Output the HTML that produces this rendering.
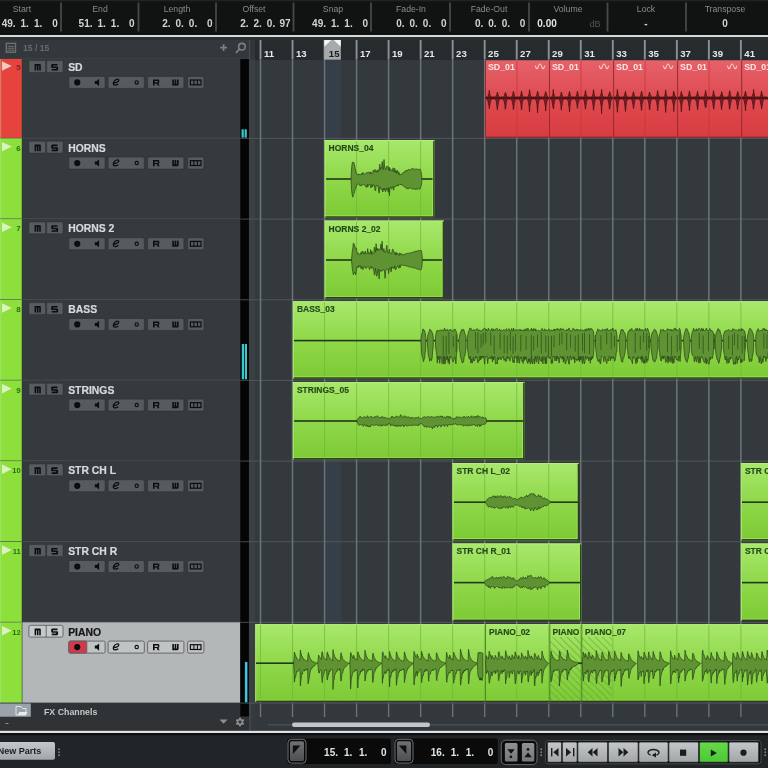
<!DOCTYPE html><html><head><meta charset="utf-8"><style>html,body{margin:0;padding:0;background:#141516;overflow:hidden;width:768px;height:768px}svg{display:block;will-change:transform;filter:blur(0.4px)}</style></head><body>
<svg width="768" height="768" viewBox="0 0 768 768" font-family="'Liberation Sans', sans-serif">
<defs>
<linearGradient id="gclip" x1="0" y1="0" x2="0" y2="1"><stop offset="0" stop-color="#a8e86c"/><stop offset="0.5" stop-color="#90d84a"/><stop offset="1" stop-color="#7cca34"/></linearGradient>
<linearGradient id="rclip" x1="0" y1="0" x2="0" y2="1"><stop offset="0" stop-color="#e6626a"/><stop offset="0.5" stop-color="#de4a50"/><stop offset="1" stop-color="#d83c40"/></linearGradient>
<linearGradient id="gbtnd" x1="0" y1="0" x2="0" y2="1"><stop offset="0" stop-color="#6e7274"/><stop offset="1" stop-color="#4c5052"/></linearGradient>
<linearGradient id="gbtng" x1="0" y1="0" x2="0" y2="1"><stop offset="0" stop-color="#8e9294"/><stop offset="1" stop-color="#74787a"/></linearGradient>
<linearGradient id="ggreen" x1="0" y1="0" x2="0" y2="1"><stop offset="0" stop-color="#66d84a"/><stop offset="1" stop-color="#4cc834"/></linearGradient>
<linearGradient id="gbtn" x1="0" y1="0" x2="0" y2="1"><stop offset="0" stop-color="#c4c8ca"/><stop offset="1" stop-color="#a2a6a8"/></linearGradient>
<pattern id="hatch" width="5" height="5" patternUnits="userSpaceOnUse" patternTransform="rotate(-45)"><rect width="5" height="5" fill="none"/><line x1="0" y1="0" x2="0" y2="5" stroke="#5e9c34" stroke-width="1.1"/></pattern>
</defs>
<rect x="0" y="0" width="768" height="35" fill="#111312"/>
<rect x="0" y="0" width="768" height="1.3" fill="#1f2325"/>
<text x="22.0" y="11.6" font-size="8.7" fill="#878b8d" text-anchor="middle">Start</text>
<text x="100.0" y="11.6" font-size="8.7" fill="#878b8d" text-anchor="middle">End</text>
<text x="177.0" y="11.6" font-size="8.7" fill="#878b8d" text-anchor="middle">Length</text>
<text x="254.0" y="11.6" font-size="8.7" fill="#878b8d" text-anchor="middle">Offset</text>
<text x="333.0" y="11.6" font-size="8.7" fill="#878b8d" text-anchor="middle">Snap</text>
<text x="411.0" y="11.6" font-size="8.7" fill="#878b8d" text-anchor="middle">Fade-In</text>
<text x="489.0" y="11.6" font-size="8.7" fill="#878b8d" text-anchor="middle">Fade-Out</text>
<text x="568.0" y="11.6" font-size="8.7" fill="#878b8d" text-anchor="middle">Volume</text>
<text x="646.0" y="11.6" font-size="8.7" fill="#878b8d" text-anchor="middle">Lock</text>
<text x="725.0" y="11.6" font-size="8.7" fill="#878b8d" text-anchor="middle">Transpose</text>
<rect x="60.1" y="2.5" width="1.8" height="29" fill="#464947"/>
<rect x="137.6" y="2.5" width="1.8" height="29" fill="#464947"/>
<rect x="215.1" y="2.5" width="1.8" height="29" fill="#464947"/>
<rect x="292.6" y="2.5" width="1.8" height="29" fill="#464947"/>
<rect x="370.1" y="2.5" width="1.8" height="29" fill="#464947"/>
<rect x="449.1" y="2.5" width="1.8" height="29" fill="#464947"/>
<rect x="528.1" y="2.5" width="1.8" height="29" fill="#464947"/>
<rect x="606.6" y="2.5" width="1.8" height="29" fill="#464947"/>
<rect x="685.1" y="2.5" width="1.8" height="29" fill="#464947"/>
<text x="15.6" y="26.9" font-size="10" font-weight="bold" fill="#d0d4d4" text-anchor="end">49.</text>
<text x="28.9" y="26.9" font-size="10" font-weight="bold" fill="#d0d4d4" text-anchor="end">1.</text>
<text x="42.3" y="26.9" font-size="10" font-weight="bold" fill="#d0d4d4" text-anchor="end">1.</text>
<text x="57.7" y="26.9" font-size="10" font-weight="bold" fill="#d0d4d4" text-anchor="end">0</text>
<text x="92.5" y="26.9" font-size="10" font-weight="bold" fill="#d0d4d4" text-anchor="end">51.</text>
<text x="105.8" y="26.9" font-size="10" font-weight="bold" fill="#d0d4d4" text-anchor="end">1.</text>
<text x="119.2" y="26.9" font-size="10" font-weight="bold" fill="#d0d4d4" text-anchor="end">1.</text>
<text x="134.6" y="26.9" font-size="10" font-weight="bold" fill="#d0d4d4" text-anchor="end">0</text>
<text x="170.5" y="26.9" font-size="10" font-weight="bold" fill="#d0d4d4" text-anchor="end">2.</text>
<text x="183.8" y="26.9" font-size="10" font-weight="bold" fill="#d0d4d4" text-anchor="end">0.</text>
<text x="197.2" y="26.9" font-size="10" font-weight="bold" fill="#d0d4d4" text-anchor="end">0.</text>
<text x="212.6" y="26.9" font-size="10" font-weight="bold" fill="#d0d4d4" text-anchor="end">0</text>
<text x="248.5" y="26.9" font-size="10" font-weight="bold" fill="#d0d4d4" text-anchor="end">2.</text>
<text x="261.8" y="26.9" font-size="10" font-weight="bold" fill="#d0d4d4" text-anchor="end">2.</text>
<text x="275.2" y="26.9" font-size="10" font-weight="bold" fill="#d0d4d4" text-anchor="end">0.</text>
<text x="290.6" y="26.9" font-size="10" font-weight="bold" fill="#d0d4d4" text-anchor="end">97</text>
<text x="326.0" y="26.9" font-size="10" font-weight="bold" fill="#d0d4d4" text-anchor="end">49.</text>
<text x="339.3" y="26.9" font-size="10" font-weight="bold" fill="#d0d4d4" text-anchor="end">1.</text>
<text x="352.7" y="26.9" font-size="10" font-weight="bold" fill="#d0d4d4" text-anchor="end">1.</text>
<text x="368.1" y="26.9" font-size="10" font-weight="bold" fill="#d0d4d4" text-anchor="end">0</text>
<text x="404.5" y="26.9" font-size="10" font-weight="bold" fill="#d0d4d4" text-anchor="end">0.</text>
<text x="417.8" y="26.9" font-size="10" font-weight="bold" fill="#d0d4d4" text-anchor="end">0.</text>
<text x="431.2" y="26.9" font-size="10" font-weight="bold" fill="#d0d4d4" text-anchor="end">0.</text>
<text x="446.6" y="26.9" font-size="10" font-weight="bold" fill="#d0d4d4" text-anchor="end">0</text>
<text x="483.3" y="26.9" font-size="10" font-weight="bold" fill="#d0d4d4" text-anchor="end">0.</text>
<text x="496.6" y="26.9" font-size="10" font-weight="bold" fill="#d0d4d4" text-anchor="end">0.</text>
<text x="510.0" y="26.9" font-size="10" font-weight="bold" fill="#d0d4d4" text-anchor="end">0.</text>
<text x="525.4" y="26.9" font-size="10" font-weight="bold" fill="#d0d4d4" text-anchor="end">0</text>
<text x="537.3" y="26.9" font-size="10" font-weight="bold" fill="#e0e4e4">0.00</text>
<text x="600.5" y="26.9" font-size="9" fill="#505456" text-anchor="end">dB</text>
<text x="646" y="26.9" font-size="10" font-weight="bold" fill="#d0d4d4" text-anchor="middle">-</text>
<text x="725" y="26.9" font-size="10" font-weight="bold" fill="#d0d4d4" text-anchor="middle">0</text>
<rect x="0" y="35" width="768" height="2" fill="#d6dada"/>
<rect x="0" y="37" width="255" height="693" fill="#343a3d"/>
<rect x="0" y="37" width="249" height="22" fill="#32383b"/>
<rect x="0" y="58.6" width="249" height="1" fill="#464c4f"/>
<rect x="249" y="40" width="1" height="19" fill="#464c4f"/>
<rect x="6.3" y="43.4" width="9.2" height="8.8" fill="none" stroke="#6a6f71" stroke-width="1.4"/>
<rect x="7.6" y="45.9" width="6.6" height="1" fill="#6a6f71"/>
<rect x="7.6" y="47.8" width="6.6" height="1" fill="#6a6f71"/>
<rect x="7.6" y="49.7" width="6.6" height="1" fill="#6a6f71"/>
<text x="23" y="51.2" font-size="8.6" font-weight="bold" fill="#676c6e">15 / 15</text>
<path d="M220.2 47.7h6.8M223.6 44.3v6.8" stroke="#7c8082" stroke-width="1.7"/>
<circle cx="241.9" cy="46.7" r="3.3" fill="none" stroke="#7c8082" stroke-width="1.6"/><path d="M239.5 49.2 L236.4 52.3" stroke="#7c8082" stroke-width="1.8" stroke-linecap="round"/>
<rect x="22" y="59.0" width="218.3" height="79.4" fill="#343a3d"/>
<rect x="0" y="59.0" width="22" height="79.4" fill="#e6433f"/>
<rect x="0" y="59.0" width="1.2" height="79.4" fill="#b8e8a0" opacity="0.35"/>
<rect x="21.6" y="59.0" width="1" height="79.4" fill="#2a3a20" opacity="0.6"/>
<path d="M2 61.2 L2 70.7 L11.7 65.9 Z" fill="#f4f8ee" opacity="0.75"/>
<text x="20.8" y="70.0" font-size="8" font-weight="bold" fill="#8a2220" text-anchor="end">5</text>
<rect x="28.9" y="60.6" width="16.7" height="11.8" rx="1" fill="#575c5f" stroke="#2a2f32" stroke-width="0.5"/>
<rect x="46.7" y="60.6" width="16.3" height="11.8" rx="1" fill="#575c5f" stroke="#2a2f32" stroke-width="0.5"/>
<path d="M34.60 63.93 h5.2 q1 0 1 1 v5.6 h-1.6 v-5 h-0.75 v5 h-1.5 v-5 h-0.75 v5 h-1.6z" fill="#0c0d0e"/>
<path d="M52.20 63.93 h5.3 v1.6 h-4.5 v0.95 h3.9 q1.2 0 1.2 1.2 v1.65 q0 1.2 -1.2 1.2 h-5.2 v-1.6 h4.6 v-0.95 h-3.9 q-1.2 0 -1.2 -1.2 v-1.65 q0 -1.2 1.2 -1.2z" fill="#0c0d0e"/>
<text x="68.2" y="70.8" font-size="10.4" font-weight="bold" fill="#d6dadb" stroke="#d6dadb" stroke-width="0.2">SD</text>
<rect x="68.8" y="76.4" width="36.3" height="12.0" rx="1.5" fill="#565b5e" stroke="#2a2f32" stroke-width="0.6"/>
<rect x="108.1" y="76.4" width="36.2" height="12.0" rx="1.5" fill="#565b5e" stroke="#2a2f32" stroke-width="0.6"/>
<rect x="147.6" y="76.4" width="36.3" height="12.0" rx="1.5" fill="#565b5e" stroke="#2a2f32" stroke-width="0.6"/>
<rect x="187.6" y="76.4" width="16.3" height="12.0" rx="1.5" fill="#565b5e" stroke="#2a2f32" stroke-width="0.6"/>
<circle cx="77.25" cy="82.4" r="3.1" fill="#0c0d0e"/>
<path d="M94.8 80.93 h1.8 l2.5 -2.1 v7.2 l-2.5 -2.1 h-1.8z" fill="#0c0d0e"/>
<path d="M113.6 83.03 c1.6 -0.3 4.6 -0.9 5.1 -2.3 c0.4 -1.2 -0.8 -1.8 -2 -1.4 c-1.9 0.6 -3.6 3 -3.4 4.6 c0.2 1.6 2.6 1.7 4.6 0.4" fill="none" stroke="#0c0d0e" stroke-width="1.25" stroke-linecap="round"/>
<circle cx="136.7" cy="82.4" r="1.7" fill="none" stroke="#0c0d0e" stroke-width="1.1"/>
<path d="M153.00 79.38 h5 q1.3 0 1.3 1.3 v1.3 q0 1 -0.9 1.2 l1.1 2.3 h-1.8 l-1 -2.1 h-2.1 v2.1 h-1.6z M154.60 80.88 v1.4 h3.3 v-1.4z" fill="#0c0d0e" fill-rule="evenodd"/>
<path d="M172.30 79.38 h1.6 v4.5 h0.75 v-4.5 h1.6 v4.5 h0.75 v-4.5 h1.6 v4.8 q0 1.3 -1.3 1.3 h-5 z" fill="#0c0d0e"/>
<rect x="190.4" y="80.0" width="10.6" height="4.8" fill="none" stroke="#0c0d0e" stroke-width="1.2"/>
<path d="M193.9 80.0 v4.8 M197.4 80.0 v4.8" stroke="#0c0d0e" stroke-width="1"/>
<rect x="0" y="137.8" width="768" height="1.2" fill="#50565a"/>
<rect x="22" y="138.4" width="218.3" height="80.7" fill="#343a3d"/>
<rect x="0" y="138.4" width="22" height="80.7" fill="#8de03c"/>
<rect x="0" y="138.4" width="1.2" height="80.7" fill="#b8e8a0" opacity="0.35"/>
<rect x="21.6" y="138.4" width="1" height="80.7" fill="#2a3a20" opacity="0.6"/>
<path d="M2 141.9 L2 151.4 L11.7 146.6 Z" fill="#f4f8ee" opacity="0.75"/>
<text x="20.8" y="150.7" font-size="8" font-weight="bold" fill="#2f6a14" text-anchor="end">6</text>
<rect x="28.9" y="141.3" width="16.7" height="11.8" rx="1" fill="#575c5f" stroke="#2a2f32" stroke-width="0.5"/>
<rect x="46.7" y="141.3" width="16.3" height="11.8" rx="1" fill="#575c5f" stroke="#2a2f32" stroke-width="0.5"/>
<path d="M34.60 144.60 h5.2 q1 0 1 1 v5.6 h-1.6 v-5 h-0.75 v5 h-1.5 v-5 h-0.75 v5 h-1.6z" fill="#0c0d0e"/>
<path d="M52.20 144.60 h5.3 v1.6 h-4.5 v0.95 h3.9 q1.2 0 1.2 1.2 v1.65 q0 1.2 -1.2 1.2 h-5.2 v-1.6 h4.6 v-0.95 h-3.9 q-1.2 0 -1.2 -1.2 v-1.65 q0 -1.2 1.2 -1.2z" fill="#0c0d0e"/>
<text x="68.2" y="151.5" font-size="10.4" font-weight="bold" fill="#d6dadb" stroke="#d6dadb" stroke-width="0.2">HORNS</text>
<rect x="68.8" y="157.1" width="36.3" height="12.0" rx="1.5" fill="#565b5e" stroke="#2a2f32" stroke-width="0.6"/>
<rect x="108.1" y="157.1" width="36.2" height="12.0" rx="1.5" fill="#565b5e" stroke="#2a2f32" stroke-width="0.6"/>
<rect x="147.6" y="157.1" width="36.3" height="12.0" rx="1.5" fill="#565b5e" stroke="#2a2f32" stroke-width="0.6"/>
<rect x="187.6" y="157.1" width="16.3" height="12.0" rx="1.5" fill="#565b5e" stroke="#2a2f32" stroke-width="0.6"/>
<circle cx="77.25" cy="163.1" r="3.1" fill="#0c0d0e"/>
<path d="M94.8 161.60 h1.8 l2.5 -2.1 v7.2 l-2.5 -2.1 h-1.8z" fill="#0c0d0e"/>
<path d="M113.6 163.70 c1.6 -0.3 4.6 -0.9 5.1 -2.3 c0.4 -1.2 -0.8 -1.8 -2 -1.4 c-1.9 0.6 -3.6 3 -3.4 4.6 c0.2 1.6 2.6 1.7 4.6 0.4" fill="none" stroke="#0c0d0e" stroke-width="1.25" stroke-linecap="round"/>
<circle cx="136.7" cy="163.1" r="1.7" fill="none" stroke="#0c0d0e" stroke-width="1.1"/>
<path d="M153.00 160.05 h5 q1.3 0 1.3 1.3 v1.3 q0 1 -0.9 1.2 l1.1 2.3 h-1.8 l-1 -2.1 h-2.1 v2.1 h-1.6z M154.60 161.55 v1.4 h3.3 v-1.4z" fill="#0c0d0e" fill-rule="evenodd"/>
<path d="M172.30 160.05 h1.6 v4.5 h0.75 v-4.5 h1.6 v4.5 h0.75 v-4.5 h1.6 v4.8 q0 1.3 -1.3 1.3 h-5 z" fill="#0c0d0e"/>
<rect x="190.4" y="160.7" width="10.6" height="4.8" fill="none" stroke="#0c0d0e" stroke-width="1.2"/>
<path d="M193.9 160.7 v4.8 M197.4 160.7 v4.8" stroke="#0c0d0e" stroke-width="1"/>
<rect x="0" y="218.5" width="768" height="1.2" fill="#50565a"/>
<rect x="22" y="219.1" width="218.3" height="80.7" fill="#343a3d"/>
<rect x="0" y="219.1" width="22" height="80.7" fill="#8de03c"/>
<rect x="0" y="219.1" width="1.2" height="80.7" fill="#b8e8a0" opacity="0.35"/>
<rect x="21.6" y="219.1" width="1" height="80.7" fill="#2a3a20" opacity="0.6"/>
<path d="M2 222.6 L2 232.1 L11.7 227.3 Z" fill="#f4f8ee" opacity="0.75"/>
<text x="20.8" y="231.4" font-size="8" font-weight="bold" fill="#2f6a14" text-anchor="end">7</text>
<rect x="28.9" y="222.0" width="16.7" height="11.8" rx="1" fill="#575c5f" stroke="#2a2f32" stroke-width="0.5"/>
<rect x="46.7" y="222.0" width="16.3" height="11.8" rx="1" fill="#575c5f" stroke="#2a2f32" stroke-width="0.5"/>
<path d="M34.60 225.27 h5.2 q1 0 1 1 v5.6 h-1.6 v-5 h-0.75 v5 h-1.5 v-5 h-0.75 v5 h-1.6z" fill="#0c0d0e"/>
<path d="M52.20 225.27 h5.3 v1.6 h-4.5 v0.95 h3.9 q1.2 0 1.2 1.2 v1.65 q0 1.2 -1.2 1.2 h-5.2 v-1.6 h4.6 v-0.95 h-3.9 q-1.2 0 -1.2 -1.2 v-1.65 q0 -1.2 1.2 -1.2z" fill="#0c0d0e"/>
<text x="68.2" y="232.2" font-size="10.4" font-weight="bold" fill="#d6dadb" stroke="#d6dadb" stroke-width="0.2">HORNS 2</text>
<rect x="68.8" y="237.8" width="36.3" height="12.0" rx="1.5" fill="#565b5e" stroke="#2a2f32" stroke-width="0.6"/>
<rect x="108.1" y="237.8" width="36.2" height="12.0" rx="1.5" fill="#565b5e" stroke="#2a2f32" stroke-width="0.6"/>
<rect x="147.6" y="237.8" width="36.3" height="12.0" rx="1.5" fill="#565b5e" stroke="#2a2f32" stroke-width="0.6"/>
<rect x="187.6" y="237.8" width="16.3" height="12.0" rx="1.5" fill="#565b5e" stroke="#2a2f32" stroke-width="0.6"/>
<circle cx="77.25" cy="243.8" r="3.1" fill="#0c0d0e"/>
<path d="M94.8 242.27 h1.8 l2.5 -2.1 v7.2 l-2.5 -2.1 h-1.8z" fill="#0c0d0e"/>
<path d="M113.6 244.37 c1.6 -0.3 4.6 -0.9 5.1 -2.3 c0.4 -1.2 -0.8 -1.8 -2 -1.4 c-1.9 0.6 -3.6 3 -3.4 4.6 c0.2 1.6 2.6 1.7 4.6 0.4" fill="none" stroke="#0c0d0e" stroke-width="1.25" stroke-linecap="round"/>
<circle cx="136.7" cy="243.8" r="1.7" fill="none" stroke="#0c0d0e" stroke-width="1.1"/>
<path d="M153.00 240.72 h5 q1.3 0 1.3 1.3 v1.3 q0 1 -0.9 1.2 l1.1 2.3 h-1.8 l-1 -2.1 h-2.1 v2.1 h-1.6z M154.60 242.22 v1.4 h3.3 v-1.4z" fill="#0c0d0e" fill-rule="evenodd"/>
<path d="M172.30 240.72 h1.6 v4.5 h0.75 v-4.5 h1.6 v4.5 h0.75 v-4.5 h1.6 v4.8 q0 1.3 -1.3 1.3 h-5 z" fill="#0c0d0e"/>
<rect x="190.4" y="241.4" width="10.6" height="4.8" fill="none" stroke="#0c0d0e" stroke-width="1.2"/>
<path d="M193.9 241.4 v4.8 M197.4 241.4 v4.8" stroke="#0c0d0e" stroke-width="1"/>
<rect x="0" y="299.1" width="768" height="1.2" fill="#50565a"/>
<rect x="22" y="299.7" width="218.3" height="80.7" fill="#343a3d"/>
<rect x="0" y="299.7" width="22" height="80.7" fill="#8de03c"/>
<rect x="0" y="299.7" width="1.2" height="80.7" fill="#b8e8a0" opacity="0.35"/>
<rect x="21.6" y="299.7" width="1" height="80.7" fill="#2a3a20" opacity="0.6"/>
<path d="M2 303.2 L2 312.7 L11.7 307.9 Z" fill="#f4f8ee" opacity="0.75"/>
<text x="20.8" y="312.0" font-size="8" font-weight="bold" fill="#2f6a14" text-anchor="end">8</text>
<rect x="28.9" y="302.6" width="16.7" height="11.8" rx="1" fill="#575c5f" stroke="#2a2f32" stroke-width="0.5"/>
<rect x="46.7" y="302.6" width="16.3" height="11.8" rx="1" fill="#575c5f" stroke="#2a2f32" stroke-width="0.5"/>
<path d="M34.60 305.94 h5.2 q1 0 1 1 v5.6 h-1.6 v-5 h-0.75 v5 h-1.5 v-5 h-0.75 v5 h-1.6z" fill="#0c0d0e"/>
<path d="M52.20 305.94 h5.3 v1.6 h-4.5 v0.95 h3.9 q1.2 0 1.2 1.2 v1.65 q0 1.2 -1.2 1.2 h-5.2 v-1.6 h4.6 v-0.95 h-3.9 q-1.2 0 -1.2 -1.2 v-1.65 q0 -1.2 1.2 -1.2z" fill="#0c0d0e"/>
<text x="68.2" y="312.8" font-size="10.4" font-weight="bold" fill="#d6dadb" stroke="#d6dadb" stroke-width="0.2">BASS</text>
<rect x="68.8" y="318.4" width="36.3" height="12.0" rx="1.5" fill="#565b5e" stroke="#2a2f32" stroke-width="0.6"/>
<rect x="108.1" y="318.4" width="36.2" height="12.0" rx="1.5" fill="#565b5e" stroke="#2a2f32" stroke-width="0.6"/>
<rect x="147.6" y="318.4" width="36.3" height="12.0" rx="1.5" fill="#565b5e" stroke="#2a2f32" stroke-width="0.6"/>
<rect x="187.6" y="318.4" width="16.3" height="12.0" rx="1.5" fill="#565b5e" stroke="#2a2f32" stroke-width="0.6"/>
<circle cx="77.25" cy="324.4" r="3.1" fill="#0c0d0e"/>
<path d="M94.8 322.94 h1.8 l2.5 -2.1 v7.2 l-2.5 -2.1 h-1.8z" fill="#0c0d0e"/>
<path d="M113.6 325.04 c1.6 -0.3 4.6 -0.9 5.1 -2.3 c0.4 -1.2 -0.8 -1.8 -2 -1.4 c-1.9 0.6 -3.6 3 -3.4 4.6 c0.2 1.6 2.6 1.7 4.6 0.4" fill="none" stroke="#0c0d0e" stroke-width="1.25" stroke-linecap="round"/>
<circle cx="136.7" cy="324.4" r="1.7" fill="none" stroke="#0c0d0e" stroke-width="1.1"/>
<path d="M153.00 321.39 h5 q1.3 0 1.3 1.3 v1.3 q0 1 -0.9 1.2 l1.1 2.3 h-1.8 l-1 -2.1 h-2.1 v2.1 h-1.6z M154.60 322.89 v1.4 h3.3 v-1.4z" fill="#0c0d0e" fill-rule="evenodd"/>
<path d="M172.30 321.39 h1.6 v4.5 h0.75 v-4.5 h1.6 v4.5 h0.75 v-4.5 h1.6 v4.8 q0 1.3 -1.3 1.3 h-5 z" fill="#0c0d0e"/>
<rect x="190.4" y="322.0" width="10.6" height="4.8" fill="none" stroke="#0c0d0e" stroke-width="1.2"/>
<path d="M193.9 322.0 v4.8 M197.4 322.0 v4.8" stroke="#0c0d0e" stroke-width="1"/>
<rect x="0" y="379.8" width="768" height="1.2" fill="#50565a"/>
<rect x="22" y="380.4" width="218.3" height="80.7" fill="#343a3d"/>
<rect x="0" y="380.4" width="22" height="80.7" fill="#8de03c"/>
<rect x="0" y="380.4" width="1.2" height="80.7" fill="#b8e8a0" opacity="0.35"/>
<rect x="21.6" y="380.4" width="1" height="80.7" fill="#2a3a20" opacity="0.6"/>
<path d="M2 383.9 L2 393.4 L11.7 388.6 Z" fill="#f4f8ee" opacity="0.75"/>
<text x="20.8" y="392.7" font-size="8" font-weight="bold" fill="#2f6a14" text-anchor="end">9</text>
<rect x="28.9" y="383.3" width="16.7" height="11.8" rx="1" fill="#575c5f" stroke="#2a2f32" stroke-width="0.5"/>
<rect x="46.7" y="383.3" width="16.3" height="11.8" rx="1" fill="#575c5f" stroke="#2a2f32" stroke-width="0.5"/>
<path d="M34.60 386.61 h5.2 q1 0 1 1 v5.6 h-1.6 v-5 h-0.75 v5 h-1.5 v-5 h-0.75 v5 h-1.6z" fill="#0c0d0e"/>
<path d="M52.20 386.61 h5.3 v1.6 h-4.5 v0.95 h3.9 q1.2 0 1.2 1.2 v1.65 q0 1.2 -1.2 1.2 h-5.2 v-1.6 h4.6 v-0.95 h-3.9 q-1.2 0 -1.2 -1.2 v-1.65 q0 -1.2 1.2 -1.2z" fill="#0c0d0e"/>
<text x="68.2" y="393.5" font-size="10.4" font-weight="bold" fill="#d6dadb" stroke="#d6dadb" stroke-width="0.2">STRINGS</text>
<rect x="68.8" y="399.1" width="36.3" height="12.0" rx="1.5" fill="#565b5e" stroke="#2a2f32" stroke-width="0.6"/>
<rect x="108.1" y="399.1" width="36.2" height="12.0" rx="1.5" fill="#565b5e" stroke="#2a2f32" stroke-width="0.6"/>
<rect x="147.6" y="399.1" width="36.3" height="12.0" rx="1.5" fill="#565b5e" stroke="#2a2f32" stroke-width="0.6"/>
<rect x="187.6" y="399.1" width="16.3" height="12.0" rx="1.5" fill="#565b5e" stroke="#2a2f32" stroke-width="0.6"/>
<circle cx="77.25" cy="405.1" r="3.1" fill="#0c0d0e"/>
<path d="M94.8 403.61 h1.8 l2.5 -2.1 v7.2 l-2.5 -2.1 h-1.8z" fill="#0c0d0e"/>
<path d="M113.6 405.71 c1.6 -0.3 4.6 -0.9 5.1 -2.3 c0.4 -1.2 -0.8 -1.8 -2 -1.4 c-1.9 0.6 -3.6 3 -3.4 4.6 c0.2 1.6 2.6 1.7 4.6 0.4" fill="none" stroke="#0c0d0e" stroke-width="1.25" stroke-linecap="round"/>
<circle cx="136.7" cy="405.1" r="1.7" fill="none" stroke="#0c0d0e" stroke-width="1.1"/>
<path d="M153.00 402.06 h5 q1.3 0 1.3 1.3 v1.3 q0 1 -0.9 1.2 l1.1 2.3 h-1.8 l-1 -2.1 h-2.1 v2.1 h-1.6z M154.60 403.56 v1.4 h3.3 v-1.4z" fill="#0c0d0e" fill-rule="evenodd"/>
<path d="M172.30 402.06 h1.6 v4.5 h0.75 v-4.5 h1.6 v4.5 h0.75 v-4.5 h1.6 v4.8 q0 1.3 -1.3 1.3 h-5 z" fill="#0c0d0e"/>
<rect x="190.4" y="402.7" width="10.6" height="4.8" fill="none" stroke="#0c0d0e" stroke-width="1.2"/>
<path d="M193.9 402.7 v4.8 M197.4 402.7 v4.8" stroke="#0c0d0e" stroke-width="1"/>
<rect x="0" y="460.5" width="768" height="1.2" fill="#50565a"/>
<rect x="22" y="461.1" width="218.3" height="80.7" fill="#343a3d"/>
<rect x="0" y="461.1" width="22" height="80.7" fill="#8de03c"/>
<rect x="0" y="461.1" width="1.2" height="80.7" fill="#b8e8a0" opacity="0.35"/>
<rect x="21.6" y="461.1" width="1" height="80.7" fill="#2a3a20" opacity="0.6"/>
<path d="M2 464.6 L2 474.1 L11.7 469.3 Z" fill="#f4f8ee" opacity="0.75"/>
<text x="20.8" y="473.4" font-size="7.6" font-weight="bold" fill="#2f6a14" text-anchor="end">10</text>
<rect x="28.9" y="464.0" width="16.7" height="11.8" rx="1" fill="#575c5f" stroke="#2a2f32" stroke-width="0.5"/>
<rect x="46.7" y="464.0" width="16.3" height="11.8" rx="1" fill="#575c5f" stroke="#2a2f32" stroke-width="0.5"/>
<path d="M34.60 467.28 h5.2 q1 0 1 1 v5.6 h-1.6 v-5 h-0.75 v5 h-1.5 v-5 h-0.75 v5 h-1.6z" fill="#0c0d0e"/>
<path d="M52.20 467.28 h5.3 v1.6 h-4.5 v0.95 h3.9 q1.2 0 1.2 1.2 v1.65 q0 1.2 -1.2 1.2 h-5.2 v-1.6 h4.6 v-0.95 h-3.9 q-1.2 0 -1.2 -1.2 v-1.65 q0 -1.2 1.2 -1.2z" fill="#0c0d0e"/>
<text x="68.2" y="474.2" font-size="10.4" font-weight="bold" fill="#d6dadb" stroke="#d6dadb" stroke-width="0.2">STR CH L</text>
<rect x="68.8" y="479.8" width="36.3" height="12.0" rx="1.5" fill="#565b5e" stroke="#2a2f32" stroke-width="0.6"/>
<rect x="108.1" y="479.8" width="36.2" height="12.0" rx="1.5" fill="#565b5e" stroke="#2a2f32" stroke-width="0.6"/>
<rect x="147.6" y="479.8" width="36.3" height="12.0" rx="1.5" fill="#565b5e" stroke="#2a2f32" stroke-width="0.6"/>
<rect x="187.6" y="479.8" width="16.3" height="12.0" rx="1.5" fill="#565b5e" stroke="#2a2f32" stroke-width="0.6"/>
<circle cx="77.25" cy="485.8" r="3.1" fill="#0c0d0e"/>
<path d="M94.8 484.28 h1.8 l2.5 -2.1 v7.2 l-2.5 -2.1 h-1.8z" fill="#0c0d0e"/>
<path d="M113.6 486.38 c1.6 -0.3 4.6 -0.9 5.1 -2.3 c0.4 -1.2 -0.8 -1.8 -2 -1.4 c-1.9 0.6 -3.6 3 -3.4 4.6 c0.2 1.6 2.6 1.7 4.6 0.4" fill="none" stroke="#0c0d0e" stroke-width="1.25" stroke-linecap="round"/>
<circle cx="136.7" cy="485.8" r="1.7" fill="none" stroke="#0c0d0e" stroke-width="1.1"/>
<path d="M153.00 482.73 h5 q1.3 0 1.3 1.3 v1.3 q0 1 -0.9 1.2 l1.1 2.3 h-1.8 l-1 -2.1 h-2.1 v2.1 h-1.6z M154.60 484.23 v1.4 h3.3 v-1.4z" fill="#0c0d0e" fill-rule="evenodd"/>
<path d="M172.30 482.73 h1.6 v4.5 h0.75 v-4.5 h1.6 v4.5 h0.75 v-4.5 h1.6 v4.8 q0 1.3 -1.3 1.3 h-5 z" fill="#0c0d0e"/>
<rect x="190.4" y="483.4" width="10.6" height="4.8" fill="none" stroke="#0c0d0e" stroke-width="1.2"/>
<path d="M193.9 483.4 v4.8 M197.4 483.4 v4.8" stroke="#0c0d0e" stroke-width="1"/>
<rect x="0" y="541.1" width="768" height="1.2" fill="#50565a"/>
<rect x="22" y="541.8" width="218.3" height="80.7" fill="#343a3d"/>
<rect x="0" y="541.8" width="22" height="80.7" fill="#8de03c"/>
<rect x="0" y="541.8" width="1.2" height="80.7" fill="#b8e8a0" opacity="0.35"/>
<rect x="21.6" y="541.8" width="1" height="80.7" fill="#2a3a20" opacity="0.6"/>
<path d="M2 545.2 L2 554.8 L11.7 550.0 Z" fill="#f4f8ee" opacity="0.75"/>
<text x="20.8" y="554.0" font-size="7.6" font-weight="bold" fill="#2f6a14" text-anchor="end">11</text>
<rect x="28.9" y="544.6" width="16.7" height="11.8" rx="1" fill="#575c5f" stroke="#2a2f32" stroke-width="0.5"/>
<rect x="46.7" y="544.6" width="16.3" height="11.8" rx="1" fill="#575c5f" stroke="#2a2f32" stroke-width="0.5"/>
<path d="M34.60 547.95 h5.2 q1 0 1 1 v5.6 h-1.6 v-5 h-0.75 v5 h-1.5 v-5 h-0.75 v5 h-1.6z" fill="#0c0d0e"/>
<path d="M52.20 547.95 h5.3 v1.6 h-4.5 v0.95 h3.9 q1.2 0 1.2 1.2 v1.65 q0 1.2 -1.2 1.2 h-5.2 v-1.6 h4.6 v-0.95 h-3.9 q-1.2 0 -1.2 -1.2 v-1.65 q0 -1.2 1.2 -1.2z" fill="#0c0d0e"/>
<text x="68.2" y="554.9" font-size="10.4" font-weight="bold" fill="#d6dadb" stroke="#d6dadb" stroke-width="0.2">STR CH R</text>
<rect x="68.8" y="560.5" width="36.3" height="12.0" rx="1.5" fill="#565b5e" stroke="#2a2f32" stroke-width="0.6"/>
<rect x="108.1" y="560.5" width="36.2" height="12.0" rx="1.5" fill="#565b5e" stroke="#2a2f32" stroke-width="0.6"/>
<rect x="147.6" y="560.5" width="36.3" height="12.0" rx="1.5" fill="#565b5e" stroke="#2a2f32" stroke-width="0.6"/>
<rect x="187.6" y="560.5" width="16.3" height="12.0" rx="1.5" fill="#565b5e" stroke="#2a2f32" stroke-width="0.6"/>
<circle cx="77.25" cy="566.5" r="3.1" fill="#0c0d0e"/>
<path d="M94.8 564.95 h1.8 l2.5 -2.1 v7.2 l-2.5 -2.1 h-1.8z" fill="#0c0d0e"/>
<path d="M113.6 567.05 c1.6 -0.3 4.6 -0.9 5.1 -2.3 c0.4 -1.2 -0.8 -1.8 -2 -1.4 c-1.9 0.6 -3.6 3 -3.4 4.6 c0.2 1.6 2.6 1.7 4.6 0.4" fill="none" stroke="#0c0d0e" stroke-width="1.25" stroke-linecap="round"/>
<circle cx="136.7" cy="566.5" r="1.7" fill="none" stroke="#0c0d0e" stroke-width="1.1"/>
<path d="M153.00 563.40 h5 q1.3 0 1.3 1.3 v1.3 q0 1 -0.9 1.2 l1.1 2.3 h-1.8 l-1 -2.1 h-2.1 v2.1 h-1.6z M154.60 564.90 v1.4 h3.3 v-1.4z" fill="#0c0d0e" fill-rule="evenodd"/>
<path d="M172.30 563.40 h1.6 v4.5 h0.75 v-4.5 h1.6 v4.5 h0.75 v-4.5 h1.6 v4.8 q0 1.3 -1.3 1.3 h-5 z" fill="#0c0d0e"/>
<rect x="190.4" y="564.1" width="10.6" height="4.8" fill="none" stroke="#0c0d0e" stroke-width="1.2"/>
<path d="M193.9 564.1 v4.8 M197.4 564.1 v4.8" stroke="#0c0d0e" stroke-width="1"/>
<rect x="0" y="621.8" width="768" height="1.2" fill="#50565a"/>
<rect x="22" y="622.4" width="218.3" height="80.7" fill="#b3b7b8"/>
<rect x="0" y="622.4" width="22" height="80.7" fill="#8de03c"/>
<rect x="0" y="622.4" width="1.2" height="80.7" fill="#b8e8a0" opacity="0.35"/>
<rect x="21.6" y="622.4" width="1" height="80.7" fill="#2a3a20" opacity="0.6"/>
<path d="M2 625.9 L2 635.4 L11.7 630.6 Z" fill="#f4f8ee" opacity="0.75"/>
<text x="20.8" y="634.7" font-size="7.6" font-weight="bold" fill="#2f6a14" text-anchor="end">12</text>
<rect x="28.9" y="625.3" width="34.1" height="11.8" rx="1.5" fill="#c6cacb" stroke="#5c6062" stroke-width="0.9"/>
<rect x="45.7" y="625.3" width="0.9" height="11.8" fill="#5c6062"/>
<path d="M34.60 628.62 h5.2 q1 0 1 1 v5.6 h-1.6 v-5 h-0.75 v5 h-1.5 v-5 h-0.75 v5 h-1.6z" fill="#0c0d0e"/>
<path d="M52.20 628.62 h5.3 v1.6 h-4.5 v0.95 h3.9 q1.2 0 1.2 1.2 v1.65 q0 1.2 -1.2 1.2 h-5.2 v-1.6 h4.6 v-0.95 h-3.9 q-1.2 0 -1.2 -1.2 v-1.65 q0 -1.2 1.2 -1.2z" fill="#0c0d0e"/>
<text x="68.2" y="635.5" font-size="10.4" font-weight="bold" fill="#151718" stroke="#151718" stroke-width="0.2">PIANO</text>
<rect x="68.8" y="641.1" width="36.3" height="12.0" rx="1.5" fill="#c0c4c5" stroke="#5c6062" stroke-width="0.9"/>
<rect x="108.1" y="641.1" width="36.2" height="12.0" rx="1.5" fill="#c0c4c5" stroke="#5c6062" stroke-width="0.9"/>
<rect x="147.6" y="641.1" width="36.3" height="12.0" rx="1.5" fill="#c0c4c5" stroke="#5c6062" stroke-width="0.9"/>
<rect x="187.6" y="641.1" width="16.3" height="12.0" rx="1.5" fill="#c0c4c5" stroke="#5c6062" stroke-width="0.9"/>
<rect x="68.8" y="641.1" width="18" height="12.0" rx="1.5" fill="#d23a4c" stroke="#5c6062" stroke-width="0.9"/>
<circle cx="77.25" cy="647.1" r="3.1" fill="#0c0d0e"/>
<path d="M94.8 645.62 h1.8 l2.5 -2.1 v7.2 l-2.5 -2.1 h-1.8z" fill="#0c0d0e"/>
<path d="M113.6 647.72 c1.6 -0.3 4.6 -0.9 5.1 -2.3 c0.4 -1.2 -0.8 -1.8 -2 -1.4 c-1.9 0.6 -3.6 3 -3.4 4.6 c0.2 1.6 2.6 1.7 4.6 0.4" fill="none" stroke="#0c0d0e" stroke-width="1.25" stroke-linecap="round"/>
<circle cx="136.7" cy="647.1" r="1.7" fill="none" stroke="#0c0d0e" stroke-width="1.1"/>
<path d="M153.00 644.07 h5 q1.3 0 1.3 1.3 v1.3 q0 1 -0.9 1.2 l1.1 2.3 h-1.8 l-1 -2.1 h-2.1 v2.1 h-1.6z M154.60 645.57 v1.4 h3.3 v-1.4z" fill="#0c0d0e" fill-rule="evenodd"/>
<path d="M172.30 644.07 h1.6 v4.5 h0.75 v-4.5 h1.6 v4.5 h0.75 v-4.5 h1.6 v4.8 q0 1.3 -1.3 1.3 h-5 z" fill="#0c0d0e"/>
<rect x="190.4" y="644.7" width="10.6" height="4.8" fill="none" stroke="#0c0d0e" stroke-width="1.2"/>
<path d="M193.9 644.7 v4.8 M197.4 644.7 v4.8" stroke="#0c0d0e" stroke-width="1"/>
<rect x="0" y="702.5" width="768" height="1.2" fill="#50565a"/>
<rect x="0" y="703" width="249" height="27" fill="#2f3336"/>
<rect x="0" y="703.5" width="30.8" height="13.2" fill="#9aa3aa"/>
<path d="M16 706.5 h5 l1.5 2 h3.5 v6.5 h-10z" fill="none" stroke="#e8ecee" stroke-width="0.9"/><path d="M17.5 715 l2 -3 h8 l-2 3z" fill="#e8ecee"/>
<text x="44" y="715.3" font-size="8.8" font-weight="bold" fill="#c4c8c8">FX Channels</text>
<rect x="5.5" y="723" width="3" height="1" fill="#8a8e90"/>
<path d="M219.4 719.4 h8.2 l-4.1 4.3z" fill="#8a8e90"/>
<g transform="translate(240 722)" fill="#888c8e"><rect x="-1" y="-4.4" width="2" height="2.2" transform="rotate(0)"/><rect x="-1" y="-4.4" width="2" height="2.2" transform="rotate(60)"/><rect x="-1" y="-4.4" width="2" height="2.2" transform="rotate(120)"/><rect x="-1" y="-4.4" width="2" height="2.2" transform="rotate(180)"/><rect x="-1" y="-4.4" width="2" height="2.2" transform="rotate(240)"/><rect x="-1" y="-4.4" width="2" height="2.2" transform="rotate(300)"/><circle r="3.2"/><circle r="1.4" fill="#2f3336"/></g>
<rect x="240.3" y="59" width="8.6" height="657.5" fill="#050505"/>
<rect x="241.6" y="129.3" width="2.2" height="8.4" fill="#3ac8d0"/><rect x="244.6" y="129.3" width="2.2" height="8.4" fill="#3ac8d0"/>
<rect x="241.8" y="344" width="2.2" height="35.3" fill="#3ac8d0"/><rect x="244.8" y="344" width="2.2" height="35.3" fill="#3ac8d0"/>
<rect x="244.9" y="662" width="2.5" height="40.5" fill="#40c6dc"/>
<rect x="240.3" y="137.8" width="8.6" height="1.2" fill="#3a4044"/>
<rect x="240.3" y="218.5" width="8.6" height="1.2" fill="#3a4044"/>
<rect x="240.3" y="299.1" width="8.6" height="1.2" fill="#3a4044"/>
<rect x="240.3" y="379.8" width="8.6" height="1.2" fill="#3a4044"/>
<rect x="240.3" y="460.5" width="8.6" height="1.2" fill="#3a4044"/>
<rect x="240.3" y="541.1" width="8.6" height="1.2" fill="#3a4044"/>
<rect x="240.3" y="621.8" width="8.6" height="1.2" fill="#3a4044"/>
<rect x="240.3" y="702.5" width="8.6" height="1.2" fill="#3a4044"/>
<rect x="249" y="37" width="6" height="666" fill="#393f42"/>
<rect x="249.5" y="40" width="5.5" height="19.5" fill="#30363a"/>
<rect x="249" y="40" width="1" height="19.5" fill="#4a5052"/>
<rect x="249.5" y="703" width="1" height="27" fill="#4c5154"/>
<rect x="0" y="37" width="768" height="3" fill="#2c3234"/>
<rect x="255" y="40" width="513" height="19.5" fill="#262b2d"/>
<rect x="255" y="59.5" width="513" height="643.5" fill="#33393c"/>
<rect x="255" y="703" width="513" height="27" fill="#32383b"/>
<rect x="324.5" y="59.5" width="16.5" height="644" fill="#3a4858" opacity="0.45"/>
<rect x="249" y="137.8" width="519" height="1.2" fill="#4c5256"/>
<rect x="249" y="218.5" width="519" height="1.2" fill="#4c5256"/>
<rect x="249" y="299.1" width="519" height="1.2" fill="#4c5256"/>
<rect x="249" y="379.8" width="519" height="1.2" fill="#4c5256"/>
<rect x="249" y="460.5" width="519" height="1.2" fill="#4c5256"/>
<rect x="249" y="541.1" width="519" height="1.2" fill="#4c5256"/>
<rect x="249" y="621.8" width="519" height="1.2" fill="#4c5256"/>
<rect x="249" y="702.5" width="519" height="1.2" fill="#4c5256"/>
<rect x="259.55" y="40" width="1.9" height="19.5" fill="#8a9094"/>
<rect x="259.75" y="59.5" width="1.5" height="643.5" fill="#6c7478"/>
<rect x="259.80" y="704" width="1.4" height="13" fill="#6a7276"/>
<text x="263.9" y="56.9" font-size="9.6" font-weight="bold" fill="#e4e8e8">11</text>
<rect x="291.58" y="40" width="1.9" height="19.5" fill="#8a9094"/>
<rect x="291.78" y="59.5" width="1.5" height="643.5" fill="#6c7478"/>
<rect x="291.83" y="704" width="1.4" height="13" fill="#6a7276"/>
<text x="295.9" y="56.9" font-size="9.6" font-weight="bold" fill="#e4e8e8">13</text>
<rect x="323.60" y="40" width="1.9" height="19.5" fill="#8a9094"/>
<rect x="323.80" y="59.5" width="1.5" height="643.5" fill="#6c7478"/>
<rect x="323.85" y="704" width="1.4" height="13" fill="#6a7276"/>
<text x="328.0" y="56.9" font-size="9.6" font-weight="bold" fill="#e4e8e8">15</text>
<rect x="355.63" y="40" width="1.9" height="19.5" fill="#8a9094"/>
<rect x="355.83" y="59.5" width="1.5" height="643.5" fill="#6c7478"/>
<rect x="355.88" y="704" width="1.4" height="13" fill="#6a7276"/>
<text x="360.0" y="56.9" font-size="9.6" font-weight="bold" fill="#e4e8e8">17</text>
<rect x="387.65" y="40" width="1.9" height="19.5" fill="#8a9094"/>
<rect x="387.85" y="59.5" width="1.5" height="643.5" fill="#6c7478"/>
<rect x="387.90" y="704" width="1.4" height="13" fill="#6a7276"/>
<text x="392.0" y="56.9" font-size="9.6" font-weight="bold" fill="#e4e8e8">19</text>
<rect x="419.68" y="40" width="1.9" height="19.5" fill="#8a9094"/>
<rect x="419.88" y="59.5" width="1.5" height="643.5" fill="#6c7478"/>
<rect x="419.93" y="704" width="1.4" height="13" fill="#6a7276"/>
<text x="424.0" y="56.9" font-size="9.6" font-weight="bold" fill="#e4e8e8">21</text>
<rect x="451.71" y="40" width="1.9" height="19.5" fill="#8a9094"/>
<rect x="451.91" y="59.5" width="1.5" height="643.5" fill="#6c7478"/>
<rect x="451.96" y="704" width="1.4" height="13" fill="#6a7276"/>
<text x="456.1" y="56.9" font-size="9.6" font-weight="bold" fill="#e4e8e8">23</text>
<rect x="483.73" y="40" width="1.9" height="19.5" fill="#8a9094"/>
<rect x="483.93" y="59.5" width="1.5" height="643.5" fill="#6c7478"/>
<rect x="483.98" y="704" width="1.4" height="13" fill="#6a7276"/>
<text x="488.1" y="56.9" font-size="9.6" font-weight="bold" fill="#e4e8e8">25</text>
<rect x="515.76" y="40" width="1.9" height="19.5" fill="#8a9094"/>
<rect x="515.96" y="59.5" width="1.5" height="643.5" fill="#6c7478"/>
<rect x="516.01" y="704" width="1.4" height="13" fill="#6a7276"/>
<text x="520.1" y="56.9" font-size="9.6" font-weight="bold" fill="#e4e8e8">27</text>
<rect x="547.78" y="40" width="1.9" height="19.5" fill="#8a9094"/>
<rect x="547.98" y="59.5" width="1.5" height="643.5" fill="#6c7478"/>
<rect x="548.03" y="704" width="1.4" height="13" fill="#6a7276"/>
<text x="552.1" y="56.9" font-size="9.6" font-weight="bold" fill="#e4e8e8">29</text>
<rect x="579.81" y="40" width="1.9" height="19.5" fill="#8a9094"/>
<rect x="580.01" y="59.5" width="1.5" height="643.5" fill="#6c7478"/>
<rect x="580.06" y="704" width="1.4" height="13" fill="#6a7276"/>
<text x="584.2" y="56.9" font-size="9.6" font-weight="bold" fill="#e4e8e8">31</text>
<rect x="611.84" y="40" width="1.9" height="19.5" fill="#8a9094"/>
<rect x="612.04" y="59.5" width="1.5" height="643.5" fill="#6c7478"/>
<rect x="612.09" y="704" width="1.4" height="13" fill="#6a7276"/>
<text x="616.2" y="56.9" font-size="9.6" font-weight="bold" fill="#e4e8e8">33</text>
<rect x="643.86" y="40" width="1.9" height="19.5" fill="#8a9094"/>
<rect x="644.06" y="59.5" width="1.5" height="643.5" fill="#6c7478"/>
<rect x="644.11" y="704" width="1.4" height="13" fill="#6a7276"/>
<text x="648.2" y="56.9" font-size="9.6" font-weight="bold" fill="#e4e8e8">35</text>
<rect x="675.89" y="40" width="1.9" height="19.5" fill="#8a9094"/>
<rect x="676.09" y="59.5" width="1.5" height="643.5" fill="#6c7478"/>
<rect x="676.14" y="704" width="1.4" height="13" fill="#6a7276"/>
<text x="680.2" y="56.9" font-size="9.6" font-weight="bold" fill="#e4e8e8">37</text>
<rect x="707.91" y="40" width="1.9" height="19.5" fill="#8a9094"/>
<rect x="708.11" y="59.5" width="1.5" height="643.5" fill="#6c7478"/>
<rect x="708.16" y="704" width="1.4" height="13" fill="#6a7276"/>
<text x="712.3" y="56.9" font-size="9.6" font-weight="bold" fill="#e4e8e8">39</text>
<rect x="739.94" y="40" width="1.9" height="19.5" fill="#8a9094"/>
<rect x="740.14" y="59.5" width="1.5" height="643.5" fill="#6c7478"/>
<rect x="740.19" y="704" width="1.4" height="13" fill="#6a7276"/>
<text x="744.3" y="56.9" font-size="9.6" font-weight="bold" fill="#e4e8e8">41</text>
<rect x="324.3" y="40" width="16.5" height="19.7" fill="#a6aaac"/>
<path d="M324.3 40 h7 l-7 6.8z M340.8 40 h-7 l7 6.8z" fill="#f4f6f6"/>
<text x="328.8" y="56.9" font-size="9.6" font-weight="bold" fill="#1a1c1e">15</text>
<rect x="268" y="724.3" width="500" height="1" fill="#55595c"/>
<rect x="292" y="722.5" width="138" height="4.5" rx="2.2" fill="#c2c6c8"/>
<rect x="485.0" y="60.3" width="64.0" height="77" fill="url(#rclip)"/>
<rect x="516.5" y="60.3" width="1" height="77" fill="#c83438" opacity="0.7"/>
<rect x="485.0" y="60.3" width="1" height="77" fill="#9a2a2e"/>
<text x="488.0" y="70.3" font-size="8.8" font-weight="bold" fill="#fbe6e6">SD_01</text>
<path d="M535.2 65.7 Q536.4 69.6 537.6 68.4 Q539.0 63.6 540.0 64 Q541.0 64 542.4 68.4 Q543.6 69.6 544.8 65.7" fill="none" stroke="#f8caca" stroke-width="1.1"/>
<path d="M486.0 97.0 L486.3 96.8 L486.6 97.0 L486.9 97.1 L487.2 96.9 L487.5 97.1 L487.8 96.8 L488.1 95.9 L488.4 94.7 L488.7 93.9 L489.0 93.4 L489.3 90.4 L489.6 93.3 L489.9 94.9 L490.2 95.3 L490.5 96.0 L490.8 96.6 L491.1 97.0 L491.4 96.8 L491.7 96.9 L492.0 97.1 L492.3 97.1 L492.6 96.9 L492.9 96.9 L493.2 96.8 L493.5 97.2 L493.8 96.8 L494.1 96.8 L494.4 97.2 L494.7 96.9 L495.0 97.2 L495.3 96.8 L495.6 97.1 L495.9 96.7 L496.2 95.7 L496.5 95.0 L496.8 94.4 L497.1 93.2 L497.4 92.0 L497.7 93.5 L498.0 93.7 L498.3 95.6 L498.6 96.3 L498.9 96.5 L499.2 97.2 L499.5 97.1 L499.8 96.9 L500.1 97.1 L500.4 97.2 L500.7 97.1 L501.0 97.1 L501.3 96.8 L501.6 97.0 L501.9 97.1 L502.2 96.8 L502.5 97.1 L502.8 96.9 L503.1 97.1 L503.4 96.8 L503.7 96.9 L504.0 96.7 L504.3 96.0 L504.6 95.2 L504.9 93.5 L505.2 92.8 L505.5 92.4 L505.8 93.1 L506.1 94.4 L506.4 95.1 L506.7 96.6 L507.0 96.8 L507.3 97.1 L507.6 97.0 L507.9 97.1 L508.2 96.8 L508.5 96.9 L508.8 97.1 L509.1 97.2 L509.4 96.9 L509.7 97.2 L510.0 97.0 L510.3 97.1 L510.6 97.2 L510.9 96.9 L511.2 96.9 L511.5 96.9 L511.8 96.9 L512.1 96.1 L512.4 95.7 L512.7 94.3 L513.0 93.2 L513.3 91.4 L513.6 92.7 L513.9 92.6 L514.2 94.4 L514.5 95.4 L514.8 96.4 L515.1 97.0 L515.4 97.2 L515.7 97.0 L516.0 96.9 L516.3 97.0 L516.6 97.1 L516.9 97.1 L517.2 97.1 L517.5 96.8 L517.8 97.0 L518.1 97.1 L518.4 97.1 L518.7 96.9 L519.0 96.8 L519.3 97.0 L519.6 97.1 L519.9 96.6 L520.2 96.1 L520.5 95.8 L520.8 94.6 L521.1 93.7 L521.4 91.0 L521.7 92.4 L522.0 92.9 L522.3 95.4 L522.6 95.5 L522.9 96.3 L523.2 97.0 L523.5 97.2 L523.8 97.0 L524.1 96.9 L524.4 97.1 L524.7 96.9 L525.0 96.9 L525.3 96.9 L525.6 96.9 L525.9 97.0 L526.2 97.2 L526.5 96.9 L526.8 97.1 L527.1 96.9 L527.4 97.0 L527.7 97.0 L528.0 96.4 L528.3 95.8 L528.6 95.8 L528.9 94.2 L529.2 93.2 L529.5 89.8 L529.8 91.3 L530.1 93.7 L530.4 94.8 L530.7 95.8 L531.0 96.7 L531.3 96.7 L531.6 97.0 L531.9 97.1 L532.2 96.9 L532.5 97.2 L532.8 97.0 L533.1 97.0 L533.4 96.9 L533.7 96.9 L534.0 97.1 L534.3 97.1 L534.6 97.0 L534.9 96.9 L535.2 96.8 L535.5 96.8 L535.8 97.1 L536.1 96.7 L536.4 95.9 L536.7 94.9 L537.0 94.4 L537.3 91.9 L537.6 91.4 L537.9 91.6 L538.2 94.0 L538.5 95.2 L538.8 95.9 L539.1 96.3 L539.4 97.0 L539.7 97.0 L540.0 96.9 L540.3 97.0 L540.6 96.8 L540.9 97.1 L541.2 97.1 L541.5 96.9 L541.8 97.0 L542.1 97.1 L542.4 96.8 L542.7 96.9 L543.0 97.1 L543.3 96.9 L543.6 97.1 L543.9 97.1 L544.2 96.7 L544.5 96.1 L544.8 95.0 L545.1 94.1 L545.4 92.3 L545.7 91.7 L546.0 92.6 L546.3 93.8 L546.6 95.0 L546.9 95.9 L547.2 96.4 L547.5 97.1 L547.8 97.1 L548.1 96.8 L548.4 97.1 L548.4 99.1 L548.1 98.9 L547.8 99.4 L547.5 99.9 L547.2 100.2 L546.9 101.6 L546.6 102.0 L546.3 104.6 L546.0 106.9 L545.7 110.9 L545.4 106.5 L545.1 104.8 L544.8 102.9 L544.5 101.2 L544.2 100.6 L543.9 100.0 L543.6 99.4 L543.3 98.9 L543.0 98.9 L542.7 98.8 L542.4 98.9 L542.1 99.0 L541.8 98.9 L541.5 99.2 L541.2 99.0 L540.9 99.0 L540.6 99.2 L540.3 99.0 L540.0 98.8 L539.7 99.3 L539.4 100.0 L539.1 100.5 L538.8 100.8 L538.5 102.8 L538.2 103.9 L537.9 107.4 L537.6 112.8 L537.3 108.8 L537.0 104.4 L536.7 102.9 L536.4 101.5 L536.1 100.7 L535.8 99.8 L535.5 99.1 L535.2 99.0 L534.9 99.1 L534.6 99.1 L534.3 98.9 L534.0 99.1 L533.7 98.9 L533.4 98.8 L533.1 98.8 L532.8 99.1 L532.5 99.0 L532.2 98.9 L531.9 99.2 L531.6 99.5 L531.3 100.2 L531.0 101.0 L530.7 101.9 L530.4 103.7 L530.1 104.2 L529.8 107.7 L529.5 111.8 L529.2 107.1 L528.9 105.3 L528.6 102.4 L528.3 101.5 L528.0 99.9 L527.7 99.9 L527.4 99.3 L527.1 99.0 L526.8 98.9 L526.5 98.9 L526.2 99.0 L525.9 98.9 L525.6 98.9 L525.3 99.2 L525.0 99.1 L524.7 99.0 L524.4 98.8 L524.1 98.9 L523.8 98.8 L523.5 99.2 L523.2 100.2 L522.9 100.8 L522.6 101.1 L522.3 102.3 L522.0 105.3 L521.7 109.8 L521.4 109.6 L521.1 106.0 L520.8 103.4 L520.5 101.7 L520.2 101.6 L519.9 100.5 L519.6 99.6 L519.3 99.0 L519.0 99.0 L518.7 99.2 L518.4 99.0 L518.1 99.1 L517.8 99.2 L517.5 99.1 L517.2 98.9 L516.9 99.1 L516.6 98.8 L516.3 99.2 L516.0 99.0 L515.7 99.0 L515.4 99.5 L515.1 100.3 L514.8 101.3 L514.5 102.2 L514.2 103.4 L513.9 107.1 L513.6 109.6 L513.3 109.5 L513.0 105.5 L512.7 103.8 L512.4 102.5 L512.1 101.3 L511.8 100.2 L511.5 99.7 L511.2 99.2 L510.9 99.2 L510.6 99.0 L510.3 99.2 L510.0 99.1 L509.7 99.1 L509.4 99.2 L509.1 99.2 L508.8 98.8 L508.5 99.0 L508.2 99.1 L507.9 99.2 L507.6 99.0 L507.3 99.5 L507.0 99.8 L506.7 100.8 L506.4 101.8 L506.1 103.4 L505.8 107.5 L505.5 108.4 L505.2 109.3 L504.9 104.8 L504.6 104.0 L504.3 102.1 L504.0 101.3 L503.7 99.7 L503.4 99.5 L503.1 99.2 L502.8 99.2 L502.5 98.9 L502.2 99.1 L501.9 98.9 L501.6 99.1 L501.3 99.0 L501.0 99.0 L500.7 99.0 L500.4 99.0 L500.1 98.8 L499.8 98.9 L499.5 99.1 L499.2 100.0 L498.9 100.5 L498.6 101.1 L498.3 103.2 L498.0 105.1 L497.7 106.0 L497.4 109.9 L497.1 108.4 L496.8 105.7 L496.5 102.9 L496.2 101.2 L495.9 100.1 L495.6 99.7 L495.3 99.5 L495.0 98.9 L494.7 98.9 L494.4 99.1 L494.1 99.0 L493.8 99.0 L493.5 98.9 L493.2 99.1 L492.9 99.0 L492.6 99.0 L492.3 98.8 L492.0 98.9 L491.7 99.1 L491.4 99.5 L491.1 99.6 L490.8 100.6 L490.5 101.6 L490.2 103.4 L489.9 104.6 L489.6 106.4 L489.3 108.7 L489.0 105.5 L488.7 105.0 L488.4 103.7 L488.1 100.8 L487.8 100.8 L487.5 99.6 L487.2 99.4 L486.9 99.0 L486.6 99.0 L486.3 99.0 L486.0 99.0Z" fill="#7a2024" stroke="#4a1214" stroke-width="0.8"/>
<rect x="486.0" y="97.2" width="62.5" height="1.6" fill="#4a1214"/>
<rect x="549.0" y="60.3" width="64.0" height="77" fill="url(#rclip)"/>
<rect x="580.5" y="60.3" width="1" height="77" fill="#c83438" opacity="0.7"/>
<rect x="549.0" y="60.3" width="1" height="77" fill="#9a2a2e"/>
<text x="552.0" y="70.3" font-size="8.8" font-weight="bold" fill="#fbe6e6">SD_01</text>
<path d="M599.2 65.7 Q600.4 69.6 601.6 68.4 Q603.0 63.6 604.0 64 Q605.0 64 606.4 68.4 Q607.6 69.6 608.8 65.7" fill="none" stroke="#f8caca" stroke-width="1.1"/>
<path d="M550.0 97.0 L550.3 96.9 L550.6 97.2 L550.9 97.1 L551.2 96.9 L551.5 97.0 L551.8 96.8 L552.1 96.3 L552.4 95.7 L552.7 94.8 L553.0 93.0 L553.3 89.5 L553.6 93.6 L553.9 94.1 L554.2 94.7 L554.5 96.3 L554.8 96.8 L555.1 96.9 L555.4 96.9 L555.7 97.1 L556.0 97.0 L556.3 97.0 L556.6 97.0 L556.9 96.9 L557.2 96.8 L557.5 97.1 L557.8 96.9 L558.1 97.2 L558.4 97.1 L558.7 96.9 L559.0 97.2 L559.3 97.0 L559.6 97.0 L559.9 96.6 L560.2 96.2 L560.5 95.5 L560.8 94.7 L561.1 92.7 L561.4 92.2 L561.7 93.5 L562.0 94.4 L562.3 95.4 L562.6 96.4 L562.9 96.7 L563.2 96.9 L563.5 97.2 L563.8 96.9 L564.1 97.1 L564.4 97.2 L564.7 96.8 L565.0 97.0 L565.3 97.1 L565.6 96.9 L565.9 97.1 L566.2 97.0 L566.5 97.1 L566.8 96.8 L567.1 97.1 L567.4 97.1 L567.7 96.9 L568.0 96.3 L568.3 96.0 L568.6 94.7 L568.9 94.3 L569.2 92.2 L569.5 91.5 L569.8 93.1 L570.1 94.0 L570.4 95.3 L570.7 96.2 L571.0 96.6 L571.3 97.1 L571.6 96.9 L571.9 97.2 L572.2 96.8 L572.5 96.8 L572.8 97.0 L573.1 97.0 L573.4 97.1 L573.7 96.8 L574.0 97.0 L574.3 97.2 L574.6 96.9 L574.9 97.1 L575.2 97.1 L575.5 97.1 L575.8 96.9 L576.1 96.2 L576.4 95.3 L576.7 95.4 L577.0 93.6 L577.3 91.2 L577.6 92.3 L577.9 92.6 L578.2 94.9 L578.5 95.9 L578.8 96.5 L579.1 96.8 L579.4 97.1 L579.7 97.0 L580.0 97.1 L580.3 96.9 L580.6 97.1 L580.9 96.9 L581.2 96.9 L581.5 96.8 L581.8 96.9 L582.1 96.9 L582.4 97.0 L582.7 97.1 L583.0 97.1 L583.3 97.1 L583.6 96.9 L583.9 96.5 L584.2 96.3 L584.5 95.1 L584.8 95.1 L585.1 92.5 L585.4 90.5 L585.7 91.7 L586.0 93.9 L586.3 95.1 L586.6 95.5 L586.9 96.6 L587.2 96.7 L587.5 97.2 L587.8 96.9 L588.1 97.1 L588.4 97.1 L588.7 96.9 L589.0 97.1 L589.3 97.2 L589.6 97.2 L589.9 97.1 L590.2 97.1 L590.5 97.1 L590.8 96.9 L591.1 97.2 L591.4 97.0 L591.7 97.0 L592.0 96.5 L592.3 96.0 L592.6 95.3 L592.9 94.5 L593.2 92.5 L593.5 89.7 L593.8 91.5 L594.1 93.2 L594.4 95.2 L594.7 95.8 L595.0 96.3 L595.3 97.1 L595.6 97.2 L595.9 97.2 L596.2 97.2 L596.5 97.0 L596.8 96.8 L597.1 96.8 L597.4 97.1 L597.7 97.0 L598.0 96.9 L598.3 97.0 L598.6 97.1 L598.9 97.0 L599.2 96.8 L599.5 96.8 L599.8 97.1 L600.1 96.5 L600.4 96.4 L600.7 95.3 L601.0 93.6 L601.3 93.0 L601.6 89.4 L601.9 92.7 L602.2 94.0 L602.5 95.4 L602.8 96.1 L603.1 96.8 L603.4 96.8 L603.7 97.1 L604.0 97.2 L604.3 96.9 L604.6 97.0 L604.9 97.0 L605.2 97.1 L605.5 96.8 L605.8 97.0 L606.1 97.1 L606.4 97.1 L606.7 97.1 L607.0 96.8 L607.3 97.1 L607.6 97.0 L607.9 96.9 L608.2 96.4 L608.5 96.1 L608.8 94.5 L609.1 94.5 L609.4 92.8 L609.7 91.7 L610.0 92.6 L610.3 94.2 L610.6 94.9 L610.9 95.8 L611.2 96.7 L611.5 96.9 L611.8 97.1 L612.1 96.9 L612.4 96.9 L612.4 99.0 L612.1 99.0 L611.8 99.2 L611.5 99.8 L611.2 100.2 L610.9 101.1 L610.6 102.4 L610.3 104.3 L610.0 107.3 L609.7 108.8 L609.4 109.2 L609.1 104.9 L608.8 103.4 L608.5 102.1 L608.2 100.2 L607.9 99.5 L607.6 99.3 L607.3 99.1 L607.0 98.9 L606.7 98.9 L606.4 98.9 L606.1 99.0 L605.8 99.0 L605.5 98.9 L605.2 98.9 L604.9 99.0 L604.6 99.0 L604.3 98.9 L604.0 99.1 L603.7 99.2 L603.4 99.9 L603.1 100.5 L602.8 101.6 L602.5 102.3 L602.2 104.8 L601.9 106.2 L601.6 113.5 L601.3 106.9 L601.0 105.4 L600.7 103.2 L600.4 101.1 L600.1 100.6 L599.8 100.1 L599.5 99.2 L599.2 99.1 L598.9 99.2 L598.6 98.8 L598.3 98.9 L598.0 99.0 L597.7 98.9 L597.4 99.2 L597.1 98.8 L596.8 99.1 L596.5 99.2 L596.2 99.1 L595.9 98.9 L595.6 99.1 L595.3 99.6 L595.0 100.2 L594.7 102.0 L594.4 102.9 L594.1 105.6 L593.8 108.6 L593.5 110.3 L593.2 106.0 L592.9 104.4 L592.6 102.3 L592.3 101.2 L592.0 100.3 L591.7 99.8 L591.4 99.2 L591.1 99.1 L590.8 99.0 L590.5 98.9 L590.2 98.9 L589.9 99.1 L589.6 98.9 L589.3 98.9 L589.0 99.2 L588.7 99.1 L588.4 98.9 L588.1 99.1 L587.8 99.1 L587.5 99.6 L587.2 100.0 L586.9 100.5 L586.6 101.3 L586.3 103.1 L586.0 105.1 L585.7 107.4 L585.4 109.2 L585.1 106.7 L584.8 104.3 L584.5 102.0 L584.2 101.5 L583.9 100.3 L583.6 99.4 L583.3 98.9 L583.0 99.0 L582.7 98.9 L582.4 98.9 L582.1 98.9 L581.8 98.9 L581.5 99.0 L581.2 99.1 L580.9 99.0 L580.6 99.0 L580.3 99.1 L580.0 99.0 L579.7 99.2 L579.4 99.5 L579.1 100.2 L578.8 101.4 L578.5 101.9 L578.2 103.2 L577.9 104.3 L577.6 108.2 L577.3 108.3 L577.0 104.9 L576.7 103.6 L576.4 101.8 L576.1 101.1 L575.8 100.2 L575.5 99.2 L575.2 99.1 L574.9 99.0 L574.6 99.0 L574.3 99.0 L574.0 99.0 L573.7 99.1 L573.4 98.9 L573.1 98.8 L572.8 99.1 L572.5 99.2 L572.2 99.1 L571.9 99.1 L571.6 99.2 L571.3 99.5 L571.0 100.3 L570.7 101.6 L570.4 102.1 L570.1 105.1 L569.8 106.8 L569.5 111.9 L569.2 107.3 L568.9 106.6 L568.6 103.8 L568.3 101.5 L568.0 100.4 L567.7 100.1 L567.4 99.7 L567.1 99.2 L566.8 98.9 L566.5 99.2 L566.2 99.1 L565.9 99.0 L565.6 99.1 L565.3 99.1 L565.0 98.8 L564.7 99.2 L564.4 99.0 L564.1 98.8 L563.8 98.9 L563.5 99.1 L563.2 99.9 L562.9 100.0 L562.6 101.8 L562.3 103.3 L562.0 105.5 L561.7 106.0 L561.4 110.1 L561.1 108.4 L560.8 104.4 L560.5 103.5 L560.2 101.7 L559.9 100.9 L559.6 99.8 L559.3 99.3 L559.0 99.1 L558.7 99.0 L558.4 99.0 L558.1 98.9 L557.8 99.1 L557.5 98.9 L557.2 99.1 L556.9 99.2 L556.6 98.8 L556.3 99.0 L556.0 99.0 L555.7 99.1 L555.4 99.0 L555.1 99.5 L554.8 100.3 L554.5 101.3 L554.2 103.6 L553.9 103.6 L553.6 108.9 L553.3 108.5 L553.0 107.0 L552.7 105.2 L552.4 103.4 L552.1 102.0 L551.8 100.4 L551.5 99.9 L551.2 99.3 L550.9 99.1 L550.6 98.9 L550.3 98.9 L550.0 99.1Z" fill="#7a2024" stroke="#4a1214" stroke-width="0.8"/>
<rect x="550.0" y="97.2" width="62.5" height="1.6" fill="#4a1214"/>
<rect x="613.1" y="60.3" width="64.0" height="77" fill="url(#rclip)"/>
<rect x="644.6" y="60.3" width="1" height="77" fill="#c83438" opacity="0.7"/>
<rect x="613.1" y="60.3" width="1" height="77" fill="#9a2a2e"/>
<text x="616.1" y="70.3" font-size="8.8" font-weight="bold" fill="#fbe6e6">SD_01</text>
<path d="M663.3 65.7 Q664.5 69.6 665.7 68.4 Q667.1 63.6 668.1 64 Q669.1 64 670.5 68.4 Q671.7 69.6 672.9 65.7" fill="none" stroke="#f8caca" stroke-width="1.1"/>
<path d="M614.1 97.1 L614.4 96.9 L614.7 97.1 L615.0 97.1 L615.3 96.9 L615.6 97.0 L615.9 96.7 L616.2 95.8 L616.5 95.8 L616.8 94.7 L617.1 92.0 L617.4 89.5 L617.7 91.7 L618.0 94.5 L618.3 95.3 L618.6 96.0 L618.9 96.7 L619.2 97.1 L619.5 96.9 L619.8 96.8 L620.1 97.0 L620.4 97.1 L620.7 97.0 L621.0 97.1 L621.3 97.1 L621.6 97.0 L621.9 97.1 L622.2 97.1 L622.5 97.1 L622.8 97.2 L623.1 96.8 L623.4 96.9 L623.7 97.1 L624.0 96.3 L624.3 95.8 L624.6 95.2 L624.9 93.3 L625.2 93.0 L625.5 91.3 L625.8 93.7 L626.1 94.2 L626.4 95.7 L626.7 96.1 L627.0 96.7 L627.3 97.1 L627.6 97.1 L627.9 97.2 L628.2 97.2 L628.5 97.0 L628.8 97.2 L629.1 97.1 L629.4 97.2 L629.7 97.2 L630.0 97.1 L630.3 97.2 L630.6 97.1 L630.9 97.2 L631.2 97.0 L631.5 97.0 L631.8 96.8 L632.1 96.7 L632.4 95.4 L632.7 95.2 L633.0 93.1 L633.3 91.8 L633.6 92.0 L633.9 93.8 L634.2 95.2 L634.5 95.9 L634.8 96.2 L635.1 96.6 L635.4 97.0 L635.7 97.1 L636.0 97.0 L636.3 96.9 L636.6 96.9 L636.9 97.1 L637.2 97.2 L637.5 97.1 L637.8 96.8 L638.1 97.2 L638.4 97.1 L638.7 97.1 L639.0 97.0 L639.3 97.2 L639.6 96.9 L639.9 96.8 L640.2 96.4 L640.5 95.9 L640.8 94.5 L641.1 93.4 L641.4 91.8 L641.7 91.3 L642.0 92.7 L642.3 95.2 L642.6 95.4 L642.9 96.5 L643.2 96.9 L643.5 97.2 L643.8 96.9 L644.1 96.9 L644.4 96.8 L644.7 97.0 L645.0 96.9 L645.3 97.1 L645.6 97.2 L645.9 96.8 L646.2 97.1 L646.5 97.0 L646.8 97.2 L647.1 97.1 L647.4 97.1 L647.7 96.9 L648.0 96.5 L648.3 96.2 L648.6 95.6 L648.9 94.5 L649.2 93.4 L649.5 92.1 L649.8 93.1 L650.1 94.2 L650.4 94.8 L650.7 95.5 L651.0 96.4 L651.3 97.0 L651.6 96.9 L651.9 96.8 L652.2 96.9 L652.5 96.9 L652.8 97.2 L653.1 96.8 L653.4 97.0 L653.7 97.1 L654.0 97.2 L654.3 96.9 L654.6 97.1 L654.9 96.9 L655.2 96.8 L655.5 97.2 L655.8 96.8 L656.1 96.5 L656.4 96.0 L656.7 95.3 L657.0 94.9 L657.3 92.7 L657.6 90.5 L657.9 92.3 L658.2 93.3 L658.5 94.7 L658.8 95.8 L659.1 96.2 L659.4 96.7 L659.7 96.9 L660.0 96.9 L660.3 97.2 L660.6 97.0 L660.9 96.9 L661.2 97.0 L661.5 97.0 L661.8 97.2 L662.1 97.1 L662.4 97.1 L662.7 97.1 L663.0 97.1 L663.3 96.8 L663.6 97.2 L663.9 97.2 L664.2 96.7 L664.5 96.4 L664.8 95.7 L665.1 94.0 L665.4 92.3 L665.7 89.9 L666.0 91.9 L666.3 94.8 L666.6 95.2 L666.9 95.8 L667.2 96.5 L667.5 97.0 L667.8 97.1 L668.1 97.0 L668.4 97.1 L668.7 97.2 L669.0 97.1 L669.3 96.8 L669.6 96.9 L669.9 97.1 L670.2 97.0 L670.5 96.9 L670.8 97.0 L671.1 97.1 L671.4 97.1 L671.7 96.8 L672.0 97.1 L672.3 96.3 L672.6 96.0 L672.9 95.7 L673.2 94.3 L673.5 91.4 L673.8 91.3 L674.1 92.4 L674.4 94.0 L674.7 95.3 L675.0 95.9 L675.3 96.5 L675.6 97.0 L675.9 97.0 L676.2 97.2 L676.5 97.1 L676.5 99.0 L676.2 99.1 L675.9 99.1 L675.6 99.9 L675.3 100.3 L675.0 101.4 L674.7 103.3 L674.4 104.5 L674.1 105.4 L673.8 111.5 L673.5 106.0 L673.2 104.1 L672.9 103.1 L672.6 101.1 L672.3 100.5 L672.0 100.1 L671.7 99.1 L671.4 98.8 L671.1 98.9 L670.8 99.1 L670.5 99.0 L670.2 98.8 L669.9 98.8 L669.6 98.9 L669.3 98.9 L669.0 99.1 L668.7 99.1 L668.4 99.1 L668.1 99.2 L667.8 99.3 L667.5 99.6 L667.2 100.4 L666.9 101.0 L666.6 102.8 L666.3 105.0 L666.0 106.0 L665.7 112.5 L665.4 108.1 L665.1 105.7 L664.8 102.3 L664.5 101.7 L664.2 100.1 L663.9 99.7 L663.6 99.1 L663.3 98.8 L663.0 98.9 L662.7 99.2 L662.4 99.2 L662.1 98.9 L661.8 98.9 L661.5 99.1 L661.2 99.0 L660.9 99.2 L660.6 99.1 L660.3 99.0 L660.0 99.0 L659.7 99.6 L659.4 99.7 L659.1 100.5 L658.8 101.5 L658.5 103.1 L658.2 104.7 L657.9 108.9 L657.6 110.8 L657.3 105.2 L657.0 104.9 L656.7 102.1 L656.4 101.5 L656.1 100.5 L655.8 99.9 L655.5 99.4 L655.2 99.1 L654.9 99.0 L654.6 98.8 L654.3 98.9 L654.0 99.0 L653.7 99.0 L653.4 99.0 L653.1 98.9 L652.8 99.0 L652.5 98.9 L652.2 98.9 L651.9 98.8 L651.6 99.4 L651.3 100.2 L651.0 101.1 L650.7 101.8 L650.4 102.9 L650.1 104.3 L649.8 109.7 L649.5 110.0 L649.2 106.3 L648.9 103.2 L648.6 103.0 L648.3 100.8 L648.0 100.4 L647.7 99.5 L647.4 99.3 L647.1 99.2 L646.8 98.9 L646.5 98.8 L646.2 99.1 L645.9 99.0 L645.6 98.9 L645.3 99.1 L645.0 99.1 L644.7 99.0 L644.4 99.1 L644.1 99.1 L643.8 98.9 L643.5 99.2 L643.2 99.7 L642.9 101.4 L642.6 102.1 L642.3 103.7 L642.0 104.7 L641.7 110.5 L641.4 109.3 L641.1 107.2 L640.8 104.6 L640.5 102.4 L640.2 101.3 L639.9 100.0 L639.6 99.3 L639.3 99.0 L639.0 98.9 L638.7 99.2 L638.4 99.1 L638.1 99.0 L637.8 99.2 L637.5 99.0 L637.2 98.9 L636.9 99.0 L636.6 98.9 L636.3 98.8 L636.0 98.9 L635.7 99.0 L635.4 99.6 L635.1 99.9 L634.8 100.5 L634.5 102.7 L634.2 103.7 L633.9 105.8 L633.6 108.6 L633.3 107.8 L633.0 104.7 L632.7 103.7 L632.4 102.2 L632.1 100.7 L631.8 99.8 L631.5 99.4 L631.2 99.2 L630.9 98.9 L630.6 99.1 L630.3 99.0 L630.0 99.0 L629.7 98.9 L629.4 99.2 L629.1 98.8 L628.8 99.0 L628.5 99.0 L628.2 99.1 L627.9 98.9 L627.6 99.3 L627.3 99.5 L627.0 100.5 L626.7 101.4 L626.4 102.7 L626.1 104.9 L625.8 108.5 L625.5 111.4 L625.2 109.2 L624.9 105.9 L624.6 103.8 L624.3 101.1 L624.0 100.9 L623.7 99.6 L623.4 99.6 L623.1 99.0 L622.8 99.1 L622.5 98.9 L622.2 98.9 L621.9 99.0 L621.6 99.0 L621.3 99.0 L621.0 99.0 L620.7 98.9 L620.4 99.1 L620.1 99.1 L619.8 99.1 L619.5 99.4 L619.2 99.5 L618.9 100.4 L618.6 101.3 L618.3 103.3 L618.0 105.6 L617.7 108.4 L617.4 112.3 L617.1 108.5 L616.8 105.7 L616.5 102.4 L616.2 101.6 L615.9 100.4 L615.6 99.6 L615.3 99.1 L615.0 98.9 L614.7 98.9 L614.4 99.1 L614.1 99.1Z" fill="#7a2024" stroke="#4a1214" stroke-width="0.8"/>
<rect x="614.1" y="97.2" width="62.5" height="1.6" fill="#4a1214"/>
<rect x="677.1" y="60.3" width="64.0" height="77" fill="url(#rclip)"/>
<rect x="708.6" y="60.3" width="1" height="77" fill="#c83438" opacity="0.7"/>
<rect x="677.1" y="60.3" width="1" height="77" fill="#9a2a2e"/>
<text x="680.1" y="70.3" font-size="8.8" font-weight="bold" fill="#fbe6e6">SD_01</text>
<path d="M727.4 65.7 Q728.5 69.6 729.8 68.4 Q731.1 63.6 732.1 64 Q733.1 64 734.5 68.4 Q735.8 69.6 736.9 65.7" fill="none" stroke="#f8caca" stroke-width="1.1"/>
<path d="M678.1 97.2 L678.4 96.9 L678.7 97.1 L679.0 96.9 L679.3 97.1 L679.6 97.0 L679.9 96.8 L680.2 95.7 L680.5 95.5 L680.8 93.9 L681.1 92.5 L681.4 91.5 L681.7 93.4 L682.0 94.8 L682.3 94.7 L682.6 95.6 L682.9 96.5 L683.2 96.9 L683.5 97.0 L683.8 97.1 L684.1 96.9 L684.4 97.1 L684.7 97.1 L685.0 97.0 L685.3 96.9 L685.6 97.1 L685.9 96.9 L686.2 97.0 L686.5 97.0 L686.8 97.0 L687.1 97.0 L687.4 97.0 L687.7 96.9 L688.0 96.3 L688.3 96.3 L688.6 94.8 L688.9 94.7 L689.2 91.3 L689.5 91.3 L689.8 92.0 L690.1 94.6 L690.4 95.3 L690.7 96.3 L691.0 96.9 L691.3 96.8 L691.6 97.1 L691.9 97.1 L692.2 97.2 L692.5 97.1 L692.8 96.9 L693.1 97.1 L693.4 96.8 L693.7 96.9 L694.0 97.0 L694.3 96.8 L694.6 97.0 L694.9 97.1 L695.2 96.8 L695.5 96.9 L695.8 96.7 L696.1 96.6 L696.4 95.8 L696.7 95.2 L697.0 94.2 L697.3 92.9 L697.6 91.4 L697.9 93.4 L698.2 94.9 L698.5 95.6 L698.8 96.4 L699.1 96.6 L699.4 96.9 L699.7 96.9 L700.0 97.1 L700.3 96.9 L700.6 97.2 L700.9 97.1 L701.2 96.8 L701.5 97.2 L701.8 96.8 L702.1 97.2 L702.4 97.0 L702.7 96.9 L703.0 96.8 L703.3 96.9 L703.6 97.1 L703.9 96.8 L704.2 96.4 L704.5 95.7 L704.8 95.0 L705.1 93.9 L705.4 91.3 L705.7 90.4 L706.0 92.6 L706.3 94.2 L706.6 95.8 L706.9 96.4 L707.2 97.0 L707.5 96.8 L707.8 96.9 L708.1 97.0 L708.4 97.0 L708.7 97.2 L709.0 97.0 L709.3 97.0 L709.6 96.8 L709.9 97.1 L710.2 96.9 L710.5 97.0 L710.8 97.2 L711.1 97.1 L711.4 96.9 L711.7 97.2 L712.0 96.7 L712.3 96.1 L712.6 95.4 L712.9 94.7 L713.2 92.7 L713.5 90.7 L713.8 92.3 L714.1 93.9 L714.4 94.9 L714.7 95.9 L715.0 96.2 L715.3 97.0 L715.6 97.1 L715.9 97.1 L716.2 97.0 L716.5 97.0 L716.8 97.0 L717.1 97.1 L717.4 97.1 L717.7 97.2 L718.0 97.2 L718.3 97.0 L718.6 97.1 L718.9 97.0 L719.2 97.1 L719.5 96.9 L719.8 97.1 L720.1 96.4 L720.4 96.5 L720.7 95.0 L721.0 94.8 L721.3 93.7 L721.6 91.7 L721.9 92.1 L722.2 93.5 L722.5 94.8 L722.8 96.3 L723.1 96.3 L723.4 96.9 L723.7 97.0 L724.0 97.0 L724.3 97.1 L724.6 96.9 L724.9 97.2 L725.2 97.2 L725.5 97.1 L725.8 97.2 L726.1 97.0 L726.4 97.2 L726.7 96.8 L727.0 96.8 L727.3 97.1 L727.6 96.8 L727.9 96.9 L728.2 96.6 L728.5 96.4 L728.8 95.5 L729.1 94.1 L729.4 91.7 L729.7 90.7 L730.0 91.6 L730.3 94.4 L730.6 95.2 L730.9 95.9 L731.2 96.8 L731.5 97.0 L731.8 97.1 L732.1 97.1 L732.4 96.8 L732.7 97.1 L733.0 97.1 L733.3 97.1 L733.6 97.2 L733.9 96.9 L734.2 96.8 L734.5 97.1 L734.8 97.1 L735.1 96.9 L735.4 96.9 L735.7 97.0 L736.0 96.9 L736.3 96.8 L736.6 95.9 L736.9 94.9 L737.2 93.2 L737.5 92.3 L737.8 91.5 L738.1 92.6 L738.4 93.7 L738.7 95.5 L739.0 96.3 L739.3 96.5 L739.6 97.1 L739.9 96.8 L740.2 97.0 L740.5 97.0 L740.5 99.0 L740.2 99.2 L739.9 99.2 L739.6 99.5 L739.3 99.9 L739.0 101.3 L738.7 102.1 L738.4 103.9 L738.1 105.1 L737.8 108.4 L737.5 109.5 L737.2 106.3 L736.9 104.0 L736.6 101.9 L736.3 101.0 L736.0 99.7 L735.7 99.6 L735.4 99.0 L735.1 98.8 L734.8 99.1 L734.5 99.2 L734.2 99.0 L733.9 98.9 L733.6 99.1 L733.3 98.9 L733.0 98.9 L732.7 99.1 L732.4 98.8 L732.1 98.9 L731.8 99.1 L731.5 99.9 L731.2 100.9 L730.9 102.0 L730.6 103.6 L730.3 105.5 L730.0 107.0 L729.7 109.3 L729.4 108.9 L729.1 105.4 L728.8 102.0 L728.5 101.3 L728.2 100.0 L727.9 99.4 L727.6 99.4 L727.3 99.0 L727.0 98.9 L726.7 98.9 L726.4 99.1 L726.1 99.0 L725.8 99.0 L725.5 99.2 L725.2 99.0 L724.9 99.1 L724.6 99.1 L724.3 99.1 L724.0 99.0 L723.7 99.5 L723.4 99.6 L723.1 100.3 L722.8 102.1 L722.5 103.6 L722.2 104.9 L721.9 106.3 L721.6 109.7 L721.3 108.0 L721.0 105.1 L720.7 101.9 L720.4 101.0 L720.1 100.3 L719.8 99.9 L719.5 99.2 L719.2 98.9 L718.9 99.0 L718.6 99.0 L718.3 99.2 L718.0 98.9 L717.7 99.0 L717.4 99.1 L717.1 99.2 L716.8 99.1 L716.5 99.1 L716.2 98.9 L715.9 99.2 L715.6 99.6 L715.3 100.1 L715.0 100.5 L714.7 101.8 L714.4 103.9 L714.1 105.8 L713.8 109.2 L713.5 108.2 L713.2 106.8 L712.9 103.3 L712.6 102.7 L712.3 101.3 L712.0 99.8 L711.7 99.8 L711.4 99.0 L711.1 98.9 L710.8 98.9 L710.5 99.0 L710.2 99.0 L709.9 98.8 L709.6 99.0 L709.3 99.1 L709.0 99.1 L708.7 99.0 L708.4 99.2 L708.1 99.1 L707.8 99.3 L707.5 99.7 L707.2 99.8 L706.9 101.4 L706.6 102.0 L706.3 104.5 L706.0 107.2 L705.7 107.8 L705.4 106.8 L705.1 106.5 L704.8 104.7 L704.5 102.1 L704.2 101.2 L703.9 99.7 L703.6 99.4 L703.3 99.0 L703.0 98.8 L702.7 99.1 L702.4 99.2 L702.1 99.1 L701.8 99.0 L701.5 99.1 L701.2 99.1 L700.9 99.0 L700.6 99.0 L700.3 99.0 L700.0 99.2 L699.7 99.2 L699.4 99.4 L699.1 99.9 L698.8 100.6 L698.5 101.6 L698.2 103.7 L697.9 107.3 L697.6 109.8 L697.3 107.4 L697.0 106.0 L696.7 102.5 L696.4 101.6 L696.1 101.2 L695.8 100.1 L695.5 99.3 L695.2 99.0 L694.9 99.0 L694.6 99.1 L694.3 99.1 L694.0 99.0 L693.7 98.9 L693.4 98.9 L693.1 99.0 L692.8 98.9 L692.5 98.9 L692.2 98.9 L691.9 98.9 L691.6 99.4 L691.3 99.7 L691.0 100.1 L690.7 101.1 L690.4 102.5 L690.1 103.5 L689.8 106.0 L689.5 110.6 L689.2 107.5 L688.9 105.6 L688.6 103.2 L688.3 101.1 L688.0 101.1 L687.7 99.7 L687.4 99.1 L687.1 99.0 L686.8 99.0 L686.5 99.1 L686.2 98.8 L685.9 98.8 L685.6 98.8 L685.3 98.8 L685.0 98.8 L684.7 99.1 L684.4 99.0 L684.1 99.0 L683.8 98.8 L683.5 99.3 L683.2 99.5 L682.9 100.8 L682.6 101.3 L682.3 102.6 L682.0 103.9 L681.7 106.7 L681.4 111.8 L681.1 107.9 L680.8 103.7 L680.5 103.4 L680.2 101.2 L679.9 100.2 L679.6 100.0 L679.3 99.4 L679.0 99.1 L678.7 98.9 L678.4 99.2 L678.1 99.1Z" fill="#7a2024" stroke="#4a1214" stroke-width="0.8"/>
<rect x="678.1" y="97.2" width="62.5" height="1.6" fill="#4a1214"/>
<rect x="741.2" y="60.3" width="26.8" height="77" fill="url(#rclip)"/>
<rect x="772.7" y="60.3" width="1" height="77" fill="#c83438" opacity="0.7"/>
<rect x="741.2" y="60.3" width="1" height="77" fill="#9a2a2e"/>
<text x="744.2" y="70.3" font-size="8.8" font-weight="bold" fill="#fbe6e6">SD_01</text>
<path d="M791.4 65.7 Q792.6 69.6 793.8 68.4 Q795.2 63.6 796.2 64 Q797.2 64 798.6 68.4 Q799.8 69.6 801.0 65.7" fill="none" stroke="#f8caca" stroke-width="1.1"/>
<path d="M742.2 96.8 L742.5 96.9 L742.8 96.8 L743.1 96.8 L743.4 96.9 L743.7 97.1 L744.0 96.5 L744.3 96.2 L744.6 94.8 L744.9 93.7 L745.2 91.7 L745.5 91.3 L745.8 92.8 L746.1 94.0 L746.4 95.2 L746.7 95.9 L747.0 96.4 L747.3 97.0 L747.6 97.2 L747.9 97.1 L748.2 96.9 L748.5 97.1 L748.8 96.8 L749.1 97.2 L749.4 97.0 L749.7 97.0 L750.0 97.0 L750.3 96.8 L750.6 97.1 L750.9 96.9 L751.2 96.8 L751.5 97.0 L751.8 96.8 L752.1 96.5 L752.4 95.9 L752.7 94.7 L753.0 93.5 L753.3 93.4 L753.6 89.6 L753.9 92.9 L754.2 93.7 L754.5 95.8 L754.8 96.1 L755.1 96.5 L755.4 96.9 L755.7 97.2 L756.0 97.1 L756.3 97.0 L756.6 97.0 L756.9 97.0 L757.2 96.9 L757.5 96.8 L757.8 97.2 L758.1 97.1 L758.4 97.0 L758.7 97.1 L759.0 97.1 L759.3 96.9 L759.6 97.1 L759.9 96.8 L760.2 96.7 L760.5 95.5 L760.8 95.4 L761.1 93.6 L761.4 91.0 L761.7 92.4 L762.0 92.7 L762.3 94.6 L762.6 95.6 L762.9 96.6 L763.2 96.9 L763.5 96.9 L763.8 97.0 L764.1 96.9 L764.4 97.1 L764.7 97.0 L765.0 97.0 L765.3 97.1 L765.6 96.9 L765.9 96.9 L766.2 96.9 L766.5 97.1 L766.8 97.1 L767.1 97.2 L767.4 96.9 L767.4 99.2 L767.1 99.2 L766.8 99.2 L766.5 98.9 L766.2 99.0 L765.9 99.2 L765.6 98.9 L765.3 99.1 L765.0 99.0 L764.7 98.8 L764.4 99.0 L764.1 98.9 L763.8 99.2 L763.5 99.7 L763.2 100.3 L762.9 101.4 L762.6 102.8 L762.3 104.9 L762.0 106.5 L761.7 108.9 L761.4 106.9 L761.1 105.0 L760.8 104.1 L760.5 102.2 L760.2 100.4 L759.9 99.8 L759.6 99.5 L759.3 98.9 L759.0 99.2 L758.7 99.2 L758.4 98.9 L758.1 99.0 L757.8 99.1 L757.5 99.2 L757.2 99.1 L756.9 98.9 L756.6 99.1 L756.3 98.9 L756.0 99.1 L755.7 99.0 L755.4 99.5 L755.1 100.4 L754.8 101.2 L754.5 103.1 L754.2 103.2 L753.9 106.7 L753.6 108.6 L753.3 109.4 L753.0 104.5 L752.7 103.9 L752.4 101.4 L752.1 100.2 L751.8 100.1 L751.5 99.1 L751.2 98.9 L750.9 98.9 L750.6 98.9 L750.3 98.9 L750.0 98.9 L749.7 99.0 L749.4 99.1 L749.1 98.8 L748.8 98.8 L748.5 99.0 L748.2 99.1 L747.9 99.2 L747.6 99.1 L747.3 100.1 L747.0 100.9 L746.7 101.3 L746.4 103.6 L746.1 104.3 L745.8 105.7 L745.5 110.8 L745.2 107.4 L744.9 103.9 L744.6 103.5 L744.3 101.1 L744.0 100.2 L743.7 99.6 L743.4 99.5 L743.1 99.1 L742.8 98.8 L742.5 98.9 L742.2 98.8Z" fill="#7a2024" stroke="#4a1214" stroke-width="0.8"/>
<rect x="742.2" y="97.2" width="25.3" height="1.6" fill="#4a1214"/>
<rect x="485" y="136.5" width="283" height="1" fill="#a02a2e"/>
<rect x="324.6" y="140.0" width="109.9" height="77.7" fill="url(#gclip)"/>
<rect x="356.08" y="140.0" width="1" height="77.7" fill="#6cb838" opacity="0.7"/>
<rect x="388.10" y="140.0" width="1" height="77.7" fill="#6cb838" opacity="0.7"/>
<rect x="420.13" y="140.0" width="1" height="77.7" fill="#6cb838" opacity="0.7"/>
<rect x="324.6" y="215.4" width="108.6" height="1" fill="#a6e264" opacity="0.9"/>
<rect x="432.2" y="140.0" width="1" height="76.4" fill="#a6e264" opacity="0.9"/>
<rect x="324.6" y="216.3" width="109.9" height="1.4" fill="#2a4418"/>
<rect x="433.2" y="140.0" width="1.3" height="77.7" fill="#2a4418"/>
<rect x="324.6" y="140.0" width="109.9" height="1" fill="#b6f07e" opacity="0.8"/>
<rect x="324.6" y="140.0" width="1" height="77.7" fill="#b0ec78" opacity="0.8"/>
<text x="328.6" y="151.0" font-size="8.5" font-weight="bold" fill="#26481a" stroke="#26481a" stroke-width="0.15">HORNS_04</text>
<rect x="326.0" y="178.2" width="106.5" height="1.6" fill="#22381a"/>
<path d="M351.0 179.0 L351.6 167.8 L352.2 162.9 L352.8 161.9 L353.4 162.7 L354.0 162.5 L354.6 165.4 L355.2 168.6 L355.8 171.0 L356.4 173.6 L357.0 174.1 L357.6 174.3 L358.2 175.2 L358.8 174.1 L359.4 174.3 L360.0 174.1 L360.6 174.6 L361.2 174.4 L361.8 173.0 L362.4 174.4 L363.0 172.4 L363.6 173.7 L364.2 173.9 L364.8 174.2 L365.4 173.7 L366.0 173.3 L366.6 172.5 L367.2 173.3 L367.8 172.3 L368.4 172.0 L369.0 172.9 L369.6 172.3 L370.2 174.0 L370.8 171.7 L371.4 173.9 L372.0 173.3 L372.6 173.4 L373.2 170.3 L373.8 172.0 L374.4 171.1 L375.0 169.3 L375.6 171.9 L376.2 172.3 L376.8 170.5 L377.4 172.0 L378.0 169.6 L378.6 171.6 L379.2 170.9 L379.8 164.0 L380.4 169.6 L381.0 167.5 L381.6 168.2 L382.2 161.5 L382.8 168.9 L383.4 169.7 L384.0 159.5 L384.6 167.1 L385.2 168.3 L385.8 169.7 L386.4 166.5 L387.0 166.8 L387.6 166.4 L388.2 166.3 L388.8 170.6 L389.4 167.3 L390.0 170.7 L390.6 168.8 L391.2 170.7 L391.8 170.9 L392.4 171.3 L393.0 167.8 L393.6 170.2 L394.2 171.9 L394.8 168.3 L395.4 172.7 L396.0 170.5 L396.6 173.2 L397.2 170.3 L397.8 170.7 L398.4 174.2 L399.0 172.2 L399.6 174.9 L400.2 174.6 L400.8 174.3 L401.4 174.9 L402.0 173.6 L402.6 173.0 L403.2 173.0 L403.8 171.8 L404.4 172.0 L405.0 171.7 L405.6 170.5 L406.2 171.4 L406.8 170.1 L407.4 170.7 L408.0 169.5 L408.6 169.7 L409.2 169.6 L409.8 169.8 L410.4 169.7 L411.0 169.3 L411.6 168.8 L412.2 168.5 L412.8 168.4 L413.4 168.5 L414.0 169.5 L414.6 169.4 L415.2 168.9 L415.8 169.2 L416.4 169.0 L417.0 169.3 L417.6 169.3 L418.2 169.4 L418.8 169.4 L419.4 169.6 L420.0 168.9 L420.6 170.6 L421.2 172.2 L421.8 176.7 L421.8 181.4 L421.2 186.0 L420.6 186.9 L420.0 188.9 L419.4 188.9 L418.8 189.1 L418.2 188.5 L417.6 189.2 L417.0 189.4 L416.4 188.8 L415.8 189.8 L415.2 188.9 L414.6 188.7 L414.0 189.2 L413.4 188.8 L412.8 189.5 L412.2 188.9 L411.6 188.3 L411.0 188.3 L410.4 188.2 L409.8 188.2 L409.2 188.3 L408.6 188.8 L408.0 187.7 L407.4 188.8 L406.8 188.8 L406.2 188.5 L405.6 187.1 L405.0 187.1 L404.4 186.9 L403.8 186.5 L403.2 186.0 L402.6 185.4 L402.0 185.1 L401.4 184.1 L400.8 185.0 L400.2 183.9 L399.6 184.0 L399.0 184.7 L398.4 186.1 L397.8 184.6 L397.2 185.8 L396.6 185.7 L396.0 185.7 L395.4 187.0 L394.8 186.5 L394.2 186.6 L393.6 190.3 L393.0 186.5 L392.4 187.4 L391.8 189.1 L391.2 187.3 L390.6 187.4 L390.0 188.3 L389.4 195.7 L388.8 187.4 L388.2 192.2 L387.6 188.5 L387.0 189.5 L386.4 188.1 L385.8 191.5 L385.2 191.3 L384.6 188.4 L384.0 190.2 L383.4 188.3 L382.8 192.0 L382.2 189.0 L381.6 189.9 L381.0 189.2 L380.4 188.2 L379.8 186.9 L379.2 193.2 L378.6 191.0 L378.0 185.5 L377.4 186.1 L376.8 185.3 L376.2 185.2 L375.6 190.9 L375.0 190.3 L374.4 185.3 L373.8 184.9 L373.2 184.8 L372.6 187.0 L372.0 184.6 L371.4 186.7 L370.8 188.0 L370.2 184.3 L369.6 185.1 L369.0 184.4 L368.4 185.1 L367.8 187.2 L367.2 184.4 L366.6 187.3 L366.0 186.8 L365.4 186.6 L364.8 185.1 L364.2 184.7 L363.6 184.6 L363.0 184.8 L362.4 184.5 L361.8 184.4 L361.2 186.2 L360.6 185.4 L360.0 185.7 L359.4 185.3 L358.8 184.1 L358.2 183.7 L357.6 184.4 L357.0 184.3 L356.4 185.8 L355.8 188.5 L355.2 189.1 L354.6 191.5 L354.0 193.5 L353.4 195.3 L352.8 197.2 L352.2 194.8 L351.6 190.3 L351.0 179.0Z" fill="#5e9232" stroke="#26421a" stroke-width="0.7" stroke-linejoin="round"/>
<rect x="324.6" y="220.5" width="119.4" height="77.8" fill="url(#gclip)"/>
<rect x="356.08" y="220.5" width="1" height="77.8" fill="#6cb838" opacity="0.7"/>
<rect x="388.10" y="220.5" width="1" height="77.8" fill="#6cb838" opacity="0.7"/>
<rect x="420.13" y="220.5" width="1" height="77.8" fill="#6cb838" opacity="0.7"/>
<rect x="324.6" y="296.0" width="118.1" height="1" fill="#a6e264" opacity="0.9"/>
<rect x="441.7" y="220.5" width="1" height="76.5" fill="#a6e264" opacity="0.9"/>
<rect x="324.6" y="296.9" width="119.4" height="1.4" fill="#2a4418"/>
<rect x="442.7" y="220.5" width="1.3" height="77.8" fill="#2a4418"/>
<rect x="324.6" y="220.5" width="119.4" height="1" fill="#b6f07e" opacity="0.8"/>
<rect x="324.6" y="220.5" width="1" height="77.8" fill="#b0ec78" opacity="0.8"/>
<text x="328.6" y="231.5" font-size="8.5" font-weight="bold" fill="#26481a" stroke="#26481a" stroke-width="0.15">HORNS 2_02</text>
<rect x="326.0" y="259.2" width="116.0" height="1.6" fill="#22381a"/>
<path d="M351.5 260.0 L352.1 252.7 L352.7 249.0 L353.3 243.3 L353.9 243.5 L354.5 245.0 L355.1 246.7 L355.7 248.9 L356.3 248.3 L356.9 251.3 L357.5 254.1 L358.1 253.3 L358.7 253.2 L359.3 254.7 L359.9 254.8 L360.5 254.6 L361.1 251.9 L361.7 253.9 L362.3 251.3 L362.9 251.2 L363.5 253.4 L364.1 252.7 L364.7 254.1 L365.3 251.0 L365.9 254.2 L366.5 254.0 L367.1 253.4 L367.7 248.6 L368.3 253.6 L368.9 252.4 L369.5 253.9 L370.1 254.0 L370.7 249.6 L371.3 254.3 L371.9 251.2 L372.5 253.9 L373.1 253.6 L373.7 253.3 L374.3 247.1 L374.9 248.9 L375.5 252.2 L376.1 243.7 L376.7 250.5 L377.3 248.2 L377.9 250.3 L378.5 249.0 L379.1 249.1 L379.7 249.0 L380.3 249.7 L380.9 244.1 L381.5 249.9 L382.1 241.2 L382.7 250.9 L383.3 251.5 L383.9 248.5 L384.5 252.1 L385.1 252.0 L385.7 252.3 L386.3 248.3 L386.9 245.2 L387.5 252.6 L388.1 253.0 L388.7 252.9 L389.3 249.0 L389.9 253.4 L390.5 253.4 L391.1 253.6 L391.7 253.9 L392.3 249.5 L392.9 249.1 L393.5 250.6 L394.1 252.0 L394.7 254.1 L395.3 255.0 L395.9 251.9 L396.5 255.0 L397.1 253.1 L397.7 253.2 L398.3 254.4 L398.9 255.6 L399.5 253.0 L400.1 253.1 L400.7 254.7 L401.3 253.9 L401.9 253.7 L402.5 255.3 L403.1 254.8 L403.7 254.5 L404.3 254.8 L404.9 253.9 L405.5 253.8 L406.1 253.8 L406.7 253.5 L407.3 253.3 L407.9 253.5 L408.5 252.9 L409.1 253.3 L409.7 253.3 L410.3 252.9 L410.9 252.3 L411.5 252.8 L412.1 252.2 L412.7 252.5 L413.3 251.8 L413.9 252.0 L414.5 251.6 L415.1 251.9 L415.7 250.9 L416.3 251.6 L416.9 250.8 L417.5 251.2 L418.1 250.7 L418.7 250.3 L419.3 250.7 L419.9 250.5 L420.5 250.4 L421.1 250.3 L421.7 252.0 L422.3 258.0 L422.3 262.1 L421.7 267.9 L421.1 269.7 L420.5 270.1 L419.9 269.9 L419.3 269.8 L418.7 269.1 L418.1 268.9 L417.5 269.3 L416.9 268.7 L416.3 268.7 L415.7 268.2 L415.1 268.2 L414.5 268.0 L413.9 267.9 L413.3 267.6 L412.7 268.1 L412.1 267.5 L411.5 267.2 L410.9 267.3 L410.3 267.0 L409.7 266.7 L409.1 266.7 L408.5 266.9 L407.9 266.3 L407.3 266.0 L406.7 266.1 L406.1 266.2 L405.5 265.5 L404.9 265.4 L404.3 265.2 L403.7 265.8 L403.1 265.1 L402.5 264.8 L401.9 265.5 L401.3 264.9 L400.7 265.0 L400.1 267.8 L399.5 265.1 L398.9 268.3 L398.3 266.9 L397.7 266.3 L397.1 267.0 L396.5 267.3 L395.9 269.8 L395.3 269.5 L394.7 265.9 L394.1 268.8 L393.5 268.3 L392.9 267.1 L392.3 268.2 L391.7 266.9 L391.1 271.9 L390.5 267.4 L389.9 267.7 L389.3 268.9 L388.7 273.7 L388.1 268.9 L387.5 269.1 L386.9 269.7 L386.3 269.5 L385.7 270.6 L385.1 278.4 L384.5 270.8 L383.9 269.4 L383.3 269.7 L382.7 269.8 L382.1 271.3 L381.5 270.3 L380.9 271.4 L380.3 270.3 L379.7 269.9 L379.1 279.0 L378.5 269.4 L377.9 269.2 L377.3 274.4 L376.7 276.3 L376.1 272.8 L375.5 268.3 L374.9 275.1 L374.3 274.6 L373.7 270.3 L373.1 268.0 L372.5 267.1 L371.9 268.6 L371.3 266.6 L370.7 266.5 L370.1 268.1 L369.5 269.8 L368.9 266.8 L368.3 266.7 L367.7 266.7 L367.1 267.0 L366.5 267.9 L365.9 268.6 L365.3 266.7 L364.7 267.0 L364.1 267.4 L363.5 267.2 L362.9 269.8 L362.3 267.5 L361.7 266.3 L361.1 268.9 L360.5 265.7 L359.9 265.6 L359.3 266.7 L358.7 265.4 L358.1 268.0 L357.5 267.1 L356.9 266.6 L356.3 271.1 L355.7 274.8 L355.1 272.4 L354.5 273.0 L353.9 273.1 L353.3 274.8 L352.7 271.0 L352.1 267.1 L351.5 260.0Z" fill="#5e9232" stroke="#26421a" stroke-width="0.7" stroke-linejoin="round"/>
<rect x="292.9" y="301.2" width="479.1" height="77.5" fill="url(#gclip)"/>
<rect x="324.05" y="301.2" width="1" height="77.5" fill="#6cb838" opacity="0.7"/>
<rect x="356.08" y="301.2" width="1" height="77.5" fill="#6cb838" opacity="0.7"/>
<rect x="388.10" y="301.2" width="1" height="77.5" fill="#6cb838" opacity="0.7"/>
<rect x="420.13" y="301.2" width="1" height="77.5" fill="#6cb838" opacity="0.7"/>
<rect x="452.16" y="301.2" width="1" height="77.5" fill="#6cb838" opacity="0.7"/>
<rect x="484.18" y="301.2" width="1" height="77.5" fill="#6cb838" opacity="0.7"/>
<rect x="516.21" y="301.2" width="1" height="77.5" fill="#6cb838" opacity="0.7"/>
<rect x="548.23" y="301.2" width="1" height="77.5" fill="#6cb838" opacity="0.7"/>
<rect x="580.26" y="301.2" width="1" height="77.5" fill="#6cb838" opacity="0.7"/>
<rect x="612.29" y="301.2" width="1" height="77.5" fill="#6cb838" opacity="0.7"/>
<rect x="644.31" y="301.2" width="1" height="77.5" fill="#6cb838" opacity="0.7"/>
<rect x="676.34" y="301.2" width="1" height="77.5" fill="#6cb838" opacity="0.7"/>
<rect x="708.36" y="301.2" width="1" height="77.5" fill="#6cb838" opacity="0.7"/>
<rect x="740.39" y="301.2" width="1" height="77.5" fill="#6cb838" opacity="0.7"/>
<rect x="292.9" y="376.4" width="477.8" height="1" fill="#a6e264" opacity="0.9"/>
<rect x="769.7" y="301.2" width="1" height="76.2" fill="#a6e264" opacity="0.9"/>
<rect x="292.9" y="377.3" width="479.1" height="1.4" fill="#2a4418"/>
<rect x="770.7" y="301.2" width="1.3" height="77.5" fill="#2a4418"/>
<rect x="292.9" y="301.2" width="479.1" height="1" fill="#b6f07e" opacity="0.8"/>
<rect x="292.9" y="301.2" width="1" height="77.5" fill="#b0ec78" opacity="0.8"/>
<text x="296.9" y="312.2" font-size="8.5" font-weight="bold" fill="#26481a" stroke="#26481a" stroke-width="0.15">BASS_03</text>
<rect x="294.0" y="339.8" width="127.0" height="1.6" fill="#22381a"/>
<path d="M421.0 340.6 L421.6 335.0 L422.2 332.8 L422.8 329.0 L423.4 329.2 L424.0 331.0 L424.6 330.5 L425.2 332.9 L425.8 337.6 L425.8 345.9 L425.2 352.6 L424.6 357.9 L424.0 359.9 L423.4 361.7 L422.8 357.8 L422.2 356.9 L421.6 352.9 L421.0 340.6Z" fill="#5e9232" stroke="#26421a" stroke-width="0.7" stroke-linejoin="round"/>
<path d="M427.3 340.6 L427.9 335.0 L428.5 332.8 L429.1 331.9 L429.7 329.3 L430.3 329.6 L430.9 330.3 L431.5 331.0 L432.1 332.6 L432.7 333.6 L433.3 337.9 L433.3 345.8 L432.7 351.0 L432.1 358.0 L431.5 360.6 L430.9 359.2 L430.3 358.9 L429.7 361.4 L429.1 357.4 L428.5 356.2 L427.9 351.2 L427.3 340.6Z" fill="#5e9232" stroke="#26421a" stroke-width="0.7" stroke-linejoin="round"/>
<path d="M435.5 337.2 L436.1 333.1 L436.7 331.1 L437.3 330.0 L437.9 330.8 L438.5 330.9 L439.1 330.9 L439.7 330.2 L440.3 330.4 L440.9 329.7 L441.5 330.0 L442.1 329.9 L442.7 330.9 L443.3 329.9 L443.9 330.7 L444.5 328.0 L445.1 329.5 L445.7 330.8 L446.3 330.9 L446.9 329.6 L447.5 329.2 L448.1 330.6 L448.7 329.9 L449.3 330.5 L449.9 330.0 L450.5 329.1 L451.1 330.4 L451.7 330.4 L452.3 330.9 L452.9 330.9 L453.5 330.9 L454.1 329.0 L454.7 329.5 L455.3 329.3 L455.9 330.8 L456.5 332.5 L457.1 334.3 L457.1 349.8 L456.5 354.4 L455.9 363.9 L455.3 358.3 L454.7 357.0 L454.1 358.9 L453.5 361.8 L452.9 361.8 L452.3 360.2 L451.7 357.5 L451.1 356.8 L450.5 357.6 L449.9 356.0 L449.3 364.2 L448.7 358.5 L448.1 362.7 L447.5 356.2 L446.9 359.8 L446.3 357.9 L445.7 360.0 L445.1 363.8 L444.5 356.4 L443.9 364.3 L443.3 356.5 L442.7 359.5 L442.1 363.8 L441.5 356.6 L440.9 356.2 L440.3 358.1 L439.7 363.4 L439.1 356.2 L438.5 359.3 L437.9 356.0 L437.3 363.1 L436.7 354.6 L436.1 350.3 L435.5 346.8Z" fill="#5e9232" stroke="#26421a" stroke-width="0.7" stroke-linejoin="round"/>
<path d="M443.2 335.7 v20.1" stroke="#2a4c16" stroke-width="0.8" opacity="0.9"/>
<path d="M446.2 336.3 v21.7" stroke="#2a4c16" stroke-width="0.8" opacity="0.9"/>
<path d="M448.9 331.9 v21.8" stroke="#2a4c16" stroke-width="0.8" opacity="0.9"/>
<path d="M453.3 336.5 v10.7" stroke="#2a4c16" stroke-width="0.8" opacity="0.9"/>
<path d="M456.2 334.7 v17.3" stroke="#2a4c16" stroke-width="0.8" opacity="0.9"/>
<path d="M458.8 340.6 L459.4 336.2 L460.0 334.1 L460.6 331.6 L461.2 331.6 L461.8 329.2 L462.4 329.7 L463.0 330.4 L463.6 329.2 L464.2 330.9 L464.8 333.2 L465.4 334.7 L466.0 337.2 L466.0 348.0 L465.4 352.8 L464.8 356.0 L464.2 356.5 L463.6 361.9 L463.0 362.0 L462.4 363.1 L461.8 361.7 L461.2 358.8 L460.6 357.6 L460.0 352.3 L459.4 349.6 L458.8 340.6Z" fill="#5e9232" stroke="#26421a" stroke-width="0.7" stroke-linejoin="round"/>
<path d="M467.3 337.2 L467.9 334.6 L468.5 331.2 L469.1 330.9 L469.7 328.3 L470.3 328.3 L470.9 328.0 L471.5 330.1 L472.1 330.1 L472.7 330.9 L473.3 330.1 L473.9 329.4 L474.5 330.9 L475.1 330.3 L475.7 329.7 L476.3 329.9 L476.9 328.7 L477.5 328.9 L478.1 329.8 L478.7 330.9 L479.3 329.8 L479.9 330.5 L480.5 330.8 L481.1 330.8 L481.7 330.6 L482.3 330.1 L482.9 329.2 L483.5 329.1 L484.1 328.3 L484.7 328.1 L485.3 328.9 L485.9 330.6 L486.5 329.2 L487.1 330.8 L487.7 330.9 L488.3 328.1 L488.9 329.3 L489.5 330.1 L490.1 329.8 L490.7 330.7 L491.3 330.8 L491.9 328.3 L492.5 330.9 L493.1 330.9 L493.7 328.8 L494.3 330.8 L494.9 330.7 L495.5 329.1 L496.1 329.1 L496.7 328.4 L497.3 328.5 L497.9 330.9 L498.5 330.8 L499.1 330.2 L499.7 328.9 L500.3 330.8 L500.9 330.3 L501.5 330.0 L502.1 330.8 L502.7 330.6 L503.3 330.1 L503.9 329.5 L504.5 330.9 L505.1 330.6 L505.7 329.9 L506.3 328.6 L506.9 330.8 L507.5 330.6 L508.1 330.0 L508.7 328.7 L509.3 328.9 L509.9 330.9 L510.5 330.7 L511.1 330.9 L511.7 328.4 L512.3 330.9 L512.9 330.9 L513.5 328.0 L514.1 330.5 L514.7 330.2 L515.3 329.5 L515.9 330.7 L516.5 330.5 L517.1 329.8 L517.7 330.0 L518.3 329.6 L518.9 330.3 L519.5 329.6 L520.1 329.3 L520.7 330.9 L521.3 329.6 L521.9 330.6 L522.5 330.6 L523.1 330.1 L523.7 330.9 L524.3 329.2 L524.9 330.9 L525.5 330.8 L526.1 328.5 L526.7 330.8 L527.3 330.4 L527.9 328.0 L528.5 329.4 L529.1 330.9 L529.7 330.5 L530.3 329.8 L530.9 330.0 L531.5 328.2 L532.1 330.6 L532.7 329.2 L533.3 330.8 L533.9 328.4 L534.5 329.6 L535.1 330.9 L535.7 328.8 L536.3 330.8 L536.9 330.7 L537.5 330.7 L538.1 330.5 L538.7 330.3 L539.3 330.9 L539.9 330.9 L540.5 330.8 L541.1 330.1 L541.7 328.8 L542.3 328.4 L542.9 330.5 L543.5 330.5 L544.1 330.3 L544.7 328.8 L545.3 330.9 L545.9 330.1 L546.5 329.8 L547.1 330.6 L547.7 330.8 L548.3 330.1 L548.9 328.8 L549.5 330.9 L550.1 330.9 L550.7 330.8 L551.3 329.7 L551.9 330.5 L552.5 330.6 L553.1 330.0 L553.7 329.3 L554.3 330.9 L554.9 328.9 L555.5 330.6 L556.1 329.5 L556.7 329.5 L557.3 328.3 L557.9 330.0 L558.5 328.8 L559.1 329.6 L559.7 330.6 L560.3 328.6 L560.9 328.2 L561.5 330.3 L562.1 329.1 L562.7 329.3 L563.3 328.7 L563.9 329.6 L564.5 330.7 L565.1 330.9 L565.7 330.5 L566.3 330.8 L566.9 329.1 L567.5 330.4 L568.1 330.4 L568.7 328.3 L569.3 328.2 L569.9 330.9 L570.5 330.7 L571.1 330.9 L571.7 330.8 L572.3 330.5 L572.9 328.2 L573.5 328.7 L574.1 329.6 L574.7 329.3 L575.3 330.8 L575.9 329.7 L576.5 329.3 L577.1 330.7 L577.7 329.2 L578.3 329.9 L578.9 330.3 L579.5 330.5 L580.1 329.4 L580.7 330.3 L581.3 330.1 L581.9 329.7 L582.5 330.1 L583.1 330.0 L583.7 330.7 L584.3 330.9 L584.9 329.5 L585.5 330.9 L586.1 328.7 L586.7 330.4 L587.3 329.2 L587.9 329.2 L588.5 328.1 L589.1 330.6 L589.7 328.7 L590.3 329.5 L590.9 328.2 L591.5 329.1 L592.1 329.0 L592.7 330.4 L593.3 330.8 L593.9 335.0 L593.9 349.9 L593.3 355.8 L592.7 358.5 L592.1 356.2 L591.5 360.0 L590.9 357.1 L590.3 363.2 L589.7 357.6 L589.1 358.8 L588.5 360.9 L587.9 356.5 L587.3 357.9 L586.7 359.1 L586.1 359.1 L585.5 356.0 L584.9 361.6 L584.3 363.9 L583.7 360.9 L583.1 356.0 L582.5 363.6 L581.9 360.9 L581.3 356.5 L580.7 359.8 L580.1 356.2 L579.5 361.7 L578.9 356.2 L578.3 360.2 L577.7 358.6 L577.1 360.7 L576.5 360.3 L575.9 358.7 L575.3 358.7 L574.7 363.0 L574.1 356.5 L573.5 359.2 L572.9 356.7 L572.3 357.2 L571.7 360.0 L571.1 359.7 L570.5 356.0 L569.9 356.0 L569.3 364.1 L568.7 364.0 L568.1 358.0 L567.5 356.0 L566.9 360.3 L566.3 360.4 L565.7 363.8 L565.1 363.8 L564.5 358.5 L563.9 356.9 L563.3 362.2 L562.7 356.3 L562.1 359.2 L561.5 357.3 L560.9 357.5 L560.3 356.1 L559.7 359.1 L559.1 363.1 L558.5 357.8 L557.9 359.0 L557.3 356.1 L556.7 361.0 L556.1 356.2 L555.5 359.5 L554.9 361.0 L554.3 356.0 L553.7 356.8 L553.1 356.0 L552.5 363.3 L551.9 360.3 L551.3 363.6 L550.7 356.6 L550.1 357.4 L549.5 358.6 L548.9 356.8 L548.3 357.5 L547.7 356.1 L547.1 356.0 L546.5 363.7 L545.9 357.1 L545.3 363.9 L544.7 360.2 L544.1 356.6 L543.5 357.3 L542.9 363.9 L542.3 356.5 L541.7 361.9 L541.1 359.7 L540.5 360.6 L539.9 359.6 L539.3 356.6 L538.7 363.9 L538.1 361.8 L537.5 356.1 L536.9 356.4 L536.3 362.3 L535.7 359.7 L535.1 356.1 L534.5 364.0 L533.9 359.3 L533.3 359.2 L532.7 364.0 L532.1 363.0 L531.5 356.2 L530.9 363.4 L530.3 363.9 L529.7 358.6 L529.1 362.1 L528.5 358.9 L527.9 363.6 L527.3 362.5 L526.7 360.7 L526.1 356.8 L525.5 359.3 L524.9 356.4 L524.3 360.6 L523.7 356.7 L523.1 363.5 L522.5 359.9 L521.9 361.4 L521.3 356.9 L520.7 358.5 L520.1 357.2 L519.5 363.2 L518.9 362.7 L518.3 356.0 L517.7 356.0 L517.1 362.8 L516.5 356.7 L515.9 357.5 L515.3 357.8 L514.7 356.4 L514.1 363.0 L513.5 360.4 L512.9 362.3 L512.3 356.6 L511.7 356.1 L511.1 356.0 L510.5 359.3 L509.9 361.1 L509.3 359.1 L508.7 357.5 L508.1 358.7 L507.5 356.0 L506.9 359.3 L506.3 361.3 L505.7 361.6 L505.1 358.5 L504.5 360.1 L503.9 360.5 L503.3 356.7 L502.7 356.6 L502.1 358.1 L501.5 358.4 L500.9 360.0 L500.3 357.2 L499.7 358.1 L499.1 357.7 L498.5 359.9 L497.9 357.5 L497.3 364.0 L496.7 362.9 L496.1 363.2 L495.5 364.1 L494.9 357.4 L494.3 356.1 L493.7 359.9 L493.1 357.1 L492.5 362.0 L491.9 356.0 L491.3 358.4 L490.7 359.1 L490.1 357.0 L489.5 357.9 L488.9 358.7 L488.3 357.9 L487.7 363.6 L487.1 356.3 L486.5 356.7 L485.9 356.9 L485.3 356.3 L484.7 364.2 L484.1 359.8 L483.5 356.0 L482.9 357.6 L482.3 356.0 L481.7 358.7 L481.1 356.1 L480.5 360.0 L479.9 356.2 L479.3 360.7 L478.7 359.9 L478.1 362.9 L477.5 361.2 L476.9 356.9 L476.3 357.9 L475.7 356.1 L475.1 358.9 L474.5 360.9 L473.9 361.1 L473.3 357.4 L472.7 360.3 L472.1 363.3 L471.5 359.2 L470.9 363.0 L470.3 356.0 L469.7 359.3 L469.1 358.8 L468.5 356.1 L467.9 351.7 L467.3 346.0Z" fill="#5e9232" stroke="#26421a" stroke-width="0.7" stroke-linejoin="round"/>
<path d="M475.6 332.2 v16.9" stroke="#2a4c16" stroke-width="0.8" opacity="0.9"/>
<path d="M477.9 332.7 v20.4" stroke="#2a4c16" stroke-width="0.8" opacity="0.9"/>
<path d="M481.1 334.2 v13.5" stroke="#2a4c16" stroke-width="0.8" opacity="0.9"/>
<path d="M483.3 332.9 v11.9" stroke="#2a4c16" stroke-width="0.8" opacity="0.9"/>
<path d="M485.7 332.1 v11.2" stroke="#2a4c16" stroke-width="0.8" opacity="0.9"/>
<path d="M490.7 332.5 v13.0" stroke="#2a4c16" stroke-width="0.8" opacity="0.9"/>
<path d="M494.2 335.5 v18.5" stroke="#2a4c16" stroke-width="0.8" opacity="0.9"/>
<path d="M500.1 332.9 v15.9" stroke="#2a4c16" stroke-width="0.8" opacity="0.9"/>
<path d="M504.2 334.6 v18.6" stroke="#2a4c16" stroke-width="0.8" opacity="0.9"/>
<path d="M507.3 335.4 v18.4" stroke="#2a4c16" stroke-width="0.8" opacity="0.9"/>
<path d="M510.3 331.7 v18.7" stroke="#2a4c16" stroke-width="0.8" opacity="0.9"/>
<path d="M513.1 336.5 v17.2" stroke="#2a4c16" stroke-width="0.8" opacity="0.9"/>
<path d="M515.6 334.1 v17.2" stroke="#2a4c16" stroke-width="0.8" opacity="0.9"/>
<path d="M520.8 334.7 v16.6" stroke="#2a4c16" stroke-width="0.8" opacity="0.9"/>
<path d="M526.1 335.9 v14.0" stroke="#2a4c16" stroke-width="0.8" opacity="0.9"/>
<path d="M531.3 334.8 v21.2" stroke="#2a4c16" stroke-width="0.8" opacity="0.9"/>
<path d="M533.7 336.2 v14.4" stroke="#2a4c16" stroke-width="0.8" opacity="0.9"/>
<path d="M537.5 334.8 v12.6" stroke="#2a4c16" stroke-width="0.8" opacity="0.9"/>
<path d="M541.3 332.1 v21.3" stroke="#2a4c16" stroke-width="0.8" opacity="0.9"/>
<path d="M545.8 335.3 v17.0" stroke="#2a4c16" stroke-width="0.8" opacity="0.9"/>
<path d="M548.4 336.3 v19.5" stroke="#2a4c16" stroke-width="0.8" opacity="0.9"/>
<path d="M551.5 335.8 v19.8" stroke="#2a4c16" stroke-width="0.8" opacity="0.9"/>
<path d="M554.0 335.4 v11.8" stroke="#2a4c16" stroke-width="0.8" opacity="0.9"/>
<path d="M559.6 333.2 v12.2" stroke="#2a4c16" stroke-width="0.8" opacity="0.9"/>
<path d="M561.9 332.1 v11.5" stroke="#2a4c16" stroke-width="0.8" opacity="0.9"/>
<path d="M566.7 333.1 v17.1" stroke="#2a4c16" stroke-width="0.8" opacity="0.9"/>
<path d="M570.6 334.5 v13.4" stroke="#2a4c16" stroke-width="0.8" opacity="0.9"/>
<path d="M575.2 335.8 v15.7" stroke="#2a4c16" stroke-width="0.8" opacity="0.9"/>
<path d="M578.3 334.8 v20.7" stroke="#2a4c16" stroke-width="0.8" opacity="0.9"/>
<path d="M582.5 333.4 v17.8" stroke="#2a4c16" stroke-width="0.8" opacity="0.9"/>
<path d="M584.5 332.7 v20.5" stroke="#2a4c16" stroke-width="0.8" opacity="0.9"/>
<path d="M589.5 334.0 v20.1" stroke="#2a4c16" stroke-width="0.8" opacity="0.9"/>
<path d="M595.3 335.2 v12.0" stroke="#2a4c16" stroke-width="0.8" opacity="0.9"/>
<path d="M595.4 337.1 L596.0 334.5 L596.6 332.0 L597.2 330.9 L597.8 328.8 L598.4 330.9 L599.0 330.8 L599.6 329.7 L600.2 330.4 L600.8 330.8 L601.4 330.8 L602.0 330.8 L602.6 328.9 L603.2 330.0 L603.8 330.6 L604.4 330.1 L605.0 329.3 L605.6 330.9 L606.2 328.8 L606.8 329.5 L607.4 328.4 L608.0 330.8 L608.6 330.4 L609.2 330.6 L609.8 330.8 L610.4 329.4 L611.0 330.1 L611.6 329.4 L612.2 330.2 L612.8 328.0 L613.4 330.3 L614.0 330.4 L614.6 330.4 L615.2 330.6 L615.8 329.6 L616.4 331.8 L617.0 335.8 L617.0 351.1 L616.4 352.3 L615.8 356.4 L615.2 360.1 L614.6 361.4 L614.0 358.7 L613.4 356.8 L612.8 358.5 L612.2 356.7 L611.6 358.5 L611.0 357.5 L610.4 360.8 L609.8 356.4 L609.2 356.2 L608.6 361.0 L608.0 359.7 L607.4 359.6 L606.8 363.5 L606.2 361.6 L605.6 360.8 L605.0 356.5 L604.4 357.2 L603.8 361.8 L603.2 357.2 L602.6 356.7 L602.0 356.1 L601.4 356.2 L600.8 363.1 L600.2 364.1 L599.6 359.4 L599.0 362.0 L598.4 361.2 L597.8 361.0 L597.2 358.8 L596.6 356.2 L596.0 350.3 L595.4 346.0Z" fill="#5e9232" stroke="#26421a" stroke-width="0.7" stroke-linejoin="round"/>
<path d="M600.9 335.2 v15.0" stroke="#2a4c16" stroke-width="0.8" opacity="0.9"/>
<path d="M606.7 331.8 v12.6" stroke="#2a4c16" stroke-width="0.8" opacity="0.9"/>
<path d="M611.2 332.5 v16.2" stroke="#2a4c16" stroke-width="0.8" opacity="0.9"/>
<path d="M614.5 335.8 v10.8" stroke="#2a4c16" stroke-width="0.8" opacity="0.9"/>
<path d="M619.0 340.6 L619.6 335.2 L620.2 333.9 L620.8 330.2 L621.4 330.6 L622.0 329.1 L622.6 330.3 L623.2 329.9 L623.8 331.7 L624.4 332.5 L625.0 333.1 L625.6 336.9 L625.6 347.1 L625.0 352.7 L624.4 355.6 L623.8 357.9 L623.2 358.2 L622.6 362.3 L622.0 362.0 L621.4 361.4 L620.8 357.1 L620.2 355.9 L619.6 350.1 L619.0 340.6Z" fill="#5e9232" stroke="#26421a" stroke-width="0.7" stroke-linejoin="round"/>
<path d="M627.0 337.2 L627.6 334.3 L628.2 331.3 L628.8 330.9 L629.4 330.9 L630.0 329.3 L630.6 330.6 L631.2 329.4 L631.8 328.3 L632.4 330.6 L633.0 330.9 L633.6 330.9 L634.2 330.6 L634.8 329.8 L635.4 330.3 L636.0 328.4 L636.6 330.5 L637.2 328.1 L637.8 328.7 L638.4 330.7 L639.0 330.7 L639.6 328.3 L640.2 330.2 L640.8 329.9 L641.4 330.8 L642.0 329.3 L642.6 330.6 L643.2 330.9 L643.8 330.0 L644.4 329.6 L645.0 329.9 L645.6 328.4 L646.2 330.9 L646.8 330.9 L647.4 328.2 L648.0 329.2 L648.6 330.9 L649.2 332.9 L649.8 337.2 L649.8 346.0 L649.2 351.0 L648.6 356.1 L648.0 360.5 L647.4 359.0 L646.8 362.6 L646.2 356.4 L645.6 356.6 L645.0 363.2 L644.4 359.6 L643.8 363.6 L643.2 360.1 L642.6 356.7 L642.0 362.3 L641.4 356.1 L640.8 359.4 L640.2 357.5 L639.6 358.0 L639.0 358.6 L638.4 358.3 L637.8 356.3 L637.2 362.4 L636.6 358.0 L636.0 363.8 L635.4 360.7 L634.8 357.7 L634.2 358.0 L633.6 358.0 L633.0 356.7 L632.4 363.8 L631.8 361.1 L631.2 360.2 L630.6 359.5 L630.0 358.3 L629.4 356.6 L628.8 358.7 L628.2 355.8 L627.6 350.3 L627.0 346.7Z" fill="#5e9232" stroke="#26421a" stroke-width="0.7" stroke-linejoin="round"/>
<path d="M635.2 332.7 v20.2" stroke="#2a4c16" stroke-width="0.8" opacity="0.9"/>
<path d="M640.3 335.5 v14.4" stroke="#2a4c16" stroke-width="0.8" opacity="0.9"/>
<path d="M643.5 332.3 v10.0" stroke="#2a4c16" stroke-width="0.8" opacity="0.9"/>
<path d="M646.7 333.3 v17.6" stroke="#2a4c16" stroke-width="0.8" opacity="0.9"/>
<path d="M648.7 336.0 v12.0" stroke="#2a4c16" stroke-width="0.8" opacity="0.9"/>
<path d="M650.7 340.6 L651.3 336.4 L651.9 333.5 L652.5 332.1 L653.1 331.6 L653.7 330.5 L654.3 329.2 L654.9 329.3 L655.5 331.1 L656.1 330.7 L656.7 332.9 L657.3 334.5 L657.9 336.8 L657.9 349.4 L657.3 351.6 L656.7 357.1 L656.1 359.1 L655.5 360.3 L654.9 362.1 L654.3 361.9 L653.7 360.4 L653.1 360.6 L652.5 358.1 L651.9 354.1 L651.3 350.1 L650.7 340.6Z" fill="#5e9232" stroke="#26421a" stroke-width="0.7" stroke-linejoin="round"/>
<path d="M659.0 337.2 L659.6 334.6 L660.2 331.9 L660.8 329.3 L661.4 330.1 L662.0 330.9 L662.6 330.8 L663.2 329.2 L663.8 330.8 L664.4 330.6 L665.0 330.7 L665.6 330.9 L666.2 330.6 L666.8 330.8 L667.4 328.6 L668.0 329.9 L668.6 329.2 L669.2 329.4 L669.8 330.9 L670.4 329.8 L671.0 329.0 L671.6 330.9 L672.2 329.9 L672.8 330.2 L673.4 330.6 L674.0 328.4 L674.6 328.3 L675.2 328.0 L675.8 330.6 L676.4 329.0 L677.0 330.3 L677.6 330.2 L678.2 330.9 L678.8 330.7 L679.4 328.2 L680.0 329.1 L680.6 332.9 L681.2 335.8 L681.2 348.5 L680.6 355.2 L680.0 361.6 L679.4 356.3 L678.8 356.0 L678.2 361.1 L677.6 359.7 L677.0 358.9 L676.4 359.8 L675.8 356.7 L675.2 357.6 L674.6 356.2 L674.0 362.8 L673.4 358.9 L672.8 363.6 L672.2 356.0 L671.6 358.7 L671.0 362.6 L670.4 356.7 L669.8 360.5 L669.2 361.5 L668.6 356.4 L668.0 363.2 L667.4 356.0 L666.8 361.3 L666.2 361.1 L665.6 362.4 L665.0 356.0 L664.4 356.2 L663.8 359.2 L663.2 356.0 L662.6 358.5 L662.0 356.1 L661.4 361.1 L660.8 360.7 L660.2 357.8 L659.6 352.6 L659.0 347.6Z" fill="#5e9232" stroke="#26421a" stroke-width="0.7" stroke-linejoin="round"/>
<path d="M667.5 332.9 v19.2" stroke="#2a4c16" stroke-width="0.8" opacity="0.9"/>
<path d="M671.4 336.4 v19.3" stroke="#2a4c16" stroke-width="0.8" opacity="0.9"/>
<path d="M677.2 335.0 v17.5" stroke="#2a4c16" stroke-width="0.8" opacity="0.9"/>
<path d="M679.8 331.8 v18.5" stroke="#2a4c16" stroke-width="0.8" opacity="0.9"/>
<path d="M683.4 340.6 L684.0 335.1 L684.6 332.7 L685.2 330.7 L685.8 328.7 L686.4 328.7 L687.0 328.7 L687.6 330.0 L688.2 331.9 L688.8 332.4 L689.4 335.9 L690.0 340.6 L690.0 340.6 L689.4 350.7 L688.8 354.4 L688.2 358.6 L687.6 359.8 L687.0 362.4 L686.4 361.2 L685.8 360.6 L685.2 357.8 L684.6 356.3 L684.0 350.0 L683.4 340.6Z" fill="#5e9232" stroke="#26421a" stroke-width="0.7" stroke-linejoin="round"/>
<path d="M691.3 337.2 L691.9 333.6 L692.5 331.9 L693.1 330.1 L693.7 328.2 L694.3 330.9 L694.9 330.8 L695.5 329.7 L696.1 330.9 L696.7 328.7 L697.3 330.9 L697.9 330.3 L698.5 328.6 L699.1 328.2 L699.7 328.9 L700.3 329.7 L700.9 330.9 L701.5 328.1 L702.1 328.5 L702.7 330.8 L703.3 328.7 L703.9 330.9 L704.5 330.6 L705.1 330.2 L705.7 330.1 L706.3 328.1 L706.9 330.1 L707.5 329.9 L708.1 330.7 L708.7 330.4 L709.3 330.0 L709.9 328.4 L710.5 330.9 L711.1 330.0 L711.7 330.6 L712.3 330.9 L712.9 331.8 L713.5 333.8 L713.5 350.8 L712.9 355.7 L712.3 358.6 L711.7 357.2 L711.1 357.6 L710.5 359.7 L709.9 357.2 L709.3 363.3 L708.7 364.3 L708.1 363.5 L707.5 360.6 L706.9 359.2 L706.3 364.1 L705.7 357.8 L705.1 362.7 L704.5 362.3 L703.9 362.2 L703.3 360.4 L702.7 357.9 L702.1 358.0 L701.5 356.2 L700.9 356.2 L700.3 362.8 L699.7 357.4 L699.1 363.3 L698.5 362.3 L697.9 356.0 L697.3 357.6 L696.7 362.1 L696.1 360.9 L695.5 356.8 L694.9 359.6 L694.3 361.9 L693.7 356.6 L693.1 356.0 L692.5 355.4 L691.9 353.9 L691.3 348.4Z" fill="#5e9232" stroke="#26421a" stroke-width="0.7" stroke-linejoin="round"/>
<path d="M699.3 332.8 v16.1" stroke="#2a4c16" stroke-width="0.8" opacity="0.9"/>
<path d="M703.2 335.4 v18.2" stroke="#2a4c16" stroke-width="0.8" opacity="0.9"/>
<path d="M708.6 331.7 v19.6" stroke="#2a4c16" stroke-width="0.8" opacity="0.9"/>
<path d="M714.5 333.7 v15.4" stroke="#2a4c16" stroke-width="0.8" opacity="0.9"/>
<path d="M715.0 340.6 L715.6 336.1 L716.2 332.9 L716.8 331.6 L717.4 330.0 L718.0 328.5 L718.6 328.9 L719.2 330.9 L719.8 330.0 L720.4 332.9 L721.0 334.4 L721.6 336.6 L721.6 348.1 L721.0 352.0 L720.4 356.5 L719.8 358.7 L719.2 362.3 L718.6 363.4 L718.0 360.2 L717.4 360.1 L716.8 358.0 L716.2 355.6 L715.6 350.7 L715.0 340.6Z" fill="#5e9232" stroke="#26421a" stroke-width="0.7" stroke-linejoin="round"/>
<path d="M723.3 336.3 L723.9 333.5 L724.5 332.0 L725.1 330.9 L725.7 330.7 L726.3 330.6 L726.9 330.8 L727.5 330.3 L728.1 330.1 L728.7 329.6 L729.3 329.8 L729.9 330.6 L730.5 330.9 L731.1 330.9 L731.7 330.3 L732.3 330.8 L732.9 328.5 L733.5 329.7 L734.1 329.7 L734.7 329.5 L735.3 329.9 L735.9 330.1 L736.5 329.7 L737.1 330.4 L737.7 330.9 L738.3 330.7 L738.9 328.8 L739.5 330.0 L740.1 330.8 L740.7 329.7 L741.3 328.6 L741.9 330.7 L742.5 328.8 L743.1 329.6 L743.7 330.5 L744.3 330.7 L744.9 332.1 L745.5 335.6 L745.5 347.5 L744.9 352.5 L744.3 360.5 L743.7 359.6 L743.1 360.2 L742.5 361.9 L741.9 362.2 L741.3 359.0 L740.7 362.9 L740.1 358.3 L739.5 356.0 L738.9 357.5 L738.3 360.1 L737.7 358.2 L737.1 363.6 L736.5 356.2 L735.9 357.6 L735.3 364.4 L734.7 362.1 L734.1 363.8 L733.5 364.3 L732.9 359.5 L732.3 358.3 L731.7 357.9 L731.1 357.2 L730.5 359.3 L729.9 357.2 L729.3 361.9 L728.7 363.2 L728.1 358.6 L727.5 360.5 L726.9 363.5 L726.3 356.1 L725.7 360.0 L725.1 359.9 L724.5 355.7 L723.9 352.2 L723.3 347.5Z" fill="#5e9232" stroke="#26421a" stroke-width="0.7" stroke-linejoin="round"/>
<path d="M728.7 335.7 v13.5" stroke="#2a4c16" stroke-width="0.8" opacity="0.9"/>
<path d="M732.4 334.7 v20.9" stroke="#2a4c16" stroke-width="0.8" opacity="0.9"/>
<path d="M734.6 332.3 v12.9" stroke="#2a4c16" stroke-width="0.8" opacity="0.9"/>
<path d="M737.8 334.3 v15.3" stroke="#2a4c16" stroke-width="0.8" opacity="0.9"/>
<path d="M742.1 336.4 v17.1" stroke="#2a4c16" stroke-width="0.8" opacity="0.9"/>
<path d="M744.3 335.8 v13.4" stroke="#2a4c16" stroke-width="0.8" opacity="0.9"/>
<path d="M747.0 340.6 L747.6 336.1 L748.2 333.3 L748.8 330.9 L749.4 329.1 L750.0 328.2 L750.6 329.2 L751.2 329.6 L751.8 330.2 L752.4 332.2 L753.0 333.1 L753.6 336.9 L753.6 347.7 L753.0 354.0 L752.4 356.2 L751.8 361.2 L751.2 361.5 L750.6 359.1 L750.0 359.4 L749.4 361.9 L748.8 358.8 L748.2 353.4 L747.6 348.7 L747.0 340.6Z" fill="#5e9232" stroke="#26421a" stroke-width="0.7" stroke-linejoin="round"/>
<path d="M755.7 336.6 L756.3 333.4 L756.9 330.9 L757.5 330.0 L758.1 328.6 L758.7 330.9 L759.3 330.8 L759.9 330.8 L760.5 330.5 L761.1 330.1 L761.7 330.5 L762.3 330.9 L762.9 328.6 L763.5 329.7 L764.1 328.0 L764.7 329.6 L765.3 330.9 L765.9 329.1 L766.5 330.5 L767.1 330.0 L767.7 331.4 L768.3 334.2 L768.9 336.1 L768.9 349.8 L768.3 351.0 L767.7 355.4 L767.1 358.5 L766.5 357.1 L765.9 361.5 L765.3 358.2 L764.7 356.3 L764.1 357.8 L763.5 356.2 L762.9 362.4 L762.3 358.8 L761.7 362.8 L761.1 363.9 L760.5 358.4 L759.9 356.3 L759.3 362.7 L758.7 358.5 L758.1 357.0 L757.5 356.5 L756.9 354.6 L756.3 354.5 L755.7 346.0Z" fill="#5e9232" stroke="#26421a" stroke-width="0.7" stroke-linejoin="round"/>
<path d="M763.9 333.2 v15.4" stroke="#2a4c16" stroke-width="0.8" opacity="0.9"/>
<path d="M767.0 334.2 v14.8" stroke="#2a4c16" stroke-width="0.8" opacity="0.9"/>
<rect x="426.0" y="339.8" width="1.3" height="1.6" fill="#22381a"/>
<rect x="433.5" y="339.8" width="2.0" height="1.6" fill="#22381a"/>
<rect x="457.5" y="339.8" width="1.3" height="1.6" fill="#22381a"/>
<rect x="466.4" y="339.8" width="0.9" height="1.6" fill="#22381a"/>
<rect x="594.4" y="339.8" width="1.0" height="1.6" fill="#22381a"/>
<rect x="617.3" y="339.8" width="1.7" height="1.6" fill="#22381a"/>
<rect x="626.0" y="339.8" width="1.0" height="1.6" fill="#22381a"/>
<rect x="649.8" y="339.8" width="0.9" height="1.6" fill="#22381a"/>
<rect x="658.4" y="339.8" width="0.6" height="1.6" fill="#22381a"/>
<rect x="681.5" y="339.8" width="1.9" height="1.6" fill="#22381a"/>
<rect x="690.0" y="339.8" width="1.3" height="1.6" fill="#22381a"/>
<rect x="714.0" y="339.8" width="1.0" height="1.6" fill="#22381a"/>
<rect x="722.0" y="339.8" width="1.3" height="1.6" fill="#22381a"/>
<rect x="745.7" y="339.8" width="1.3" height="1.6" fill="#22381a"/>
<rect x="754.0" y="339.8" width="1.7" height="1.6" fill="#22381a"/>
<rect x="292.9" y="382.0" width="231.5" height="77.3" fill="url(#gclip)"/>
<rect x="324.05" y="382.0" width="1" height="77.3" fill="#6cb838" opacity="0.7"/>
<rect x="356.08" y="382.0" width="1" height="77.3" fill="#6cb838" opacity="0.7"/>
<rect x="388.10" y="382.0" width="1" height="77.3" fill="#6cb838" opacity="0.7"/>
<rect x="420.13" y="382.0" width="1" height="77.3" fill="#6cb838" opacity="0.7"/>
<rect x="452.16" y="382.0" width="1" height="77.3" fill="#6cb838" opacity="0.7"/>
<rect x="484.18" y="382.0" width="1" height="77.3" fill="#6cb838" opacity="0.7"/>
<rect x="516.21" y="382.0" width="1" height="77.3" fill="#6cb838" opacity="0.7"/>
<rect x="292.9" y="457.0" width="230.2" height="1" fill="#a6e264" opacity="0.9"/>
<rect x="522.1" y="382.0" width="1" height="76.0" fill="#a6e264" opacity="0.9"/>
<rect x="292.9" y="457.9" width="231.5" height="1.4" fill="#2a4418"/>
<rect x="523.1" y="382.0" width="1.3" height="77.3" fill="#2a4418"/>
<rect x="292.9" y="382.0" width="231.5" height="1" fill="#b6f07e" opacity="0.8"/>
<rect x="292.9" y="382.0" width="1" height="77.3" fill="#b0ec78" opacity="0.8"/>
<text x="296.9" y="393.0" font-size="8.5" font-weight="bold" fill="#26481a" stroke="#26481a" stroke-width="0.15">STRINGS_05</text>
<rect x="294.0" y="420.2" width="229.0" height="1.6" fill="#22381a"/>
<path d="M357.0 420.5 L357.7 419.2 L358.4 418.1 L359.1 417.9 L359.8 416.4 L360.5 416.5 L361.2 417.5 L361.9 417.4 L362.6 417.7 L363.3 417.6 L364.0 416.7 L364.7 416.6 L365.4 417.1 L366.1 417.6 L366.8 417.5 L367.5 415.7 L368.2 417.4 L368.9 417.1 L369.6 417.4 L370.3 416.7 L371.0 416.0 L371.7 417.3 L372.4 417.4 L373.1 417.3 L373.8 417.4 L374.5 417.3 L375.2 416.2 L375.9 417.3 L376.6 416.6 L377.3 415.6 L378.0 416.5 L378.7 417.4 L379.4 417.3 L380.1 417.4 L380.8 417.5 L381.5 417.6 L382.2 416.2 L382.9 417.7 L383.6 417.5 L384.3 418.0 L385.0 417.1 L385.7 418.2 L386.4 418.2 L387.1 417.9 L387.8 418.5 L388.5 418.6 L389.2 418.9 L389.9 418.5 L390.6 417.5 L391.3 417.8 L392.0 416.0 L392.7 417.5 L393.4 417.1 L394.1 417.3 L394.8 417.5 L395.5 417.4 L396.2 416.0 L396.9 416.3 L397.6 416.6 L398.3 417.2 L399.0 417.1 L399.7 416.9 L400.4 414.8 L401.1 415.0 L401.8 416.8 L402.5 416.9 L403.2 417.1 L403.9 417.2 L404.6 415.6 L405.3 417.1 L406.0 417.5 L406.7 416.5 L407.4 417.5 L408.1 416.7 L408.8 417.1 L409.5 417.7 L410.2 417.8 L410.9 417.0 L411.6 417.9 L412.3 417.4 L413.0 418.0 L413.7 418.0 L414.4 417.9 L415.1 417.6 L415.8 418.1 L416.5 417.5 L417.2 418.1 L417.9 417.2 L418.6 416.8 L419.3 418.2 L420.0 418.9 L420.7 418.4 L421.4 418.7 L422.1 418.1 L422.8 417.4 L423.5 417.1 L424.2 416.8 L424.9 416.7 L425.6 417.3 L426.3 417.0 L427.0 417.2 L427.7 416.5 L428.4 416.8 L429.1 417.1 L429.8 416.9 L430.5 417.0 L431.2 416.7 L431.9 416.4 L432.6 417.1 L433.3 417.2 L434.0 417.1 L434.7 417.2 L435.4 417.1 L436.1 416.6 L436.8 416.8 L437.5 416.8 L438.2 416.1 L438.9 416.1 L439.6 417.3 L440.3 416.9 L441.0 415.7 L441.7 417.0 L442.4 416.1 L443.1 417.7 L443.8 417.1 L444.5 417.1 L445.2 417.6 L445.9 417.8 L446.6 416.1 L447.3 416.3 L448.0 417.5 L448.7 416.3 L449.4 417.9 L450.1 416.4 L450.8 418.1 L451.5 418.3 L452.2 418.4 L452.9 418.1 L453.6 419.1 L454.3 419.1 L455.0 418.1 L455.7 418.4 L456.4 416.5 L457.1 417.4 L457.8 417.2 L458.5 416.9 L459.2 416.9 L459.9 417.4 L460.6 417.7 L461.3 417.5 L462.0 416.8 L462.7 417.7 L463.4 417.4 L464.1 416.1 L464.8 417.7 L465.5 417.4 L466.2 416.7 L466.9 417.2 L467.6 417.4 L468.3 416.1 L469.0 417.4 L469.7 417.5 L470.4 416.6 L471.1 417.4 L471.8 415.7 L472.5 417.1 L473.2 417.1 L473.9 417.5 L474.6 416.2 L475.3 417.4 L476.0 416.2 L476.7 417.5 L477.4 415.4 L478.1 416.6 L478.8 416.0 L479.5 416.7 L480.2 416.5 L480.9 417.4 L481.6 417.5 L482.3 417.2 L483.0 416.8 L483.7 417.8 L484.4 418.1 L485.1 418.0 L485.8 417.7 L486.5 419.8 L486.5 422.1 L485.8 423.3 L485.1 424.4 L484.4 423.9 L483.7 424.4 L483.0 424.5 L482.3 424.5 L481.6 425.2 L480.9 426.3 L480.2 424.5 L479.5 426.5 L478.8 424.6 L478.1 424.5 L477.4 426.7 L476.7 425.5 L476.0 425.3 L475.3 425.9 L474.6 424.5 L473.9 425.1 L473.2 424.7 L472.5 425.0 L471.8 424.5 L471.1 425.7 L470.4 424.8 L469.7 425.9 L469.0 425.9 L468.3 424.6 L467.6 424.7 L466.9 426.3 L466.2 425.2 L465.5 425.1 L464.8 425.7 L464.1 425.0 L463.4 426.3 L462.7 424.6 L462.0 425.1 L461.3 424.7 L460.6 425.0 L459.9 424.7 L459.2 424.6 L458.5 424.5 L457.8 425.1 L457.1 424.9 L456.4 424.4 L455.7 424.0 L455.0 423.7 L454.3 424.5 L453.6 423.7 L452.9 424.7 L452.2 424.1 L451.5 424.9 L450.8 424.9 L450.1 424.9 L449.4 424.7 L448.7 425.0 L448.0 424.7 L447.3 426.5 L446.6 424.9 L445.9 424.8 L445.2 425.0 L444.5 426.5 L443.8 424.8 L443.1 425.4 L442.4 424.9 L441.7 425.1 L441.0 427.1 L440.3 425.5 L439.6 425.0 L438.9 425.9 L438.2 425.5 L437.5 427.5 L436.8 425.5 L436.1 425.4 L435.4 425.6 L434.7 427.6 L434.0 426.3 L433.3 426.5 L432.6 428.9 L431.9 427.5 L431.2 427.2 L430.5 427.0 L429.8 427.2 L429.1 427.0 L428.4 426.8 L427.7 426.5 L427.0 427.5 L426.3 427.1 L425.6 425.9 L424.9 426.9 L424.2 426.9 L423.5 425.3 L422.8 424.9 L422.1 423.8 L421.4 423.7 L420.7 423.2 L420.0 424.4 L419.3 424.2 L418.6 425.8 L417.9 424.9 L417.2 425.4 L416.5 425.4 L415.8 424.9 L415.1 425.4 L414.4 425.5 L413.7 425.1 L413.0 424.8 L412.3 424.9 L411.6 426.2 L410.9 425.3 L410.2 424.9 L409.5 425.4 L408.8 425.7 L408.1 425.5 L407.4 425.8 L406.7 426.2 L406.0 424.8 L405.3 424.9 L404.6 425.5 L403.9 427.0 L403.2 424.9 L402.5 425.0 L401.8 425.9 L401.1 425.3 L400.4 426.5 L399.7 425.3 L399.0 426.4 L398.3 425.2 L397.6 426.1 L396.9 426.8 L396.2 424.8 L395.5 425.1 L394.8 426.4 L394.1 425.0 L393.4 426.0 L392.7 424.7 L392.0 425.0 L391.3 424.6 L390.6 426.1 L389.9 423.8 L389.2 423.4 L388.5 423.5 L387.8 425.0 L387.1 425.5 L386.4 424.3 L385.7 425.8 L385.0 425.5 L384.3 425.2 L383.6 425.3 L382.9 424.5 L382.2 426.1 L381.5 425.4 L380.8 426.3 L380.1 424.6 L379.4 425.1 L378.7 425.7 L378.0 426.0 L377.3 424.7 L376.6 424.7 L375.9 425.1 L375.2 425.1 L374.5 424.9 L373.8 425.6 L373.1 425.5 L372.4 424.9 L371.7 425.0 L371.0 425.1 L370.3 427.0 L369.6 426.9 L368.9 425.8 L368.2 426.9 L367.5 426.4 L366.8 424.9 L366.1 426.4 L365.4 424.8 L364.7 424.8 L364.0 424.8 L363.3 426.4 L362.6 424.8 L361.9 425.2 L361.2 424.7 L360.5 424.6 L359.8 425.3 L359.1 424.9 L358.4 424.8 L357.7 423.3 L357.0 421.6Z" fill="#5e9232" stroke="#26421a" stroke-width="0.7" stroke-linejoin="round"/>
<rect x="452.5" y="463.0" width="126.5" height="77.5" fill="url(#gclip)"/>
<rect x="484.18" y="463.0" width="1" height="77.5" fill="#6cb838" opacity="0.7"/>
<rect x="516.21" y="463.0" width="1" height="77.5" fill="#6cb838" opacity="0.7"/>
<rect x="548.23" y="463.0" width="1" height="77.5" fill="#6cb838" opacity="0.7"/>
<rect x="452.5" y="538.2" width="125.2" height="1" fill="#a6e264" opacity="0.9"/>
<rect x="576.7" y="463.0" width="1" height="76.2" fill="#a6e264" opacity="0.9"/>
<rect x="452.5" y="539.1" width="126.5" height="1.4" fill="#2a4418"/>
<rect x="577.7" y="463.0" width="1.3" height="77.5" fill="#2a4418"/>
<rect x="452.5" y="463.0" width="126.5" height="1" fill="#b6f07e" opacity="0.8"/>
<rect x="452.5" y="463.0" width="1" height="77.5" fill="#b0ec78" opacity="0.8"/>
<text x="456.5" y="474.0" font-size="8.5" font-weight="bold" fill="#26481a" stroke="#26481a" stroke-width="0.15">STR CH L_02</text>
<rect x="454.0" y="501.4" width="124.0" height="1.6" fill="#22381a"/>
<path d="M485.0 502.2 L485.8 501.1 L486.6 500.6 L487.4 499.0 L488.2 498.4 L489.0 498.4 L489.8 497.2 L490.6 497.5 L491.4 498.1 L492.2 496.4 L493.0 496.2 L493.8 495.8 L494.6 497.8 L495.4 495.9 L496.2 497.8 L497.0 496.3 L497.8 495.5 L498.6 497.5 L499.4 497.1 L500.2 495.6 L501.0 496.3 L501.8 495.9 L502.6 498.0 L503.4 496.4 L504.2 496.5 L505.0 495.7 L505.8 497.8 L506.6 497.2 L507.4 496.7 L508.2 497.5 L509.0 496.4 L509.8 496.4 L510.6 497.8 L511.4 497.3 L512.2 498.0 L513.0 498.7 L513.8 499.1 L514.6 498.2 L515.4 498.4 L516.2 499.1 L517.0 500.0 L517.8 499.6 L518.6 498.4 L519.4 498.3 L520.2 497.9 L521.0 496.9 L521.8 497.3 L522.6 497.9 L523.4 497.9 L524.2 497.0 L525.0 496.6 L525.8 497.0 L526.6 494.9 L527.4 496.6 L528.2 495.7 L529.0 495.8 L529.8 494.1 L530.6 494.3 L531.4 493.1 L532.2 494.0 L533.0 494.6 L533.8 493.3 L534.6 495.4 L535.4 495.1 L536.2 496.8 L537.0 496.7 L537.8 496.0 L538.6 494.7 L539.4 497.0 L540.2 496.0 L541.0 495.8 L541.8 497.0 L542.6 498.3 L543.4 498.5 L544.2 497.8 L545.0 498.1 L545.8 499.4 L546.6 499.1 L547.4 499.3 L548.2 500.5 L549.0 501.0 L549.8 501.1 L550.6 501.8 L550.6 502.5 L549.8 503.3 L549.0 503.8 L548.2 504.6 L547.4 505.2 L546.6 506.0 L545.8 505.9 L545.0 505.2 L544.2 505.5 L543.4 506.8 L542.6 506.5 L541.8 507.0 L541.0 508.1 L540.2 507.4 L539.4 509.1 L538.6 506.8 L537.8 509.7 L537.0 509.3 L536.2 509.7 L535.4 507.5 L534.6 507.5 L533.8 511.1 L533.0 509.7 L532.2 508.9 L531.4 508.9 L530.6 510.9 L529.8 508.5 L529.0 508.2 L528.2 507.6 L527.4 508.5 L526.6 508.7 L525.8 507.9 L525.0 509.2 L524.2 507.1 L523.4 507.8 L522.6 506.1 L521.8 507.9 L521.0 506.4 L520.2 505.8 L519.4 506.6 L518.6 505.6 L517.8 505.3 L517.0 504.6 L516.2 505.2 L515.4 504.9 L514.6 505.6 L513.8 506.1 L513.0 507.5 L512.2 506.4 L511.4 506.4 L510.6 508.0 L509.8 506.0 L509.0 506.2 L508.2 508.6 L507.4 506.7 L506.6 506.9 L505.8 508.1 L505.0 507.8 L504.2 506.6 L503.4 507.2 L502.6 507.3 L501.8 509.0 L501.0 508.2 L500.2 507.7 L499.4 508.9 L498.6 508.1 L497.8 507.9 L497.0 507.1 L496.2 506.9 L495.4 507.5 L494.6 508.5 L493.8 507.2 L493.0 507.9 L492.2 506.7 L491.4 507.2 L490.6 507.3 L489.8 506.5 L489.0 507.1 L488.2 506.8 L487.4 505.8 L486.6 504.5 L485.8 503.1 L485.0 502.2Z" fill="#5e9232" stroke="#26421a" stroke-width="0.7" stroke-linejoin="round"/>
<rect x="740.9" y="463.0" width="31.1" height="77.5" fill="url(#gclip)"/>
<rect x="740.9" y="538.2" width="29.8" height="1" fill="#a6e264" opacity="0.9"/>
<rect x="769.7" y="463.0" width="1" height="76.2" fill="#a6e264" opacity="0.9"/>
<rect x="740.9" y="539.1" width="31.1" height="1.4" fill="#2a4418"/>
<rect x="770.7" y="463.0" width="1.3" height="77.5" fill="#2a4418"/>
<rect x="740.9" y="463.0" width="31.1" height="1" fill="#b6f07e" opacity="0.8"/>
<rect x="740.9" y="463.0" width="1" height="77.5" fill="#b0ec78" opacity="0.8"/>
<text x="744.9" y="474.0" font-size="8.5" font-weight="bold" fill="#26481a" stroke="#26481a" stroke-width="0.15">STR CH L_02</text>
<rect x="742.0" y="501.4" width="26.0" height="1.6" fill="#22381a"/>
<rect x="452.5" y="543.4" width="128.8" height="77.6" fill="url(#gclip)"/>
<rect x="484.18" y="543.4" width="1" height="77.6" fill="#6cb838" opacity="0.7"/>
<rect x="516.21" y="543.4" width="1" height="77.6" fill="#6cb838" opacity="0.7"/>
<rect x="548.23" y="543.4" width="1" height="77.6" fill="#6cb838" opacity="0.7"/>
<rect x="452.5" y="618.7" width="127.5" height="1" fill="#a6e264" opacity="0.9"/>
<rect x="579.0" y="543.4" width="1" height="76.3" fill="#a6e264" opacity="0.9"/>
<rect x="452.5" y="619.6" width="128.8" height="1.4" fill="#2a4418"/>
<rect x="580.0" y="543.4" width="1.3" height="77.6" fill="#2a4418"/>
<rect x="452.5" y="543.4" width="128.8" height="1" fill="#b6f07e" opacity="0.8"/>
<rect x="452.5" y="543.4" width="1" height="77.6" fill="#b0ec78" opacity="0.8"/>
<text x="456.5" y="554.4" font-size="8.5" font-weight="bold" fill="#26481a" stroke="#26481a" stroke-width="0.15">STR CH R_01</text>
<rect x="454.0" y="581.8" width="126.0" height="1.6" fill="#22381a"/>
<path d="M484.0 582.6 L484.8 581.4 L485.6 580.4 L486.4 580.2 L487.2 579.7 L488.0 579.5 L488.8 578.5 L489.6 579.2 L490.4 577.8 L491.2 577.8 L492.0 576.5 L492.8 576.7 L493.6 578.7 L494.4 578.2 L495.2 578.6 L496.0 577.2 L496.8 577.5 L497.6 578.9 L498.4 577.1 L499.2 578.2 L500.0 577.7 L500.8 576.7 L501.6 578.4 L502.4 577.5 L503.2 576.9 L504.0 576.2 L504.8 577.8 L505.6 578.6 L506.4 579.0 L507.2 576.8 L508.0 576.5 L508.8 577.2 L509.6 577.6 L510.4 577.1 L511.2 578.2 L512.0 579.4 L512.8 578.0 L513.6 577.7 L514.4 579.1 L515.2 580.3 L516.0 580.5 L516.8 581.0 L517.6 580.7 L518.4 579.9 L519.2 580.0 L520.0 578.5 L520.8 577.6 L521.6 578.9 L522.4 578.5 L523.2 576.7 L524.0 578.7 L524.8 578.4 L525.6 577.2 L526.4 578.9 L527.2 577.6 L528.0 575.5 L528.8 576.8 L529.6 576.1 L530.4 575.2 L531.2 575.3 L532.0 577.0 L532.8 578.0 L533.6 578.2 L534.4 577.6 L535.2 577.2 L536.0 578.4 L536.8 578.0 L537.6 578.4 L538.4 576.6 L539.2 578.0 L540.0 577.8 L540.8 576.5 L541.6 577.8 L542.4 579.1 L543.2 578.6 L544.0 577.5 L544.8 579.7 L545.6 579.0 L546.4 579.6 L547.2 580.3 L548.0 580.7 L548.8 581.8 L549.6 582.3 L549.6 583.0 L548.8 583.5 L548.0 584.4 L547.2 585.5 L546.4 584.7 L545.6 585.4 L544.8 587.7 L544.0 586.0 L543.2 586.4 L542.4 586.1 L541.6 587.4 L540.8 589.1 L540.0 586.7 L539.2 587.6 L538.4 587.1 L537.6 589.8 L536.8 588.1 L536.0 587.3 L535.2 587.0 L534.4 587.4 L533.6 587.0 L532.8 589.1 L532.0 588.2 L531.2 589.7 L530.4 589.6 L529.6 586.9 L528.8 588.8 L528.0 588.8 L527.2 588.3 L526.4 587.6 L525.6 587.0 L524.8 587.5 L524.0 586.6 L523.2 586.3 L522.4 588.1 L521.6 586.7 L520.8 587.7 L520.0 587.5 L519.2 586.0 L518.4 586.2 L517.6 584.6 L516.8 585.1 L516.0 584.7 L515.2 585.7 L514.4 586.7 L513.6 586.1 L512.8 588.0 L512.0 587.5 L511.2 587.5 L510.4 588.4 L509.6 587.2 L508.8 587.7 L508.0 587.0 L507.2 587.8 L506.4 588.1 L505.6 587.6 L504.8 588.4 L504.0 586.5 L503.2 587.0 L502.4 588.7 L501.6 587.8 L500.8 588.2 L500.0 587.0 L499.2 587.9 L498.4 587.4 L497.6 586.7 L496.8 586.3 L496.0 587.2 L495.2 587.8 L494.4 588.5 L493.6 586.4 L492.8 586.8 L492.0 586.0 L491.2 586.9 L490.4 588.3 L489.6 586.2 L488.8 587.7 L488.0 585.7 L487.2 586.5 L486.4 585.8 L485.6 584.6 L484.8 583.4 L484.0 582.6Z" fill="#5e9232" stroke="#26421a" stroke-width="0.7" stroke-linejoin="round"/>
<rect x="740.9" y="543.4" width="31.1" height="77.6" fill="url(#gclip)"/>
<rect x="740.9" y="618.7" width="29.8" height="1" fill="#a6e264" opacity="0.9"/>
<rect x="769.7" y="543.4" width="1" height="76.3" fill="#a6e264" opacity="0.9"/>
<rect x="740.9" y="619.6" width="31.1" height="1.4" fill="#2a4418"/>
<rect x="770.7" y="543.4" width="1.3" height="77.6" fill="#2a4418"/>
<rect x="740.9" y="543.4" width="31.1" height="1" fill="#b6f07e" opacity="0.8"/>
<rect x="740.9" y="543.4" width="1" height="77.6" fill="#b0ec78" opacity="0.8"/>
<text x="744.9" y="554.4" font-size="8.5" font-weight="bold" fill="#26481a" stroke="#26481a" stroke-width="0.15">STR CH R_01</text>
<rect x="742.0" y="581.8" width="26.0" height="1.6" fill="#22381a"/>
<rect x="255.2" y="624.1" width="516.8" height="77.9" fill="url(#gclip)"/>
<rect x="260.00" y="624.1" width="1" height="77.9" fill="#6cb838" opacity="0.7"/>
<rect x="292.03" y="624.1" width="1" height="77.9" fill="#6cb838" opacity="0.7"/>
<rect x="324.05" y="624.1" width="1" height="77.9" fill="#6cb838" opacity="0.7"/>
<rect x="356.08" y="624.1" width="1" height="77.9" fill="#6cb838" opacity="0.7"/>
<rect x="388.10" y="624.1" width="1" height="77.9" fill="#6cb838" opacity="0.7"/>
<rect x="420.13" y="624.1" width="1" height="77.9" fill="#6cb838" opacity="0.7"/>
<rect x="452.16" y="624.1" width="1" height="77.9" fill="#6cb838" opacity="0.7"/>
<rect x="484.18" y="624.1" width="1" height="77.9" fill="#6cb838" opacity="0.7"/>
<rect x="516.21" y="624.1" width="1" height="77.9" fill="#6cb838" opacity="0.7"/>
<rect x="548.23" y="624.1" width="1" height="77.9" fill="#6cb838" opacity="0.7"/>
<rect x="580.26" y="624.1" width="1" height="77.9" fill="#6cb838" opacity="0.7"/>
<rect x="612.29" y="624.1" width="1" height="77.9" fill="#6cb838" opacity="0.7"/>
<rect x="644.31" y="624.1" width="1" height="77.9" fill="#6cb838" opacity="0.7"/>
<rect x="676.34" y="624.1" width="1" height="77.9" fill="#6cb838" opacity="0.7"/>
<rect x="708.36" y="624.1" width="1" height="77.9" fill="#6cb838" opacity="0.7"/>
<rect x="740.39" y="624.1" width="1" height="77.9" fill="#6cb838" opacity="0.7"/>
<rect x="255.2" y="699.7" width="515.5" height="1" fill="#a6e264" opacity="0.9"/>
<rect x="769.7" y="624.1" width="1" height="76.6" fill="#a6e264" opacity="0.9"/>
<rect x="255.2" y="700.6" width="516.8" height="1.4" fill="#2a4418"/>
<rect x="770.7" y="624.1" width="1.3" height="77.9" fill="#2a4418"/>
<rect x="255.2" y="624.1" width="516.8" height="1" fill="#b6f07e" opacity="0.8"/>
<rect x="255.2" y="624.1" width="1" height="77.9" fill="#b0ec78" opacity="0.8"/>
<rect x="549.8" y="637" width="62" height="64" fill="url(#hatch)"/>
<rect x="485.0" y="624.1" width="1" height="77" fill="#4e8a26"/>
<rect x="549.3" y="624.1" width="1" height="77" fill="#4e8a26"/>
<rect x="581.3" y="624.1" width="1" height="77" fill="#4e8a26"/>
<text x="489" y="635.2" font-size="8.5" font-weight="bold" fill="#26481a" stroke="#26481a" stroke-width="0.15">PIANO_02</text>
<text x="552.5" y="635.2" font-size="8.5" font-weight="bold" fill="#26481a" stroke="#26481a" stroke-width="0.15">PIANO</text>
<text x="585" y="635.2" font-size="8.5" font-weight="bold" fill="#26481a" stroke="#26481a" stroke-width="0.15">PIANO_07</text>
<rect x="256.0" y="662.4" width="38.0" height="1.6" fill="#22381a"/>
<path d="M293.2 663.2 L293.6 663.2 L294.0 659.1 L294.4 652.0 L294.8 653.2 L295.2 655.5 L295.6 655.4 L296.0 656.5 L296.4 658.2 L296.8 658.3 L297.2 658.4 L297.6 659.5 L298.0 659.9 L298.4 659.9 L298.8 660.3 L299.2 660.5 L299.6 660.3 L300.0 657.9 L300.4 650.0 L300.8 652.3 L301.2 654.1 L301.6 656.0 L302.0 656.0 L302.4 656.7 L302.8 658.0 L303.2 658.6 L303.6 658.6 L304.0 659.8 L304.4 659.6 L304.8 660.0 L305.2 660.2 L305.6 660.6 L306.0 660.6 L306.4 660.9 L306.8 660.9 L307.2 661.0 L307.6 661.1 L308.0 654.8 L308.4 652.6 L308.8 654.5 L309.2 655.6 L309.6 657.4 L310.0 657.8 L310.4 658.7 L310.8 659.7 L311.2 659.9 L311.6 660.8 L312.0 660.8 L312.4 661.1 L312.8 661.6 L313.2 661.7 L313.6 662.0 L314.0 662.0 L314.4 662.2 L314.8 662.4 L315.2 662.5 L315.6 662.7 L316.0 662.8 L316.4 662.9 L316.8 663.2 L316.8 663.2 L316.4 663.9 L316.0 664.4 L315.6 664.6 L315.2 665.2 L314.8 665.7 L314.4 665.7 L314.0 666.5 L313.6 666.2 L313.2 666.4 L312.8 666.9 L312.4 667.0 L312.0 668.0 L311.6 669.1 L311.2 668.6 L310.8 669.5 L310.4 671.1 L310.0 672.7 L309.6 675.7 L309.2 678.1 L308.8 680.1 L308.4 682.3 L308.0 683.8 L307.6 668.6 L307.2 669.5 L306.8 670.2 L306.4 668.8 L306.0 669.8 L305.6 669.9 L305.2 670.3 L304.8 669.9 L304.4 671.2 L304.0 669.6 L303.6 670.6 L303.2 671.1 L302.8 671.7 L302.4 674.1 L302.0 673.2 L301.6 675.6 L301.2 678.6 L300.8 681.5 L300.4 686.0 L300.0 671.0 L299.6 669.2 L299.2 668.9 L298.8 670.0 L298.4 670.4 L298.0 671.6 L297.6 671.8 L297.2 671.3 L296.8 671.3 L296.4 672.8 L296.0 675.0 L295.6 677.2 L295.2 676.3 L294.8 679.8 L294.4 682.1 L294.0 672.0 L293.6 663.2 L293.2 663.2Z" fill="#5e9232" stroke="#26421a" stroke-width="0.7" stroke-linejoin="round"/>
<path d="M317.0 663.2 L317.4 663.2 L317.8 663.2 L318.2 659.2 L318.6 655.0 L319.0 656.2 L319.4 657.0 L319.8 657.1 L320.2 657.9 L320.6 658.6 L321.0 659.3 L321.4 659.5 L321.8 653.2 L322.2 651.7 L322.6 653.2 L323.0 655.8 L323.4 656.7 L323.8 657.4 L324.2 658.0 L324.6 658.5 L325.0 658.9 L325.4 658.9 L325.8 659.6 L326.2 659.6 L326.6 660.1 L327.0 652.4 L327.4 652.1 L327.8 653.3 L328.2 655.4 L328.6 655.1 L329.0 656.9 L329.4 657.9 L329.8 658.6 L330.2 658.4 L330.6 659.0 L331.0 659.4 L331.4 659.8 L331.8 660.1 L332.2 660.6 L332.6 660.6 L333.0 649.7 L333.4 652.4 L333.8 654.0 L334.2 654.9 L334.6 656.7 L335.0 657.0 L335.4 657.3 L335.8 658.2 L336.2 658.7 L336.6 659.1 L337.0 659.8 L337.4 660.0 L337.8 660.0 L338.2 660.1 L338.6 660.6 L339.0 660.7 L339.4 660.8 L339.8 661.0 L340.2 660.9 L340.6 657.1 L341.0 652.7 L341.4 655.1 L341.8 656.0 L342.2 656.8 L342.6 658.5 L343.0 659.4 L343.4 659.9 L343.8 660.4 L344.2 660.4 L344.6 661.1 L345.0 661.4 L345.4 661.7 L345.8 661.9 L346.2 662.2 L346.6 662.2 L347.0 662.5 L347.4 662.6 L347.8 662.7 L348.2 663.0 L348.6 663.2 L348.6 663.2 L348.2 664.0 L347.8 664.4 L347.4 664.9 L347.0 665.3 L346.6 665.8 L346.2 666.3 L345.8 666.9 L345.4 666.6 L345.0 666.9 L344.6 667.9 L344.2 668.3 L343.8 668.8 L343.4 670.1 L343.0 671.3 L342.6 673.2 L342.2 673.4 L341.8 675.3 L341.4 679.8 L341.0 681.2 L340.6 678.3 L340.2 669.3 L339.8 670.2 L339.4 668.7 L339.0 668.9 L338.6 669.3 L338.2 668.8 L337.8 670.9 L337.4 670.4 L337.0 671.4 L336.6 671.3 L336.2 672.3 L335.8 672.8 L335.4 673.8 L335.0 674.8 L334.6 675.6 L334.2 679.6 L333.8 680.1 L333.4 681.9 L333.0 689.5 L332.6 669.9 L332.2 669.5 L331.8 669.2 L331.4 669.7 L331.0 670.0 L330.6 669.3 L330.2 670.6 L329.8 671.9 L329.4 670.7 L329.0 674.0 L328.6 673.2 L328.2 676.1 L327.8 677.0 L327.4 680.0 L327.0 679.7 L326.6 669.8 L326.2 669.2 L325.8 670.3 L325.4 670.1 L325.0 670.5 L324.6 670.4 L324.2 672.7 L323.8 673.8 L323.4 675.2 L323.0 675.8 L322.6 679.2 L322.2 682.6 L321.8 677.0 L321.4 670.4 L321.0 669.5 L320.6 669.9 L320.2 670.5 L319.8 670.5 L319.4 673.0 L319.0 672.8 L318.6 672.8 L318.2 667.2 L317.8 663.2 L317.4 663.2 L317.0 663.2Z" fill="#5e9232" stroke="#26421a" stroke-width="0.7" stroke-linejoin="round"/>
<path d="M349.0 663.2 L349.4 663.2 L349.8 663.2 L350.2 658.8 L350.6 652.5 L351.0 652.7 L351.4 655.1 L351.8 655.2 L352.2 656.5 L352.6 657.1 L353.0 658.3 L353.4 656.9 L353.8 655.2 L354.2 657.3 L354.6 657.3 L355.0 658.4 L355.4 659.1 L355.8 659.0 L356.2 659.8 L356.6 659.5 L357.0 660.1 L357.4 657.8 L357.8 651.8 L358.2 653.1 L358.6 654.2 L359.0 655.0 L359.4 655.9 L359.8 657.5 L360.2 657.5 L360.6 658.2 L361.0 658.7 L361.4 659.3 L361.8 659.3 L362.2 659.7 L362.6 660.0 L363.0 660.5 L363.4 660.5 L363.8 660.6 L364.2 660.6 L364.6 657.9 L365.0 650.2 L365.4 652.5 L365.8 653.7 L366.2 656.2 L366.6 657.0 L367.0 657.0 L367.4 658.4 L367.8 658.7 L368.2 659.4 L368.6 659.7 L369.0 659.5 L369.4 659.8 L369.8 660.5 L370.2 660.5 L370.6 660.5 L371.0 660.7 L371.4 660.9 L371.8 660.9 L372.2 661.0 L372.6 654.9 L373.0 653.1 L373.4 654.5 L373.8 655.6 L374.2 657.5 L374.6 658.1 L375.0 659.0 L375.4 659.9 L375.8 660.1 L376.2 660.6 L376.6 661.0 L377.0 661.3 L377.4 661.6 L377.8 661.8 L378.2 661.9 L378.6 662.2 L379.0 662.3 L379.4 662.4 L379.8 662.6 L380.2 662.8 L380.6 662.9 L381.0 663.2 L381.0 663.2 L380.6 663.9 L380.2 664.3 L379.8 665.0 L379.4 665.0 L379.0 665.7 L378.6 665.6 L378.2 666.4 L377.8 666.7 L377.4 667.0 L377.0 667.3 L376.6 668.2 L376.2 667.6 L375.8 669.4 L375.4 669.1 L375.0 671.6 L374.6 671.9 L374.2 671.7 L373.8 674.6 L373.4 678.6 L373.0 682.5 L372.6 681.5 L372.2 669.2 L371.8 668.9 L371.4 669.1 L371.0 669.0 L370.6 669.9 L370.2 669.8 L369.8 669.2 L369.4 669.8 L369.0 670.0 L368.6 669.4 L368.2 670.9 L367.8 671.2 L367.4 670.3 L367.0 671.9 L366.6 673.3 L366.2 674.1 L365.8 675.4 L365.4 679.1 L365.0 681.0 L364.6 669.9 L364.2 669.5 L363.8 668.9 L363.4 670.1 L363.0 669.9 L362.6 668.9 L362.2 671.0 L361.8 670.1 L361.4 671.6 L361.0 672.1 L360.6 671.0 L360.2 673.7 L359.8 674.7 L359.4 674.9 L359.0 675.3 L358.6 679.1 L358.2 679.3 L357.8 688.0 L357.4 672.8 L357.0 670.0 L356.6 669.9 L356.2 669.1 L355.8 670.5 L355.4 670.5 L355.0 669.9 L354.6 670.6 L354.2 672.1 L353.8 671.7 L353.4 672.2 L353.0 672.2 L352.6 673.2 L352.2 675.0 L351.8 677.3 L351.4 677.1 L351.0 683.8 L350.6 689.1 L350.2 673.1 L349.8 663.2 L349.4 663.2 L349.0 663.2Z" fill="#5e9232" stroke="#26421a" stroke-width="0.7" stroke-linejoin="round"/>
<path d="M381.2 663.2 L381.6 663.2 L382.0 661.9 L382.4 652.6 L382.8 651.8 L383.2 653.2 L383.6 655.0 L384.0 655.3 L384.4 656.7 L384.8 657.8 L385.2 658.0 L385.6 655.7 L386.0 657.0 L386.4 658.0 L386.8 658.1 L387.2 658.6 L387.6 659.4 L388.0 659.7 L388.4 659.9 L388.8 660.2 L389.2 657.5 L389.6 651.4 L390.0 653.8 L390.4 654.6 L390.8 655.9 L391.2 657.1 L391.6 657.4 L392.0 658.4 L392.4 659.0 L392.8 659.1 L393.2 659.5 L393.6 660.1 L394.0 660.2 L394.4 660.4 L394.8 660.7 L395.2 660.4 L395.6 660.7 L396.0 660.7 L396.4 651.8 L396.8 652.6 L397.2 655.1 L397.6 655.4 L398.0 656.7 L398.4 657.9 L398.8 658.5 L399.2 658.3 L399.6 659.4 L400.0 659.7 L400.4 659.8 L400.8 660.1 L401.2 660.3 L401.6 660.4 L402.0 660.6 L402.4 660.9 L402.8 660.9 L403.2 661.1 L403.6 661.1 L404.0 661.3 L404.4 651.8 L404.8 652.8 L405.2 654.6 L405.6 655.9 L406.0 657.5 L406.4 658.2 L406.8 658.9 L407.2 659.8 L407.6 660.0 L408.0 660.5 L408.4 660.9 L408.8 661.2 L409.2 661.4 L409.6 661.8 L410.0 662.1 L410.4 662.2 L410.8 662.4 L411.2 662.5 L411.6 662.6 L412.0 662.8 L412.4 663.0 L412.4 663.9 L412.0 664.4 L411.6 664.9 L411.2 665.3 L410.8 665.7 L410.4 665.6 L410.0 666.1 L409.6 667.0 L409.2 666.7 L408.8 667.0 L408.4 668.4 L408.0 668.7 L407.6 668.3 L407.2 670.5 L406.8 670.6 L406.4 672.8 L406.0 672.8 L405.6 675.6 L405.2 678.0 L404.8 680.2 L404.4 682.5 L404.0 668.8 L403.6 668.8 L403.2 670.2 L402.8 669.1 L402.4 669.5 L402.0 669.4 L401.6 669.7 L401.2 670.3 L400.8 670.9 L400.4 669.8 L400.0 671.1 L399.6 670.8 L399.2 672.5 L398.8 672.2 L398.4 673.1 L398.0 676.3 L397.6 677.7 L397.2 678.6 L396.8 682.7 L396.4 685.4 L396.0 668.6 L395.6 668.9 L395.2 670.1 L394.8 669.7 L394.4 670.4 L394.0 670.9 L393.6 669.8 L393.2 671.0 L392.8 671.8 L392.4 670.8 L392.0 672.6 L391.6 672.0 L391.2 675.2 L390.8 677.1 L390.4 676.5 L390.0 678.9 L389.6 686.8 L389.2 673.5 L388.8 668.8 L388.4 669.5 L388.0 670.7 L387.6 670.3 L387.2 670.9 L386.8 670.5 L386.4 672.1 L386.0 673.4 L385.6 673.6 L385.2 671.8 L384.8 671.7 L384.4 673.4 L384.0 673.8 L383.6 675.7 L383.2 678.1 L382.8 677.9 L382.4 683.3 L382.0 665.2 L381.6 663.2 L381.2 663.2Z" fill="#5e9232" stroke="#26421a" stroke-width="0.7" stroke-linejoin="round"/>
<path d="M412.8 663.2 L413.2 663.2 L413.6 660.9 L414.0 651.4 L414.4 652.7 L414.8 653.4 L415.2 655.2 L415.6 656.7 L416.0 656.7 L416.4 657.2 L416.8 657.4 L417.2 654.1 L417.6 656.1 L418.0 656.0 L418.4 657.2 L418.8 658.3 L419.2 659.0 L419.6 659.3 L420.0 659.7 L420.4 659.6 L420.8 660.0 L421.2 658.0 L421.6 651.3 L422.0 652.7 L422.4 653.8 L422.8 656.1 L423.2 656.8 L423.6 657.0 L424.0 657.9 L424.4 658.8 L424.8 659.2 L425.2 659.1 L425.6 659.5 L426.0 660.1 L426.4 660.1 L426.8 660.4 L427.2 660.4 L427.6 661.0 L428.0 660.9 L428.4 654.4 L428.8 653.5 L429.2 653.8 L429.6 655.7 L430.0 656.2 L430.4 657.7 L430.8 657.4 L431.2 658.4 L431.6 658.9 L432.0 659.4 L432.4 659.9 L432.8 659.8 L433.2 660.5 L433.6 660.6 L434.0 660.7 L434.4 660.8 L434.8 661.0 L435.2 661.1 L435.6 661.1 L436.0 661.1 L436.4 653.0 L436.8 652.8 L437.2 654.2 L437.6 655.8 L438.0 657.1 L438.4 657.9 L438.8 659.1 L439.2 659.1 L439.6 659.8 L440.0 660.4 L440.4 660.7 L440.8 661.2 L441.2 661.5 L441.6 661.6 L442.0 662.0 L442.4 661.9 L442.8 662.2 L443.2 662.4 L443.6 662.4 L444.0 662.7 L444.4 662.8 L444.8 662.9 L445.2 663.1 L445.2 663.5 L444.8 664.0 L444.4 664.5 L444.0 664.8 L443.6 665.3 L443.2 665.5 L442.8 665.9 L442.4 665.8 L442.0 666.2 L441.6 666.8 L441.2 667.5 L440.8 667.1 L440.4 667.7 L440.0 667.9 L439.6 668.2 L439.2 669.6 L438.8 670.7 L438.4 672.4 L438.0 673.4 L437.6 675.2 L437.2 675.8 L436.8 680.7 L436.4 679.1 L436.0 668.9 L435.6 668.8 L435.2 668.6 L434.8 669.5 L434.4 669.5 L434.0 669.1 L433.6 669.5 L433.2 670.6 L432.8 669.4 L432.4 669.7 L432.0 671.0 L431.6 670.6 L431.2 671.0 L430.8 671.8 L430.4 674.1 L430.0 674.4 L429.6 674.1 L429.2 675.3 L428.8 681.3 L428.4 678.5 L428.0 670.2 L427.6 669.9 L427.2 670.4 L426.8 670.6 L426.4 669.2 L426.0 670.4 L425.6 671.2 L425.2 669.7 L424.8 671.9 L424.4 671.1 L424.0 671.6 L423.6 674.1 L423.2 675.6 L422.8 675.1 L422.4 677.5 L422.0 679.0 L421.6 682.6 L421.2 673.2 L420.8 669.8 L420.4 669.2 L420.0 669.1 L419.6 670.0 L419.2 670.4 L418.8 671.9 L418.4 672.6 L418.0 672.2 L417.6 673.2 L417.2 676.2 L416.8 671.1 L416.4 671.7 L416.0 674.3 L415.6 674.1 L415.2 677.1 L414.8 678.0 L414.4 680.9 L414.0 684.9 L413.6 667.7 L413.2 663.2 L412.8 663.2Z" fill="#5e9232" stroke="#26421a" stroke-width="0.7" stroke-linejoin="round"/>
<path d="M445.3 663.2 L445.7 663.2 L446.1 661.0 L446.5 652.3 L446.9 653.4 L447.3 655.4 L447.7 656.3 L448.1 657.3 L448.5 658.0 L448.9 658.1 L449.3 658.7 L449.7 655.0 L450.1 656.0 L450.5 657.7 L450.9 657.7 L451.3 659.0 L451.7 659.3 L452.1 659.3 L452.5 659.8 L452.9 660.1 L453.3 656.0 L453.7 652.2 L454.1 653.4 L454.5 654.7 L454.9 655.6 L455.3 656.6 L455.7 657.1 L456.1 657.8 L456.5 658.6 L456.9 659.2 L457.3 659.6 L457.7 659.9 L458.1 659.9 L458.5 660.1 L458.9 660.5 L459.3 660.9 L459.7 660.6 L460.1 660.5 L460.5 649.1 L460.9 651.1 L461.3 652.8 L461.7 655.0 L462.1 655.2 L462.5 656.9 L462.9 657.2 L463.3 658.2 L463.7 659.1 L464.1 659.0 L464.5 659.2 L464.9 659.6 L465.3 660.2 L465.7 660.5 L466.1 660.7 L466.5 660.4 L466.9 660.7 L467.3 660.7 L467.7 661.0 L468.1 660.4 L468.5 649.3 L468.9 651.3 L469.3 654.2 L469.7 656.1 L470.1 657.3 L470.5 657.7 L470.9 658.6 L471.3 659.2 L471.7 659.7 L472.1 660.7 L472.5 660.9 L472.9 661.0 L473.3 661.3 L473.7 661.7 L474.1 661.9 L474.5 662.1 L474.9 662.3 L475.3 662.5 L475.7 662.5 L476.1 662.7 L476.5 662.8 L476.9 663.0 L476.9 663.7 L476.5 664.4 L476.1 664.7 L475.7 665.0 L475.3 665.6 L474.9 665.7 L474.5 666.1 L474.1 666.2 L473.7 666.5 L473.3 666.7 L472.9 667.6 L472.5 668.5 L472.1 668.4 L471.7 668.5 L471.3 669.7 L470.9 670.7 L470.5 670.5 L470.1 672.0 L469.7 674.1 L469.3 676.9 L468.9 682.8 L468.5 684.0 L468.1 668.7 L467.7 670.1 L467.3 669.4 L466.9 669.5 L466.5 668.9 L466.1 669.7 L465.7 670.3 L465.3 669.3 L464.9 671.0 L464.5 670.3 L464.1 671.6 L463.7 670.6 L463.3 672.9 L462.9 671.9 L462.5 674.4 L462.1 673.8 L461.7 678.4 L461.3 678.3 L460.9 684.1 L460.5 685.1 L460.1 669.0 L459.7 669.1 L459.3 670.2 L458.9 670.0 L458.5 670.5 L458.1 670.6 L457.7 670.7 L457.3 669.8 L456.9 671.2 L456.5 671.1 L456.1 673.9 L455.7 673.3 L455.3 673.4 L454.9 677.8 L454.5 679.6 L454.1 679.7 L453.7 683.2 L453.3 678.2 L452.9 670.0 L452.5 670.8 L452.1 669.9 L451.7 670.5 L451.3 669.9 L450.9 671.0 L450.5 671.4 L450.1 672.7 L449.7 673.3 L449.3 672.5 L448.9 672.5 L448.5 673.2 L448.1 674.9 L447.7 676.6 L447.3 676.1 L446.9 682.3 L446.5 680.6 L446.1 667.0 L445.7 663.2 L445.3 663.2Z" fill="#5e9232" stroke="#26421a" stroke-width="0.7" stroke-linejoin="round"/>
<path d="M477.3 663.2 L477.7 657.9 L478.1 652.6 L478.5 652.8 L478.9 653.6 L479.3 652.4 L479.7 652.9 L480.1 652.2 L480.5 652.7 L480.9 652.5 L481.3 653.0 L481.7 653.3 L482.1 652.7 L482.5 653.3 L482.9 653.4 L482.9 677.0 L482.5 679.5 L482.1 680.5 L481.7 678.6 L481.3 680.1 L480.9 677.9 L480.5 680.1 L480.1 677.5 L479.7 680.2 L479.3 678.1 L478.9 677.5 L478.5 677.0 L478.1 676.9 L477.7 670.5 L477.3 663.2Z" fill="#5e9232" stroke="#26421a" stroke-width="0.7" stroke-linejoin="round"/>
<path d="M485.6 663.2 L486.0 658.9 L486.4 655.6 L486.8 657.2 L487.2 657.4 L487.6 657.9 L488.0 658.6 L488.4 659.1 L488.8 655.6 L489.2 651.2 L489.6 652.4 L490.0 655.3 L490.4 655.0 L490.8 656.7 L491.2 656.9 L491.6 658.6 L492.0 655.4 L492.4 657.0 L492.8 656.9 L493.2 658.2 L493.6 658.5 L494.0 659.0 L494.4 659.4 L494.8 657.8 L495.2 655.3 L495.6 656.5 L496.0 656.7 L496.4 657.6 L496.8 658.4 L497.2 659.0 L497.6 659.7 L498.0 659.6 L498.4 652.5 L498.8 651.7 L499.2 652.4 L499.6 655.3 L500.0 656.3 L500.4 657.1 L500.8 657.7 L501.2 658.5 L501.6 658.4 L502.0 655.9 L502.4 656.4 L502.8 657.6 L503.2 658.2 L503.6 658.4 L504.0 659.2 L504.4 659.0 L504.8 659.5 L505.2 657.7 L505.6 650.7 L506.0 652.2 L506.4 654.0 L506.8 654.7 L507.2 657.0 L507.6 657.4 L508.0 657.7 L508.4 658.5 L508.8 658.6 L509.2 655.9 L509.6 657.2 L510.0 657.3 L510.4 658.6 L510.8 658.4 L511.2 659.0 L511.6 659.8 L512.0 654.8 L512.4 655.2 L512.8 656.1 L513.2 657.0 L513.6 658.0 L514.0 658.3 L514.4 658.9 L514.8 655.4 L515.2 651.8 L515.6 653.2 L516.0 654.7 L516.4 655.1 L516.8 656.8 L517.2 657.1 L517.6 657.3 L518.0 658.5 L518.4 656.9 L518.8 655.4 L519.2 657.0 L519.6 657.6 L520.0 658.2 L520.4 658.9 L520.8 659.0 L521.2 658.7 L521.6 652.8 L522.0 654.4 L522.4 655.0 L522.8 655.6 L523.2 656.4 L523.6 657.2 L524.0 658.5 L524.4 658.5 L524.8 657.9 L525.2 656.0 L525.6 656.2 L526.0 657.8 L526.4 657.4 L526.8 658.9 L527.2 659.3 L527.6 659.4 L528.0 650.4 L528.4 653.7 L528.8 654.3 L529.2 655.9 L529.6 656.0 L530.0 656.9 L530.4 658.4 L530.8 658.1 L531.2 655.8 L531.6 656.1 L532.0 657.9 L532.4 657.8 L532.8 659.0 L533.2 659.3 L533.6 659.5 L534.0 659.8 L534.4 653.9 L534.8 653.2 L535.2 654.5 L535.6 655.8 L536.0 656.5 L536.4 657.2 L536.8 658.3 L537.2 658.5 L537.6 659.4 L538.0 655.6 L538.4 655.4 L538.8 657.3 L539.2 657.7 L539.6 658.7 L540.0 658.5 L540.4 659.1 L540.8 660.0 L541.2 659.7 L541.6 660.0 L542.0 651.1 L542.4 653.2 L542.8 655.2 L543.2 656.0 L543.6 657.6 L544.0 658.7 L544.4 658.8 L544.8 659.7 L545.2 660.4 L545.6 660.7 L546.0 661.4 L546.4 661.6 L546.8 661.9 L547.2 662.3 L547.6 662.6 L548.0 662.9 L548.4 663.2 L548.4 663.2 L548.0 664.1 L547.6 664.5 L547.2 665.2 L546.8 665.8 L546.4 665.9 L546.0 666.6 L545.6 667.6 L545.2 667.6 L544.8 668.6 L544.4 668.6 L544.0 669.8 L543.6 670.9 L543.2 673.1 L542.8 676.1 L542.4 678.2 L542.0 683.2 L541.6 669.7 L541.2 670.8 L540.8 669.2 L540.4 670.9 L540.0 670.3 L539.6 670.7 L539.2 673.3 L538.8 672.3 L538.4 673.3 L538.0 676.0 L537.6 672.4 L537.2 671.9 L536.8 672.7 L536.4 675.1 L536.0 677.5 L535.6 676.6 L535.2 679.7 L534.8 685.9 L534.4 684.4 L534.0 669.2 L533.6 671.3 L533.2 671.4 L532.8 672.5 L532.4 672.9 L532.0 672.1 L531.6 673.9 L531.2 675.5 L530.8 670.8 L530.4 670.9 L530.0 674.5 L529.6 675.7 L529.2 676.3 L528.8 677.6 L528.4 681.9 L528.0 681.6 L527.6 670.8 L527.2 671.7 L526.8 671.5 L526.4 671.8 L526.0 671.7 L525.6 675.1 L525.2 674.9 L524.8 671.0 L524.4 672.4 L524.0 671.8 L523.6 672.6 L523.2 673.0 L522.8 676.3 L522.4 677.8 L522.0 680.1 L521.6 683.0 L521.2 671.8 L520.8 670.7 L520.4 671.1 L520.0 670.8 L519.6 672.3 L519.2 674.2 L518.8 673.8 L518.4 673.2 L518.0 671.1 L517.6 672.0 L517.2 672.3 L516.8 674.4 L516.4 676.1 L516.0 680.3 L515.6 682.5 L515.2 684.0 L514.8 677.3 L514.4 670.8 L514.0 671.0 L513.6 670.7 L513.2 670.5 L512.8 671.7 L512.4 674.0 L512.0 673.9 L511.6 671.4 L511.2 671.0 L510.8 671.1 L510.4 672.6 L510.0 673.0 L509.6 675.7 L509.2 677.8 L508.8 671.8 L508.4 671.5 L508.0 671.7 L507.6 673.0 L507.2 673.4 L506.8 677.3 L506.4 678.9 L506.0 680.1 L505.6 683.7 L505.2 672.4 L504.8 670.5 L504.4 669.4 L504.0 670.7 L503.6 670.9 L503.2 672.0 L502.8 670.4 L502.4 672.7 L502.0 673.7 L501.6 671.8 L501.2 670.6 L500.8 672.6 L500.4 673.6 L500.0 673.3 L499.6 676.0 L499.2 677.8 L498.8 680.7 L498.4 679.7 L498.0 670.5 L497.6 669.8 L497.2 671.4 L496.8 671.8 L496.4 672.0 L496.0 672.6 L495.6 671.4 L495.2 673.9 L494.8 670.6 L494.4 671.5 L494.0 671.5 L493.6 671.8 L493.2 672.5 L492.8 672.3 L492.4 673.4 L492.0 676.0 L491.6 671.8 L491.2 672.8 L490.8 674.0 L490.4 678.4 L490.0 678.7 L489.6 681.8 L489.2 683.2 L488.8 677.7 L488.4 671.3 L488.0 670.8 L487.6 670.6 L487.2 672.4 L486.8 671.6 L486.4 673.6 L486.0 669.3 L485.6 663.2Z" fill="#5e9232" stroke="#26421a" stroke-width="0.7" stroke-linejoin="round"/>
<path d="M550.2 663.2 L550.6 659.1 L551.0 651.2 L551.4 652.6 L551.8 654.1 L552.2 655.9 L552.6 655.5 L553.0 657.4 L553.4 657.0 L553.8 657.8 L554.2 658.9 L554.6 659.2 L555.0 659.2 L555.4 659.3 L555.8 659.8 L556.2 660.2 L556.6 660.1 L557.0 660.0 L557.4 660.4 L557.8 660.1 L558.2 660.3 L558.6 660.2 L559.0 660.5 L559.4 650.8 L559.8 652.0 L560.2 652.7 L560.6 655.2 L561.0 656.3 L561.4 657.0 L561.8 656.9 L562.2 657.3 L562.6 658.0 L563.0 658.9 L563.4 658.9 L563.8 659.7 L564.2 659.3 L564.6 659.5 L565.0 659.6 L565.4 660.0 L565.8 659.9 L566.2 660.3 L566.6 660.4 L567.0 654.6 L567.4 650.1 L567.8 653.2 L568.2 653.8 L568.6 656.1 L569.0 656.8 L569.4 658.1 L569.8 658.5 L570.2 659.0 L570.6 659.3 L571.0 660.1 L571.4 660.2 L571.8 660.7 L572.2 660.7 L572.6 661.0 L573.0 661.1 L573.4 661.5 L573.8 661.4 L574.2 661.6 L574.6 661.9 L575.0 661.8 L575.4 662.1 L575.8 662.0 L576.2 662.2 L576.6 662.4 L577.0 662.5 L577.4 662.6 L577.8 662.7 L578.2 662.8 L578.6 663.0 L578.6 663.7 L578.2 664.0 L577.8 664.3 L577.4 664.6 L577.0 665.1 L576.6 665.1 L576.2 665.1 L575.8 665.8 L575.4 665.8 L575.0 666.1 L574.6 666.1 L574.2 666.7 L573.8 666.2 L573.4 666.4 L573.0 666.6 L572.6 666.8 L572.2 667.9 L571.8 667.4 L571.4 668.9 L571.0 667.9 L570.6 669.7 L570.2 669.0 L569.8 670.7 L569.4 670.5 L569.0 673.6 L568.6 672.1 L568.2 673.8 L567.8 676.1 L567.4 680.1 L567.0 676.4 L566.6 669.0 L566.2 669.9 L565.8 669.2 L565.4 670.1 L565.0 669.5 L564.6 669.1 L564.2 668.9 L563.8 669.1 L563.4 671.1 L563.0 670.4 L562.6 670.3 L562.2 672.5 L561.8 671.2 L561.4 672.5 L561.0 673.7 L560.6 675.2 L560.2 679.0 L559.8 682.4 L559.4 685.9 L559.0 669.5 L558.6 669.6 L558.2 670.1 L557.8 670.2 L557.4 670.0 L557.0 669.4 L556.6 670.3 L556.2 670.2 L555.8 670.6 L555.4 670.0 L555.0 669.7 L554.6 669.5 L554.2 671.0 L553.8 671.9 L553.4 670.5 L553.0 672.6 L552.6 673.5 L552.2 676.8 L551.8 678.9 L551.4 677.9 L551.0 682.0 L550.6 668.8 L550.2 663.2Z" fill="#5e9232" stroke="#26421a" stroke-width="0.7" stroke-linejoin="round"/>
<rect x="578.0" y="662.4" width="4.0" height="1.6" fill="#22381a"/>
<path d="M581.9 663.2 L582.3 663.2 L582.7 657.9 L583.1 652.5 L583.5 652.2 L583.9 655.1 L584.3 655.3 L584.7 657.1 L585.1 657.3 L585.5 653.4 L585.9 654.6 L586.3 656.4 L586.7 656.9 L587.1 657.4 L587.5 658.4 L587.9 659.3 L588.3 653.6 L588.7 652.0 L589.1 652.6 L589.5 655.0 L589.9 655.2 L590.3 657.0 L590.7 657.0 L591.1 658.2 L591.5 658.7 L591.9 656.1 L592.3 655.2 L592.7 655.7 L593.1 656.5 L593.5 657.7 L593.9 658.3 L594.3 659.1 L594.7 659.6 L595.1 659.6 L595.5 659.8 L595.9 658.4 L596.3 650.5 L596.7 652.6 L597.1 655.0 L597.5 654.9 L597.9 656.2 L598.3 657.3 L598.7 658.0 L599.1 658.2 L599.5 659.3 L599.9 659.0 L600.3 659.6 L600.7 659.8 L601.1 660.0 L601.5 660.6 L601.9 653.0 L602.3 652.0 L602.7 653.7 L603.1 654.5 L603.5 655.4 L603.9 657.2 L604.3 657.4 L604.7 658.3 L605.1 658.7 L605.5 658.9 L605.9 659.8 L606.3 659.6 L606.7 659.9 L607.1 660.6 L607.5 660.3 L607.9 660.5 L608.3 657.5 L608.7 651.4 L609.1 653.1 L609.5 653.1 L609.9 654.5 L610.3 655.9 L610.7 657.3 L611.1 658.2 L611.5 658.3 L611.9 659.1 L612.3 659.3 L612.7 659.6 L613.1 659.8 L613.5 660.0 L613.9 660.6 L614.3 655.7 L614.7 650.9 L615.1 653.3 L615.5 653.8 L615.9 655.1 L616.3 656.2 L616.7 657.2 L617.1 657.6 L617.5 658.3 L617.9 658.7 L618.3 659.6 L618.7 659.5 L619.1 660.1 L619.5 659.9 L619.9 660.5 L620.3 660.7 L620.7 658.7 L621.1 652.4 L621.5 653.8 L621.9 655.6 L622.3 656.8 L622.7 657.3 L623.1 657.6 L623.5 658.1 L623.9 658.5 L624.3 659.5 L624.7 659.8 L625.1 660.0 L625.5 660.1 L625.9 660.6 L626.3 660.5 L626.7 660.7 L627.1 660.8 L627.5 660.7 L627.9 661.1 L628.3 661.2 L628.7 653.7 L629.1 654.3 L629.5 655.4 L629.9 657.1 L630.3 657.2 L630.7 658.4 L631.1 659.2 L631.5 660.1 L631.9 660.6 L632.3 660.6 L632.7 661.0 L633.1 661.5 L633.5 661.8 L633.9 662.0 L634.3 662.2 L634.7 662.5 L635.1 662.7 L635.5 662.9 L635.9 663.1 L635.9 663.5 L635.5 664.1 L635.1 664.7 L634.7 665.1 L634.3 665.2 L633.9 665.9 L633.5 666.0 L633.1 666.3 L632.7 667.4 L632.3 667.2 L631.9 667.7 L631.5 668.7 L631.1 669.4 L630.7 670.2 L630.3 673.1 L629.9 674.2 L629.5 674.3 L629.1 678.4 L628.7 677.7 L628.3 668.7 L627.9 669.4 L627.5 669.4 L627.1 670.2 L626.7 670.0 L626.3 669.7 L625.9 669.2 L625.5 669.8 L625.1 670.8 L624.7 669.6 L624.3 671.6 L623.9 671.6 L623.5 673.5 L623.1 674.7 L622.7 673.5 L622.3 676.8 L621.9 676.7 L621.5 683.5 L621.1 686.5 L620.7 671.5 L620.3 668.8 L619.9 669.5 L619.5 670.6 L619.1 670.3 L618.7 669.9 L618.3 670.5 L617.9 670.8 L617.5 670.3 L617.1 671.5 L616.7 672.7 L616.3 674.2 L615.9 673.3 L615.5 678.1 L615.1 676.8 L614.7 681.1 L614.3 674.4 L613.9 669.1 L613.5 669.9 L613.1 670.8 L612.7 670.9 L612.3 671.6 L611.9 670.3 L611.5 671.0 L611.1 672.2 L610.7 673.5 L610.3 673.5 L609.9 676.9 L609.5 681.5 L609.1 685.1 L608.7 684.4 L608.3 673.0 L607.9 670.3 L607.5 670.4 L607.1 670.0 L606.7 669.9 L606.3 670.2 L605.9 670.7 L605.5 671.2 L605.1 670.2 L604.7 672.6 L604.3 671.5 L603.9 674.5 L603.5 674.8 L603.1 676.9 L602.7 678.8 L602.3 680.4 L601.9 682.1 L601.5 670.3 L601.1 670.1 L600.7 670.5 L600.3 669.8 L599.9 670.2 L599.5 670.9 L599.1 672.0 L598.7 673.8 L598.3 675.0 L597.9 674.9 L597.5 675.6 L597.1 678.0 L596.7 683.3 L596.3 683.7 L595.9 672.9 L595.5 670.4 L595.1 670.7 L594.7 669.8 L594.3 669.8 L593.9 671.2 L593.5 670.0 L593.1 671.2 L592.7 673.1 L592.3 672.8 L591.9 672.7 L591.5 671.8 L591.1 670.6 L590.7 672.1 L590.3 673.7 L589.9 674.2 L589.5 675.7 L589.1 680.3 L588.7 682.0 L588.3 680.5 L587.9 669.8 L587.5 671.4 L587.1 670.9 L586.7 670.7 L586.3 672.7 L585.9 674.2 L585.5 673.4 L585.1 672.1 L584.7 672.4 L584.3 673.4 L583.9 675.2 L583.5 680.9 L583.1 679.6 L582.7 671.9 L582.3 663.2 L581.9 663.2Z" fill="#5e9232" stroke="#26421a" stroke-width="0.7" stroke-linejoin="round"/>
<path d="M637.2 663.2 L637.6 662.1 L638.0 650.8 L638.4 652.4 L638.8 654.5 L639.2 655.4 L639.6 656.8 L640.0 657.1 L640.4 657.7 L640.8 658.3 L641.2 656.4 L641.6 657.1 L642.0 657.8 L642.4 658.8 L642.8 658.4 L643.2 659.3 L643.6 659.7 L644.0 652.1 L644.4 652.6 L644.8 654.4 L645.2 655.3 L645.6 656.1 L646.0 656.9 L646.4 658.5 L646.8 658.5 L647.2 659.0 L647.6 659.3 L648.0 660.0 L648.4 654.3 L648.8 651.9 L649.2 654.6 L649.6 655.2 L650.0 656.4 L650.4 657.7 L650.8 657.9 L651.2 658.3 L651.6 659.4 L652.0 659.4 L652.4 659.7 L652.8 656.4 L653.2 651.3 L653.6 654.2 L654.0 654.0 L654.4 655.2 L654.8 657.2 L655.2 657.6 L655.6 658.2 L656.0 658.9 L656.4 659.3 L656.8 659.8 L657.2 660.1 L657.6 660.4 L658.0 660.4 L658.4 660.6 L658.8 660.5 L659.2 660.6 L659.6 660.7 L660.0 651.7 L660.4 652.9 L660.8 653.8 L661.2 655.4 L661.6 657.7 L662.0 658.4 L662.4 658.9 L662.8 659.2 L663.2 659.8 L663.6 660.7 L664.0 660.9 L664.4 661.3 L664.8 661.5 L665.2 661.7 L665.6 661.8 L666.0 662.0 L666.4 662.1 L666.8 662.3 L667.2 662.5 L667.6 662.7 L668.0 662.8 L668.4 662.9 L668.8 663.0 L668.8 663.7 L668.4 664.2 L668.0 664.7 L667.6 665.0 L667.2 665.2 L666.8 665.4 L666.4 665.5 L666.0 666.5 L665.6 666.1 L665.2 667.0 L664.8 667.3 L664.4 667.5 L664.0 667.3 L663.6 667.8 L663.2 669.8 L662.8 669.0 L662.4 671.4 L662.0 671.9 L661.6 673.6 L661.2 675.6 L660.8 676.5 L660.4 680.9 L660.0 685.9 L659.6 669.2 L659.2 669.6 L658.8 669.2 L658.4 670.2 L658.0 670.4 L657.6 670.2 L657.2 670.1 L656.8 669.4 L656.4 671.2 L656.0 671.6 L655.6 672.2 L655.2 671.0 L654.8 672.0 L654.4 675.7 L654.0 676.4 L653.6 678.0 L653.2 678.8 L652.8 675.4 L652.4 670.0 L652.0 671.1 L651.6 671.4 L651.2 670.7 L650.8 671.0 L650.4 672.0 L650.0 672.9 L649.6 677.4 L649.2 677.9 L648.8 682.8 L648.4 678.2 L648.0 669.7 L647.6 671.0 L647.2 671.7 L646.8 670.2 L646.4 671.5 L646.0 671.7 L645.6 672.3 L645.2 676.0 L644.8 676.0 L644.4 678.5 L644.0 683.7 L643.6 670.7 L643.2 671.1 L642.8 671.9 L642.4 671.5 L642.0 672.2 L641.6 672.8 L641.2 676.5 L640.8 671.4 L640.4 672.1 L640.0 672.0 L639.6 672.7 L639.2 673.9 L638.8 677.8 L638.4 677.0 L638.0 680.1 L637.6 664.9 L637.2 663.2Z" fill="#5e9232" stroke="#26421a" stroke-width="0.7" stroke-linejoin="round"/>
<path d="M669.8 663.2 L670.2 662.0 L670.6 650.8 L671.0 653.2 L671.4 655.4 L671.8 655.6 L672.2 657.2 L672.6 657.9 L673.0 658.5 L673.4 658.5 L673.8 659.0 L674.2 659.2 L674.6 655.1 L675.0 656.4 L675.4 656.9 L675.8 657.7 L676.2 658.1 L676.6 658.6 L677.0 659.0 L677.4 659.3 L677.8 659.9 L678.2 656.1 L678.6 652.9 L679.0 653.4 L679.4 655.8 L679.8 656.6 L680.2 657.2 L680.6 658.0 L681.0 658.6 L681.4 658.8 L681.8 659.1 L682.2 659.5 L682.6 659.9 L683.0 660.0 L683.4 660.2 L683.8 660.7 L684.2 660.6 L684.6 660.7 L685.0 650.2 L685.4 652.0 L685.8 654.5 L686.2 654.8 L686.6 655.8 L687.0 657.0 L687.4 657.3 L687.8 658.2 L688.2 659.0 L688.6 659.2 L689.0 659.9 L689.4 659.6 L689.8 660.1 L690.2 660.4 L690.6 660.3 L691.0 660.6 L691.4 660.6 L691.8 660.9 L692.2 660.9 L692.6 653.8 L693.0 653.1 L693.4 654.2 L693.8 654.9 L694.2 656.7 L694.6 658.4 L695.0 658.8 L695.4 659.6 L695.8 660.3 L696.2 660.6 L696.6 660.8 L697.0 661.2 L697.4 661.7 L697.8 661.7 L698.2 662.0 L698.6 662.2 L699.0 662.4 L699.4 662.6 L699.8 662.8 L700.2 663.0 L700.2 663.8 L699.8 664.5 L699.4 664.9 L699.0 664.9 L698.6 665.7 L698.2 666.0 L697.8 665.9 L697.4 666.3 L697.0 667.3 L696.6 667.2 L696.2 668.2 L695.8 668.0 L695.4 668.8 L695.0 669.1 L694.6 670.8 L694.2 672.9 L693.8 674.3 L693.4 677.5 L693.0 678.4 L692.6 679.6 L692.2 670.1 L691.8 669.8 L691.4 669.0 L691.0 669.6 L690.6 669.6 L690.2 668.8 L689.8 670.1 L689.4 670.6 L689.0 670.1 L688.6 670.4 L688.2 670.2 L687.8 671.9 L687.4 671.8 L687.0 673.8 L686.6 674.4 L686.2 675.6 L685.8 675.7 L685.4 679.7 L685.0 681.1 L684.6 669.1 L684.2 669.4 L683.8 668.9 L683.4 668.9 L683.0 670.0 L682.6 670.0 L682.2 670.7 L681.8 670.1 L681.4 672.1 L681.0 672.4 L680.6 671.7 L680.2 672.7 L679.8 674.1 L679.4 678.1 L679.0 677.3 L678.6 682.8 L678.2 675.1 L677.8 669.5 L677.4 669.8 L677.0 670.6 L676.6 669.4 L676.2 669.7 L675.8 670.7 L675.4 672.9 L675.0 671.7 L674.6 672.0 L674.2 670.7 L673.8 670.9 L673.4 672.5 L673.0 671.2 L672.6 672.6 L672.2 674.5 L671.8 675.1 L671.4 676.2 L671.0 682.8 L670.6 684.1 L670.2 665.3 L669.8 663.2Z" fill="#5e9232" stroke="#26421a" stroke-width="0.7" stroke-linejoin="round"/>
<path d="M701.6 663.2 L702.0 663.2 L702.4 651.8 L702.8 650.1 L703.2 654.0 L703.6 654.1 L704.0 654.9 L704.4 656.4 L704.8 657.4 L705.2 658.2 L705.6 658.6 L706.0 658.9 L706.4 659.7 L706.8 658.0 L707.2 655.5 L707.6 656.3 L708.0 657.5 L708.4 657.6 L708.8 658.6 L709.2 659.2 L709.6 659.8 L710.0 659.6 L710.4 660.0 L710.8 655.9 L711.2 652.4 L711.6 654.2 L712.0 655.7 L712.4 656.2 L712.8 656.6 L713.2 657.8 L713.6 658.4 L714.0 658.5 L714.4 659.3 L714.8 659.6 L715.2 659.6 L715.6 660.4 L716.0 660.4 L716.4 660.6 L716.8 651.8 L717.2 652.9 L717.6 654.6 L718.0 654.8 L718.4 656.2 L718.8 656.9 L719.2 658.4 L719.6 658.5 L720.0 658.8 L720.4 659.5 L720.8 660.0 L721.2 659.9 L721.6 660.2 L722.0 660.5 L722.4 660.8 L722.8 660.9 L723.2 661.0 L723.6 660.7 L724.0 661.1 L724.4 655.8 L724.8 651.6 L725.2 654.9 L725.6 656.3 L726.0 656.3 L726.4 657.8 L726.8 658.4 L727.2 659.5 L727.6 660.2 L728.0 660.5 L728.4 661.1 L728.8 661.6 L729.2 661.6 L729.6 662.0 L730.0 662.1 L730.4 662.3 L730.8 662.6 L731.2 662.8 L731.6 663.0 L731.6 663.6 L731.2 664.3 L730.8 664.6 L730.4 665.5 L730.0 665.9 L729.6 665.8 L729.2 666.7 L728.8 666.7 L728.4 668.1 L728.0 668.0 L727.6 668.5 L727.2 669.6 L726.8 670.4 L726.4 672.9 L726.0 674.9 L725.6 677.9 L725.2 679.6 L724.8 684.5 L724.4 678.4 L724.0 669.3 L723.6 670.1 L723.2 669.7 L722.8 668.9 L722.4 669.2 L722.0 668.7 L721.6 670.6 L721.2 670.6 L720.8 670.7 L720.4 670.7 L720.0 671.4 L719.6 670.2 L719.2 673.2 L718.8 673.4 L718.4 674.1 L718.0 675.5 L717.6 677.7 L717.2 679.1 L716.8 683.6 L716.4 669.7 L716.0 670.3 L715.6 669.0 L715.2 670.5 L714.8 670.0 L714.4 671.5 L714.0 671.7 L713.6 672.8 L713.2 671.8 L712.8 674.3 L712.4 673.8 L712.0 675.6 L711.6 677.2 L711.2 683.1 L710.8 676.8 L710.4 669.8 L710.0 670.7 L709.6 670.3 L709.2 671.3 L708.8 671.3 L708.4 672.1 L708.0 672.1 L707.6 673.1 L707.2 673.8 L706.8 669.4 L706.4 669.4 L706.0 671.5 L705.6 671.0 L705.2 672.1 L704.8 671.4 L704.4 673.5 L704.0 675.4 L703.6 675.6 L703.2 679.1 L702.8 679.7 L702.4 681.3 L702.0 663.2 L701.6 663.2Z" fill="#5e9232" stroke="#26421a" stroke-width="0.7" stroke-linejoin="round"/>
<path d="M732.0 663.2 L732.4 663.2 L732.8 656.1 L733.2 652.8 L733.6 653.5 L734.0 655.5 L734.4 656.1 L734.8 657.2 L735.2 657.7 L735.6 658.1 L736.0 659.0 L736.4 659.4 L736.8 656.4 L737.2 652.0 L737.6 653.7 L738.0 653.7 L738.4 655.3 L738.8 657.2 L739.2 657.5 L739.6 658.6 L740.0 658.5 L740.4 658.9 L740.8 659.8 L741.2 660.1 L741.6 659.9 L742.0 655.5 L742.4 651.5 L742.8 651.8 L743.2 653.7 L743.6 656.0 L744.0 656.9 L744.4 657.6 L744.8 658.2 L745.2 658.5 L745.6 658.9 L746.0 659.1 L746.4 659.9 L746.8 659.8 L747.2 655.2 L747.6 651.4 L748.0 653.1 L748.4 654.6 L748.8 656.1 L749.2 655.9 L749.6 656.7 L750.0 658.1 L750.4 658.5 L750.8 658.7 L751.2 654.8 L751.6 652.5 L752.0 654.1 L752.4 655.1 L752.8 657.1 L753.2 657.4 L753.6 658.6 L754.0 658.8 L754.4 658.7 L754.8 659.6 L755.2 659.9 L755.6 660.0 L756.0 660.2 L756.4 653.0 L756.8 653.0 L757.2 653.6 L757.6 654.4 L758.0 656.4 L758.4 657.0 L758.8 658.0 L759.2 658.0 L759.6 658.9 L760.0 659.3 L760.4 659.4 L760.8 659.9 L761.2 660.0 L761.6 655.2 L762.0 651.5 L762.4 653.1 L762.8 655.5 L763.2 655.5 L763.6 657.2 L764.0 657.7 L764.4 658.2 L764.8 659.2 L765.2 658.9 L765.6 659.5 L766.0 659.7 L766.4 660.2 L766.8 655.8 L767.2 650.0 L767.6 653.3 L768.0 654.9 L768.4 656.8 L768.8 657.5 L769.2 658.0 L769.6 659.3 L770.0 660.1 L770.4 660.6 L770.8 660.7 L771.2 661.1 L771.6 661.5 L772.0 661.8 L772.4 661.9 L772.8 662.1 L773.2 662.4 L773.6 662.4 L774.0 662.6 L774.4 662.8 L774.8 663.0 L774.8 663.7 L774.4 664.2 L774.0 664.6 L773.6 664.8 L773.2 665.6 L772.8 666.0 L772.4 666.5 L772.0 666.6 L771.6 667.3 L771.2 667.0 L770.8 668.1 L770.4 668.2 L770.0 669.6 L769.6 671.1 L769.2 670.7 L768.8 673.9 L768.4 674.3 L768.0 677.8 L767.6 679.5 L767.2 683.3 L766.8 677.0 L766.4 670.6 L766.0 669.8 L765.6 671.1 L765.2 671.0 L764.8 671.8 L764.4 672.9 L764.0 672.9 L763.6 673.0 L763.2 675.2 L762.8 676.5 L762.4 677.3 L762.0 681.0 L761.6 679.4 L761.2 669.8 L760.8 670.1 L760.4 671.4 L760.0 670.7 L759.6 670.3 L759.2 671.6 L758.8 672.2 L758.4 674.4 L758.0 674.4 L757.6 675.7 L757.2 677.9 L756.8 682.3 L756.4 681.3 L756.0 669.1 L755.6 669.2 L755.2 670.2 L754.8 671.7 L754.4 672.5 L754.0 673.2 L753.6 672.6 L753.2 672.9 L752.8 676.0 L752.4 678.2 L752.0 682.8 L751.6 684.2 L751.2 679.4 L750.8 670.9 L750.4 672.2 L750.0 673.6 L749.6 672.7 L749.2 674.2 L748.8 674.8 L748.4 677.9 L748.0 681.6 L747.6 685.0 L747.2 678.4 L746.8 670.7 L746.4 669.7 L746.0 670.7 L745.6 670.4 L745.2 669.9 L744.8 672.0 L744.4 672.0 L744.0 672.4 L743.6 673.8 L743.2 677.1 L742.8 675.9 L742.4 682.0 L742.0 673.7 L741.6 669.2 L741.2 669.8 L740.8 669.6 L740.4 670.0 L740.0 670.4 L739.6 671.6 L739.2 673.2 L738.8 674.0 L738.4 673.4 L738.0 675.9 L737.6 677.2 L737.2 681.2 L736.8 675.0 L736.4 670.3 L736.0 671.5 L735.6 672.5 L735.2 672.2 L734.8 673.2 L734.4 674.5 L734.0 677.9 L733.6 681.4 L733.2 682.6 L732.8 676.7 L732.4 663.2 L732.0 663.2Z" fill="#5e9232" stroke="#26421a" stroke-width="0.7" stroke-linejoin="round"/>
<rect x="0" y="733" width="768" height="35" fill="#222527"/>
<rect x="0" y="733" width="768" height="2.2" fill="#0c0e0f"/>
<rect x="0" y="730.7" width="768" height="2.3" fill="#dfe3e3"/>
<rect x="-4" y="742" width="59" height="17.8" rx="2" fill="url(#gbtn)"/>
<text x="-2.2" y="754.2" font-size="9" font-weight="bold" fill="#1c1e20">New Parts</text>
<rect x="58.3" y="748.5" width="1.4" height="1.4" fill="#a0a4a6"/>
<rect x="58.3" y="751.5" width="1.4" height="1.4" fill="#a0a4a6"/>
<rect x="58.3" y="754.5" width="1.4" height="1.4" fill="#a0a4a6"/>
<rect x="287.4" y="738.5" width="103.6" height="25.4" rx="2" fill="#0a0a0b"/>
<rect x="288.0" y="739.3" width="18" height="23.8" rx="3.5" fill="none" stroke="#7a7e80" stroke-width="0.9"/>
<rect x="290.0" y="741.3" width="14" height="19.8" rx="1.5" fill="url(#gbtnd)"/>
<path d="M292.9 745.5 h7.5 l-7.5 8.5z" fill="#0e0f10"/>
<text x="338.0" y="756.4" font-size="10" font-weight="bold" fill="#e0e4e4" text-anchor="end">15.</text>
<text x="352.4" y="756.4" font-size="10" font-weight="bold" fill="#e0e4e4" text-anchor="end">1.</text>
<text x="367.3" y="756.4" font-size="10" font-weight="bold" fill="#e0e4e4" text-anchor="end">1.</text>
<text x="386.5" y="756.4" font-size="10" font-weight="bold" fill="#e0e4e4" text-anchor="end">0</text>
<rect x="394.4" y="738.5" width="103.3" height="25.4" rx="2" fill="#0a0a0b"/>
<rect x="395.0" y="739.3" width="18" height="23.8" rx="3.5" fill="none" stroke="#7a7e80" stroke-width="0.9"/>
<rect x="397.0" y="741.3" width="14" height="19.8" rx="1.5" fill="url(#gbtnd)"/>
<path d="M398.9 745.5 h7.5 v8.5z" fill="#0e0f10"/>
<text x="444.7" y="756.4" font-size="10" font-weight="bold" fill="#e0e4e4" text-anchor="end">16.</text>
<text x="459.1" y="756.4" font-size="10" font-weight="bold" fill="#e0e4e4" text-anchor="end">1.</text>
<text x="474.0" y="756.4" font-size="10" font-weight="bold" fill="#e0e4e4" text-anchor="end">1.</text>
<text x="493.2" y="756.4" font-size="10" font-weight="bold" fill="#e0e4e4" text-anchor="end">0</text>
<rect x="501.3" y="740.2" width="35.7" height="24.4" rx="4.5" fill="#0a0a0b" stroke="#666a6c" stroke-width="1"/>
<rect x="504.9" y="743" width="12.6" height="18.6" rx="1.5" fill="url(#gbtng)"/>
<rect x="521.9" y="743" width="12.4" height="18.6" rx="1.5" fill="url(#gbtng)"/>
<path d="M507.3 749.2 h7.4 l-3.7 4.6z" fill="#101112"/><circle cx="510.9" cy="756.8" r="1.35" fill="#101112"/>
<path d="M524.4 757.2 h7.4 l-3.7 -4.6z" fill="#101112"/><circle cx="528" cy="749.4" r="1.35" fill="#101112"/>
<rect x="540.5" y="748.5" width="1.4" height="1.4" fill="#a0a4a6"/>
<rect x="764.5" y="748.5" width="1.4" height="1.4" fill="#a0a4a6"/>
<rect x="540.5" y="751.5" width="1.4" height="1.4" fill="#a0a4a6"/>
<rect x="764.5" y="751.5" width="1.4" height="1.4" fill="#a0a4a6"/>
<rect x="540.5" y="754.5" width="1.4" height="1.4" fill="#a0a4a6"/>
<rect x="764.5" y="754.5" width="1.4" height="1.4" fill="#a0a4a6"/>
<rect x="545.4" y="740.5" width="215.6" height="23.3" rx="3" fill="#101112" stroke="#55595b" stroke-width="0.8"/>
<rect x="547.3" y="742" width="14.4" height="20.3" rx="1.5" fill="url(#gbtn)" stroke="#1a1c1e" stroke-width="0.8"/>
<rect x="562.3" y="742" width="14.9" height="20.3" rx="1.5" fill="url(#gbtn)" stroke="#1a1c1e" stroke-width="0.8"/>
<rect x="577.8" y="742" width="29.9" height="20.3" rx="1.5" fill="url(#gbtn)" stroke="#1a1c1e" stroke-width="0.8"/>
<rect x="608.3" y="742" width="29.9" height="20.3" rx="1.5" fill="url(#gbtn)" stroke="#1a1c1e" stroke-width="0.8"/>
<rect x="638.8" y="742" width="29.4" height="20.3" rx="1.5" fill="url(#gbtn)" stroke="#1a1c1e" stroke-width="0.8"/>
<rect x="668.8" y="742" width="29.9" height="20.3" rx="1.5" fill="url(#gbtn)" stroke="#1a1c1e" stroke-width="0.8"/>
<rect x="699.3" y="742" width="28.9" height="20.3" rx="1.5" fill="url(#ggreen)" stroke="#1a1c1e" stroke-width="0.8"/>
<rect x="728.8" y="742" width="29.9" height="20.3" rx="1.5" fill="url(#gbtn)" stroke="#1a1c1e" stroke-width="0.8"/>
<rect x="551" y="748" width="1.4" height="8.4" fill="#1a1c1e"/><path d="M558.5 748 v8.4 l-5.2 -4.2z" fill="#1a1c1e"/>
<rect x="573" y="748" width="1.4" height="8.4" fill="#1a1c1e"/><path d="M566 748 v8.4 l5.2 -4.2z" fill="#1a1c1e"/>
<path d="M592.5 748 v8.4 l-4.8 -4.2z M597.5 748 v8.4 l-4.8 -4.2z" fill="#1a1c1e"/>
<path d="M618.5 748 v8.4 l4.8 -4.2z M623.5 748 v8.4 l4.8 -4.2z" fill="#1a1c1e"/>
<path d="M650.5 755 C646 753.5 648 749.5 653.5 749.5 C659 749.5 661 753.5 656.5 755" fill="none" stroke="#1a1c1e" stroke-width="1.4"/><path d="M656 752.6 l-4.2 2.6 l4.2 2.4z" fill="#1a1c1e"/>
<rect x="680" y="749.6" width="6.2" height="6.2" fill="#1a1c1e"/>
<path d="M710.8 749.5 v6.9 l6 -3.45z" fill="#1a1c1e"/>
<circle cx="743.5" cy="752.7" r="3.1" fill="#1a1c1e"/>
</svg></body></html>
